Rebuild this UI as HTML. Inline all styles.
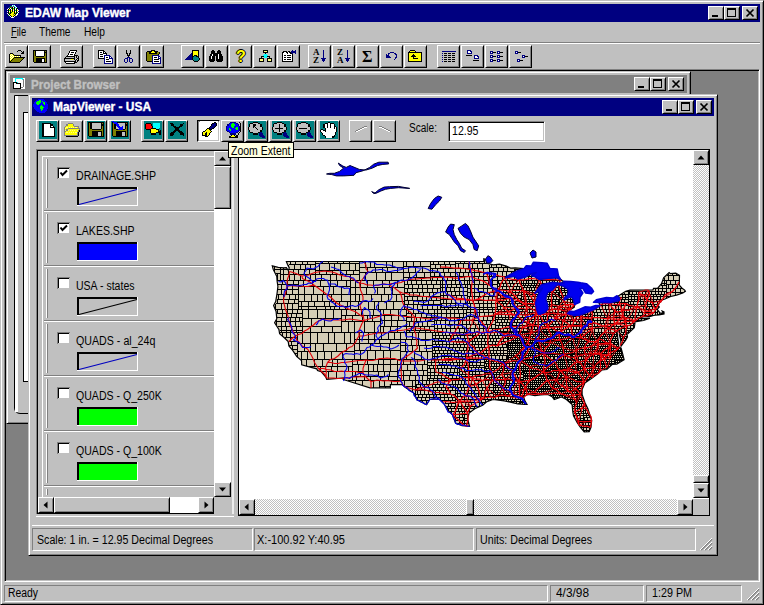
<!DOCTYPE html>
<html><head><meta charset="utf-8"><title>EDAW Map Viewer</title>
<style>
html,body{margin:0;padding:0;}
body{width:764px;height:605px;overflow:hidden;background:#c0c0c0;position:relative;font-family:"Liberation Sans",sans-serif;}
.a{position:absolute;box-sizing:border-box;}
.t{position:absolute;white-space:nowrap;transform-origin:0 0;display:block;}
.t u{text-decoration:underline;}
.dith{background-image:conic-gradient(#fff 25%,#c0c0c0 0 50%,#fff 0 75%,#c0c0c0 0);background-size:2px 2px;}
svg{overflow:visible}
</style></head><body>
<div class="a " style="left:0px;top:0px;width:764px;height:605px;background:#c0c0c0;border:1px solid;border-color:#c0c0c0 #000000 #000000 #c0c0c0;box-shadow:inset 1px 1px #ffffff,inset -1px -1px #808080;"></div>
<div class="a " style="left:4px;top:4px;width:756px;height:18px;background:#000080;"></div>
<svg class="a" style="left:6px;top:5px" width="16" height="13" shape-rendering="crispEdges"><rect x="6" y="0" width="1" height="1" fill="#fff"/><rect x="7" y="0" width="1" height="1" fill="#00ffff"/><rect x="8" y="0" width="1" height="1" fill="#fff"/><rect x="4" y="1" width="1" height="1" fill="#008000"/><rect x="5" y="1" width="1" height="1" fill="#008080"/><rect x="6" y="1" width="1" height="1" fill="#00ffff"/><rect x="7" y="1" width="1" height="1" fill="#ff0000"/><rect x="8" y="1" width="1" height="1" fill="#00ffff"/><rect x="9" y="1" width="1" height="1" fill="#fff"/><rect x="3" y="2" width="1" height="1" fill="#008080"/><rect x="4" y="2" width="1" height="1" fill="#008000"/><rect x="5" y="2" width="1" height="1" fill="#ff0000"/><rect x="6" y="2" width="1" height="1" fill="#000"/><rect x="7" y="2" width="1" height="1" fill="#fff"/><rect x="8" y="2" width="1" height="1" fill="#000"/><rect x="9" y="2" width="1" height="1" fill="#00ffff"/><rect x="10" y="2" width="1" height="1" fill="#fff"/><rect x="2" y="3" width="1" height="1" fill="#fff"/><rect x="3" y="3" width="1" height="1" fill="#000"/><rect x="4" y="3" width="1" height="1" fill="#fff"/><rect x="5" y="3" width="1" height="1" fill="#008000"/><rect x="6" y="3" width="1" height="1" fill="#000"/><rect x="7" y="3" width="1" height="1" fill="#00ff00"/><rect x="8" y="3" width="1" height="1" fill="#000"/><rect x="9" y="3" width="1" height="1" fill="#fff"/><rect x="10" y="3" width="1" height="1" fill="#008000"/><rect x="11" y="3" width="1" height="1" fill="#000"/><rect x="1" y="4" width="1" height="1" fill="#fff"/><rect x="2" y="4" width="1" height="1" fill="#000"/><rect x="3" y="4" width="1" height="1" fill="#ffff00"/><rect x="4" y="4" width="1" height="1" fill="#000"/><rect x="5" y="4" width="1" height="1" fill="#fff"/><rect x="6" y="4" width="1" height="1" fill="#000"/><rect x="7" y="4" width="1" height="1" fill="#ffff00"/><rect x="8" y="4" width="1" height="1" fill="#000"/><rect x="9" y="4" width="1" height="1" fill="#fff"/><rect x="10" y="4" width="1" height="1" fill="#000"/><rect x="11" y="4" width="1" height="1" fill="#fff"/><rect x="2" y="5" width="1" height="1" fill="#000"/><rect x="3" y="5" width="1" height="1" fill="#00ff00"/><rect x="4" y="5" width="1" height="1" fill="#000"/><rect x="5" y="5" width="1" height="1" fill="#ffff00"/><rect x="6" y="5" width="1" height="1" fill="#000"/><rect x="7" y="5" width="1" height="1" fill="#fff"/><rect x="8" y="5" width="1" height="1" fill="#000"/><rect x="9" y="5" width="1" height="1" fill="#00ff00"/><rect x="10" y="5" width="1" height="1" fill="#000"/><rect x="11" y="5" width="1" height="1" fill="#ffff00"/><rect x="12" y="5" width="1" height="1" fill="#fff"/><rect x="1" y="6" width="1" height="1" fill="#fff"/><rect x="2" y="6" width="1" height="1" fill="#000"/><rect x="3" y="6" width="1" height="1" fill="#fff"/><rect x="4" y="6" width="1" height="1" fill="#000"/><rect x="5" y="6" width="1" height="1" fill="#ffff00"/><rect x="6" y="6" width="1" height="1" fill="#000"/><rect x="7" y="6" width="1" height="1" fill="#ffff00"/><rect x="8" y="6" width="1" height="1" fill="#000"/><rect x="9" y="6" width="1" height="1" fill="#fff"/><rect x="10" y="6" width="1" height="1" fill="#000"/><rect x="11" y="6" width="1" height="1" fill="#fff"/><rect x="2" y="7" width="1" height="1" fill="#000"/><rect x="3" y="7" width="1" height="1" fill="#ffff00"/><rect x="4" y="7" width="1" height="1" fill="#000"/><rect x="5" y="7" width="1" height="1" fill="#008000"/><rect x="6" y="7" width="2" height="1" fill="#ffff00"/><rect x="8" y="7" width="1" height="1" fill="#000"/><rect x="9" y="7" width="1" height="1" fill="#ffff00"/><rect x="10" y="7" width="1" height="1" fill="#000"/><rect x="11" y="7" width="1" height="1" fill="#008000"/><rect x="12" y="7" width="1" height="1" fill="#fff"/><rect x="1" y="8" width="1" height="1" fill="#fff"/><rect x="2" y="8" width="1" height="1" fill="#000"/><rect x="3" y="8" width="1" height="1" fill="#008000"/><rect x="4" y="8" width="1" height="1" fill="#000"/><rect x="5" y="8" width="3" height="1" fill="#ffff00"/><rect x="8" y="8" width="1" height="1" fill="#000"/><rect x="9" y="8" width="1" height="1" fill="#008000"/><rect x="10" y="8" width="1" height="1" fill="#000"/><rect x="11" y="8" width="1" height="1" fill="#fff"/><rect x="2" y="9" width="1" height="1" fill="#fff"/><rect x="3" y="9" width="1" height="1" fill="#000"/><rect x="4" y="9" width="3" height="1" fill="#ffff00"/><rect x="7" y="9" width="1" height="1" fill="#808000"/><rect x="8" y="9" width="1" height="1" fill="#ffff00"/><rect x="9" y="9" width="1" height="1" fill="#000"/><rect x="10" y="9" width="2" height="1" fill="#fff"/><rect x="2" y="10" width="1" height="1" fill="#008000"/><rect x="3" y="10" width="1" height="1" fill="#fff"/><rect x="4" y="10" width="1" height="1" fill="#000"/><rect x="5" y="10" width="3" height="1" fill="#ffff00"/><rect x="8" y="10" width="1" height="1" fill="#000"/><rect x="9" y="10" width="1" height="1" fill="#ffff00"/><rect x="10" y="10" width="1" height="1" fill="#fff"/><rect x="4" y="11" width="1" height="1" fill="#fff"/><rect x="5" y="11" width="1" height="1" fill="#000"/><rect x="6" y="11" width="1" height="1" fill="#ffff00"/><rect x="7" y="11" width="1" height="1" fill="#000"/><rect x="8" y="11" width="1" height="1" fill="#fff"/><rect x="5" y="12" width="3" height="1" fill="#fff"/></svg>
<span class="t" style="left:25px;top:7.14px;font-size:12px;line-height:13.79px;font-weight:bold;-webkit-text-stroke:0.35px;color:#ffffff;transform:scaleX(1.0034)">EDAW Map Viewer</span>
<div class="a " style="left:708px;top:6px;width:16px;height:14px;background:#c0c0c0;border:1px solid;border-color:#ffffff #000000 #000000 #ffffff;box-shadow:inset 1px 1px #c0c0c0,inset -1px -1px #808080;"></div>
<div class="a " style="left:712px;top:15px;width:6px;height:2px;background:#000000;"></div>
<div class="a " style="left:724px;top:6px;width:16px;height:14px;background:#c0c0c0;border:1px solid;border-color:#ffffff #000000 #000000 #ffffff;box-shadow:inset 1px 1px #c0c0c0,inset -1px -1px #808080;"></div>
<div class="a " style="left:727px;top:8px;width:9px;height:9px;border:1px solid #000;border-top:2px solid #000;box-sizing:border-box;"></div>
<div class="a " style="left:742px;top:6px;width:16px;height:14px;background:#c0c0c0;border:1px solid;border-color:#ffffff #000000 #000000 #ffffff;box-shadow:inset 1px 1px #c0c0c0,inset -1px -1px #808080;"></div>
<svg class="a" style="left:742px;top:6px" width="16" height="14"><path d="M4.5 3.5 L11.5 10.5 M11.5 3.5 L4.5 10.5" stroke="#000" stroke-width="1.7" fill="none"/></svg>
<span class="t" style="left:10.5px;top:26.14px;font-size:12px;line-height:13.79px;color:#000;transform:scaleX(0.7861)"><u>F</u>ile</span>
<span class="t" style="left:39.3px;top:26.14px;font-size:12px;line-height:13.79px;color:#000;transform:scaleX(0.8434)">Theme</span>
<span class="t" style="left:83.9px;top:26.14px;font-size:12px;line-height:13.79px;color:#000;transform:scaleX(0.8509)">Help</span>
<div class="a " style="left:4px;top:42px;width:756px;height:1px;background:#808080;"></div>
<div class="a " style="left:4px;top:43px;width:756px;height:1px;background:#ffffff;"></div>
<div class="a " style="left:5px;top:45px;width:23px;height:23px;background:#c0c0c0;border:1px solid;border-color:#ffffff #000000 #000000 #ffffff;box-shadow:inset 1px 1px #c0c0c0,inset -1px -1px #808080;"></div>
<svg class="a" style="left:9px;top:49px" width="16" height="14" shape-rendering="crispEdges"><rect x="9" y="1" width="3" height="1" fill="#000"/><rect x="8" y="2" width="1" height="1" fill="#000"/><rect x="12" y="2" width="1" height="1" fill="#000"/><rect x="14" y="2" width="1" height="1" fill="#000"/><rect x="13" y="3" width="2" height="1" fill="#000"/><rect x="1" y="4" width="3" height="1" fill="#000"/><rect x="12" y="4" width="3" height="1" fill="#000"/><rect x="0" y="5" width="1" height="1" fill="#000"/><rect x="1" y="5" width="1" height="1" fill="#ffff00"/><rect x="2" y="5" width="1" height="1" fill="#fff"/><rect x="3" y="5" width="1" height="1" fill="#ffff00"/><rect x="4" y="5" width="1" height="1" fill="#000"/><rect x="0" y="6" width="1" height="1" fill="#000"/><rect x="1" y="6" width="1" height="1" fill="#fff"/><rect x="2" y="6" width="1" height="1" fill="#ffff00"/><rect x="3" y="6" width="1" height="1" fill="#fff"/><rect x="4" y="6" width="1" height="1" fill="#ffff00"/><rect x="5" y="6" width="7" height="1" fill="#000"/><rect x="0" y="7" width="1" height="1" fill="#000"/><rect x="1" y="7" width="1" height="1" fill="#ffff00"/><rect x="2" y="7" width="1" height="1" fill="#fff"/><rect x="3" y="7" width="1" height="1" fill="#ffff00"/><rect x="4" y="7" width="1" height="1" fill="#fff"/><rect x="5" y="7" width="1" height="1" fill="#ffff00"/><rect x="6" y="7" width="1" height="1" fill="#fff"/><rect x="7" y="7" width="1" height="1" fill="#ffff00"/><rect x="8" y="7" width="1" height="1" fill="#fff"/><rect x="9" y="7" width="1" height="1" fill="#ffff00"/><rect x="10" y="7" width="1" height="1" fill="#fff"/><rect x="11" y="7" width="1" height="1" fill="#000"/><rect x="0" y="8" width="1" height="1" fill="#000"/><rect x="1" y="8" width="1" height="1" fill="#fff"/><rect x="2" y="8" width="1" height="1" fill="#ffff00"/><rect x="3" y="8" width="1" height="1" fill="#fff"/><rect x="4" y="8" width="1" height="1" fill="#ffff00"/><rect x="5" y="8" width="11" height="1" fill="#000"/><rect x="0" y="9" width="1" height="1" fill="#000"/><rect x="1" y="9" width="1" height="1" fill="#ffff00"/><rect x="2" y="9" width="1" height="1" fill="#fff"/><rect x="3" y="9" width="1" height="1" fill="#ffff00"/><rect x="4" y="9" width="1" height="1" fill="#000"/><rect x="5" y="9" width="9" height="1" fill="#808000"/><rect x="14" y="9" width="1" height="1" fill="#000"/><rect x="0" y="10" width="1" height="1" fill="#000"/><rect x="1" y="10" width="1" height="1" fill="#fff"/><rect x="2" y="10" width="1" height="1" fill="#ffff00"/><rect x="3" y="10" width="1" height="1" fill="#000"/><rect x="4" y="10" width="9" height="1" fill="#808000"/><rect x="13" y="10" width="1" height="1" fill="#000"/><rect x="0" y="11" width="1" height="1" fill="#000"/><rect x="1" y="11" width="1" height="1" fill="#ffff00"/><rect x="2" y="11" width="1" height="1" fill="#000"/><rect x="3" y="11" width="9" height="1" fill="#808000"/><rect x="12" y="11" width="1" height="1" fill="#000"/><rect x="0" y="12" width="2" height="1" fill="#000"/><rect x="2" y="12" width="9" height="1" fill="#808000"/><rect x="11" y="12" width="1" height="1" fill="#000"/><rect x="0" y="13" width="11" height="1" fill="#000"/></svg>
<div class="a " style="left:28px;top:45px;width:23px;height:23px;background:#c0c0c0;border:1px solid;border-color:#ffffff #000000 #000000 #ffffff;box-shadow:inset 1px 1px #c0c0c0,inset -1px -1px #808080;"></div>
<svg class="a" style="left:32px;top:49px" width="16" height="14" shape-rendering="crispEdges"><rect x="1" y="1" width="14" height="1" fill="#000"/><rect x="1" y="2" width="1" height="1" fill="#000"/><rect x="2" y="2" width="1" height="1" fill="#808000"/><rect x="3" y="2" width="1" height="1" fill="#000"/><rect x="4" y="2" width="8" height="1" fill="#fff"/><rect x="12" y="2" width="1" height="1" fill="#000"/><rect x="13" y="2" width="1" height="1" fill="#808000"/><rect x="14" y="2" width="1" height="1" fill="#000"/><rect x="1" y="3" width="1" height="1" fill="#000"/><rect x="2" y="3" width="1" height="1" fill="#808000"/><rect x="3" y="3" width="1" height="1" fill="#000"/><rect x="4" y="3" width="8" height="1" fill="#fff"/><rect x="12" y="3" width="3" height="1" fill="#000"/><rect x="1" y="4" width="1" height="1" fill="#000"/><rect x="2" y="4" width="1" height="1" fill="#808000"/><rect x="3" y="4" width="1" height="1" fill="#000"/><rect x="4" y="4" width="8" height="1" fill="#fff"/><rect x="12" y="4" width="1" height="1" fill="#000"/><rect x="13" y="4" width="1" height="1" fill="#808000"/><rect x="14" y="4" width="1" height="1" fill="#000"/><rect x="1" y="5" width="1" height="1" fill="#000"/><rect x="2" y="5" width="1" height="1" fill="#808000"/><rect x="3" y="5" width="1" height="1" fill="#000"/><rect x="4" y="5" width="8" height="1" fill="#fff"/><rect x="12" y="5" width="1" height="1" fill="#000"/><rect x="13" y="5" width="1" height="1" fill="#808000"/><rect x="14" y="5" width="1" height="1" fill="#000"/><rect x="1" y="6" width="1" height="1" fill="#000"/><rect x="2" y="6" width="1" height="1" fill="#808000"/><rect x="3" y="6" width="1" height="1" fill="#000"/><rect x="4" y="6" width="8" height="1" fill="#fff"/><rect x="12" y="6" width="1" height="1" fill="#000"/><rect x="13" y="6" width="1" height="1" fill="#808000"/><rect x="14" y="6" width="1" height="1" fill="#000"/><rect x="1" y="7" width="1" height="1" fill="#000"/><rect x="2" y="7" width="2" height="1" fill="#808000"/><rect x="4" y="7" width="8" height="1" fill="#000"/><rect x="12" y="7" width="2" height="1" fill="#808000"/><rect x="14" y="7" width="1" height="1" fill="#000"/><rect x="1" y="8" width="1" height="1" fill="#000"/><rect x="2" y="8" width="12" height="1" fill="#808000"/><rect x="14" y="8" width="1" height="1" fill="#000"/><rect x="1" y="9" width="1" height="1" fill="#000"/><rect x="2" y="9" width="2" height="1" fill="#808000"/><rect x="4" y="9" width="9" height="1" fill="#000"/><rect x="13" y="9" width="1" height="1" fill="#808000"/><rect x="14" y="9" width="1" height="1" fill="#000"/><rect x="1" y="10" width="1" height="1" fill="#000"/><rect x="2" y="10" width="2" height="1" fill="#808000"/><rect x="4" y="10" width="6" height="1" fill="#000"/><rect x="10" y="10" width="2" height="1" fill="#fff"/><rect x="12" y="10" width="1" height="1" fill="#000"/><rect x="13" y="10" width="1" height="1" fill="#808000"/><rect x="14" y="10" width="1" height="1" fill="#000"/><rect x="1" y="11" width="1" height="1" fill="#000"/><rect x="2" y="11" width="2" height="1" fill="#808000"/><rect x="4" y="11" width="6" height="1" fill="#000"/><rect x="10" y="11" width="2" height="1" fill="#fff"/><rect x="12" y="11" width="1" height="1" fill="#000"/><rect x="13" y="11" width="1" height="1" fill="#808000"/><rect x="14" y="11" width="1" height="1" fill="#000"/><rect x="1" y="12" width="1" height="1" fill="#000"/><rect x="2" y="12" width="2" height="1" fill="#808000"/><rect x="4" y="12" width="6" height="1" fill="#000"/><rect x="10" y="12" width="2" height="1" fill="#fff"/><rect x="12" y="12" width="1" height="1" fill="#000"/><rect x="13" y="12" width="1" height="1" fill="#808000"/><rect x="14" y="12" width="1" height="1" fill="#000"/><rect x="2" y="13" width="13" height="1" fill="#000"/></svg>
<div class="a " style="left:60px;top:45px;width:23px;height:23px;background:#c0c0c0;border:1px solid;border-color:#ffffff #000000 #000000 #ffffff;box-shadow:inset 1px 1px #c0c0c0,inset -1px -1px #808080;"></div>
<svg class="a" style="left:64px;top:49px" width="16" height="15" shape-rendering="crispEdges"><rect x="6" y="1" width="7" height="1" fill="#000"/><rect x="5" y="2" width="1" height="1" fill="#000"/><rect x="6" y="2" width="6" height="1" fill="#fff"/><rect x="12" y="2" width="1" height="1" fill="#000"/><rect x="5" y="3" width="1" height="1" fill="#000"/><rect x="6" y="3" width="1" height="1" fill="#fff"/><rect x="7" y="3" width="3" height="1" fill="#000"/><rect x="10" y="3" width="1" height="1" fill="#fff"/><rect x="11" y="3" width="1" height="1" fill="#000"/><rect x="4" y="4" width="1" height="1" fill="#000"/><rect x="5" y="4" width="6" height="1" fill="#fff"/><rect x="11" y="4" width="1" height="1" fill="#000"/><rect x="4" y="5" width="1" height="1" fill="#000"/><rect x="5" y="5" width="1" height="1" fill="#fff"/><rect x="6" y="5" width="3" height="1" fill="#000"/><rect x="9" y="5" width="1" height="1" fill="#fff"/><rect x="10" y="5" width="1" height="1" fill="#000"/><rect x="3" y="6" width="1" height="1" fill="#000"/><rect x="4" y="6" width="6" height="1" fill="#fff"/><rect x="10" y="6" width="4" height="1" fill="#000"/><rect x="2" y="7" width="9" height="1" fill="#000"/><rect x="11" y="7" width="1" height="1" fill="#c0c0c0"/><rect x="12" y="7" width="1" height="1" fill="#000"/><rect x="13" y="7" width="1" height="1" fill="#c0c0c0"/><rect x="14" y="7" width="1" height="1" fill="#000"/><rect x="1" y="8" width="1" height="1" fill="#000"/><rect x="2" y="8" width="8" height="1" fill="#c0c0c0"/><rect x="10" y="8" width="1" height="1" fill="#000"/><rect x="11" y="8" width="1" height="1" fill="#c0c0c0"/><rect x="12" y="8" width="1" height="1" fill="#000"/><rect x="13" y="8" width="1" height="1" fill="#c0c0c0"/><rect x="14" y="8" width="1" height="1" fill="#000"/><rect x="0" y="9" width="11" height="1" fill="#000"/><rect x="11" y="9" width="2" height="1" fill="#c0c0c0"/><rect x="13" y="9" width="2" height="1" fill="#000"/><rect x="0" y="10" width="1" height="1" fill="#000"/><rect x="1" y="10" width="6" height="1" fill="#c0c0c0"/><rect x="7" y="10" width="2" height="1" fill="#ffff00"/><rect x="9" y="10" width="1" height="1" fill="#c0c0c0"/><rect x="10" y="10" width="1" height="1" fill="#000"/><rect x="11" y="10" width="1" height="1" fill="#c0c0c0"/><rect x="12" y="10" width="1" height="1" fill="#000"/><rect x="13" y="10" width="1" height="1" fill="#c0c0c0"/><rect x="14" y="10" width="1" height="1" fill="#000"/><rect x="0" y="11" width="1" height="1" fill="#000"/><rect x="1" y="11" width="10" height="1" fill="#c0c0c0"/><rect x="11" y="11" width="1" height="1" fill="#000"/><rect x="12" y="11" width="1" height="1" fill="#c0c0c0"/><rect x="13" y="11" width="2" height="1" fill="#000"/><rect x="0" y="12" width="12" height="1" fill="#000"/><rect x="12" y="12" width="1" height="1" fill="#c0c0c0"/><rect x="13" y="12" width="1" height="1" fill="#000"/><rect x="1" y="13" width="1" height="1" fill="#000"/><rect x="2" y="13" width="8" height="1" fill="#fff"/><rect x="10" y="13" width="3" height="1" fill="#000"/><rect x="2" y="14" width="9" height="1" fill="#000"/></svg>
<div class="a " style="left:93px;top:45px;width:23px;height:23px;background:#c0c0c0;border:1px solid;border-color:#ffffff #000000 #000000 #ffffff;box-shadow:inset 1px 1px #c0c0c0,inset -1px -1px #808080;"></div>
<svg class="a" style="left:97px;top:49px" width="16" height="15" shape-rendering="crispEdges"><rect x="1" y="1" width="6" height="1" fill="#000"/><rect x="1" y="2" width="1" height="1" fill="#000"/><rect x="2" y="2" width="4" height="1" fill="#fff"/><rect x="6" y="2" width="2" height="1" fill="#000"/><rect x="1" y="3" width="1" height="1" fill="#000"/><rect x="2" y="3" width="1" height="1" fill="#fff"/><rect x="3" y="3" width="2" height="1" fill="#000"/><rect x="5" y="3" width="1" height="1" fill="#fff"/><rect x="6" y="3" width="1" height="1" fill="#000"/><rect x="7" y="3" width="1" height="1" fill="#fff"/><rect x="8" y="3" width="1" height="1" fill="#000"/><rect x="1" y="4" width="1" height="1" fill="#000"/><rect x="2" y="4" width="4" height="1" fill="#fff"/><rect x="6" y="4" width="4" height="1" fill="#000"/><rect x="1" y="5" width="1" height="1" fill="#000"/><rect x="2" y="5" width="1" height="1" fill="#fff"/><rect x="3" y="5" width="3" height="1" fill="#000"/><rect x="6" y="5" width="3" height="1" fill="#fff"/><rect x="9" y="5" width="1" height="1" fill="#000"/><rect x="1" y="6" width="1" height="1" fill="#000"/><rect x="2" y="6" width="5" height="1" fill="#fff"/><rect x="7" y="6" width="6" height="1" fill="#000080"/><rect x="1" y="7" width="1" height="1" fill="#000"/><rect x="2" y="7" width="1" height="1" fill="#fff"/><rect x="3" y="7" width="3" height="1" fill="#000"/><rect x="6" y="7" width="1" height="1" fill="#fff"/><rect x="7" y="7" width="1" height="1" fill="#000080"/><rect x="8" y="7" width="4" height="1" fill="#fff"/><rect x="12" y="7" width="2" height="1" fill="#000080"/><rect x="1" y="8" width="1" height="1" fill="#000"/><rect x="2" y="8" width="5" height="1" fill="#fff"/><rect x="7" y="8" width="1" height="1" fill="#000080"/><rect x="8" y="8" width="1" height="1" fill="#fff"/><rect x="9" y="8" width="2" height="1" fill="#000"/><rect x="11" y="8" width="1" height="1" fill="#fff"/><rect x="12" y="8" width="1" height="1" fill="#000080"/><rect x="13" y="8" width="1" height="1" fill="#fff"/><rect x="14" y="8" width="1" height="1" fill="#000080"/><rect x="1" y="9" width="6" height="1" fill="#000"/><rect x="7" y="9" width="1" height="1" fill="#000080"/><rect x="8" y="9" width="4" height="1" fill="#fff"/><rect x="12" y="9" width="4" height="1" fill="#000080"/><rect x="7" y="10" width="1" height="1" fill="#000080"/><rect x="8" y="10" width="1" height="1" fill="#fff"/><rect x="9" y="10" width="3" height="1" fill="#000"/><rect x="12" y="10" width="3" height="1" fill="#fff"/><rect x="15" y="10" width="1" height="1" fill="#000080"/><rect x="7" y="11" width="1" height="1" fill="#000080"/><rect x="8" y="11" width="7" height="1" fill="#fff"/><rect x="15" y="11" width="1" height="1" fill="#000080"/><rect x="7" y="12" width="1" height="1" fill="#000080"/><rect x="8" y="12" width="1" height="1" fill="#fff"/><rect x="9" y="12" width="5" height="1" fill="#000"/><rect x="14" y="12" width="1" height="1" fill="#fff"/><rect x="15" y="12" width="1" height="1" fill="#000080"/><rect x="7" y="13" width="1" height="1" fill="#000080"/><rect x="8" y="13" width="7" height="1" fill="#fff"/><rect x="15" y="13" width="1" height="1" fill="#000080"/><rect x="7" y="14" width="9" height="1" fill="#000080"/></svg>
<div class="a " style="left:117px;top:45px;width:23px;height:23px;background:#c0c0c0;border:1px solid;border-color:#ffffff #000000 #000000 #ffffff;box-shadow:inset 1px 1px #c0c0c0,inset -1px -1px #808080;"></div>
<svg class="a" style="left:121px;top:49px" width="16" height="14" shape-rendering="crispEdges"><rect x="5" y="1" width="1" height="1" fill="#000"/><rect x="9" y="1" width="1" height="1" fill="#000"/><rect x="5" y="2" width="1" height="1" fill="#000"/><rect x="9" y="2" width="1" height="1" fill="#000"/><rect x="5" y="3" width="1" height="1" fill="#000"/><rect x="9" y="3" width="1" height="1" fill="#000"/><rect x="5" y="4" width="2" height="1" fill="#000"/><rect x="8" y="4" width="2" height="1" fill="#000"/><rect x="6" y="5" width="1" height="1" fill="#000"/><rect x="8" y="5" width="1" height="1" fill="#000"/><rect x="6" y="6" width="3" height="1" fill="#000"/><rect x="7" y="7" width="1" height="1" fill="#000"/><rect x="6" y="8" width="3" height="1" fill="#000080"/><rect x="4" y="9" width="3" height="1" fill="#000080"/><rect x="8" y="9" width="3" height="1" fill="#000080"/><rect x="3" y="10" width="1" height="1" fill="#000080"/><rect x="6" y="10" width="1" height="1" fill="#000080"/><rect x="8" y="10" width="1" height="1" fill="#000080"/><rect x="11" y="10" width="1" height="1" fill="#000080"/><rect x="3" y="11" width="1" height="1" fill="#000080"/><rect x="6" y="11" width="1" height="1" fill="#000080"/><rect x="8" y="11" width="1" height="1" fill="#000080"/><rect x="11" y="11" width="1" height="1" fill="#000080"/><rect x="3" y="12" width="1" height="1" fill="#000080"/><rect x="6" y="12" width="1" height="1" fill="#000080"/><rect x="8" y="12" width="1" height="1" fill="#000080"/><rect x="11" y="12" width="1" height="1" fill="#000080"/><rect x="4" y="13" width="2" height="1" fill="#000080"/><rect x="9" y="13" width="2" height="1" fill="#000080"/></svg>
<div class="a " style="left:141px;top:45px;width:23px;height:23px;background:#c0c0c0;border:1px solid;border-color:#ffffff #000000 #000000 #ffffff;box-shadow:inset 1px 1px #c0c0c0,inset -1px -1px #808080;"></div>
<svg class="a" style="left:145px;top:49px" width="16" height="15" shape-rendering="crispEdges"><rect x="6" y="1" width="4" height="1" fill="#000"/><rect x="2" y="2" width="5" height="1" fill="#000"/><rect x="7" y="2" width="2" height="1" fill="#ffff00"/><rect x="9" y="2" width="4" height="1" fill="#000"/><rect x="1" y="3" width="1" height="1" fill="#000"/><rect x="2" y="3" width="2" height="1" fill="#808000"/><rect x="4" y="3" width="2" height="1" fill="#000"/><rect x="6" y="3" width="4" height="1" fill="#ffff00"/><rect x="10" y="3" width="2" height="1" fill="#000"/><rect x="12" y="3" width="2" height="1" fill="#808000"/><rect x="14" y="3" width="1" height="1" fill="#000"/><rect x="1" y="4" width="1" height="1" fill="#000"/><rect x="2" y="4" width="2" height="1" fill="#808000"/><rect x="4" y="4" width="8" height="1" fill="#000"/><rect x="12" y="4" width="2" height="1" fill="#808000"/><rect x="14" y="4" width="1" height="1" fill="#000"/><rect x="1" y="5" width="1" height="1" fill="#000"/><rect x="2" y="5" width="11" height="1" fill="#808000"/><rect x="13" y="5" width="1" height="1" fill="#000"/><rect x="1" y="6" width="1" height="1" fill="#000"/><rect x="2" y="6" width="5" height="1" fill="#808000"/><rect x="7" y="6" width="7" height="1" fill="#000080"/><rect x="1" y="7" width="1" height="1" fill="#000"/><rect x="2" y="7" width="5" height="1" fill="#808000"/><rect x="7" y="7" width="1" height="1" fill="#000080"/><rect x="8" y="7" width="5" height="1" fill="#fff"/><rect x="13" y="7" width="2" height="1" fill="#000080"/><rect x="1" y="8" width="1" height="1" fill="#000"/><rect x="2" y="8" width="5" height="1" fill="#808000"/><rect x="7" y="8" width="1" height="1" fill="#000080"/><rect x="8" y="8" width="1" height="1" fill="#fff"/><rect x="9" y="8" width="3" height="1" fill="#000"/><rect x="12" y="8" width="1" height="1" fill="#fff"/><rect x="13" y="8" width="1" height="1" fill="#000080"/><rect x="14" y="8" width="1" height="1" fill="#fff"/><rect x="15" y="8" width="1" height="1" fill="#000080"/><rect x="1" y="9" width="1" height="1" fill="#000"/><rect x="2" y="9" width="5" height="1" fill="#808000"/><rect x="7" y="9" width="1" height="1" fill="#000080"/><rect x="8" y="9" width="5" height="1" fill="#fff"/><rect x="13" y="9" width="3" height="1" fill="#000080"/><rect x="1" y="10" width="1" height="1" fill="#000"/><rect x="2" y="10" width="5" height="1" fill="#808000"/><rect x="7" y="10" width="1" height="1" fill="#000080"/><rect x="8" y="10" width="1" height="1" fill="#fff"/><rect x="9" y="10" width="5" height="1" fill="#000"/><rect x="14" y="10" width="1" height="1" fill="#fff"/><rect x="15" y="10" width="1" height="1" fill="#000080"/><rect x="1" y="11" width="1" height="1" fill="#000"/><rect x="2" y="11" width="5" height="1" fill="#808000"/><rect x="7" y="11" width="1" height="1" fill="#000080"/><rect x="8" y="11" width="7" height="1" fill="#fff"/><rect x="15" y="11" width="1" height="1" fill="#000080"/><rect x="2" y="12" width="5" height="1" fill="#000"/><rect x="7" y="12" width="1" height="1" fill="#000080"/><rect x="8" y="12" width="1" height="1" fill="#fff"/><rect x="9" y="12" width="5" height="1" fill="#000"/><rect x="14" y="12" width="1" height="1" fill="#fff"/><rect x="15" y="12" width="1" height="1" fill="#000080"/><rect x="7" y="13" width="1" height="1" fill="#000080"/><rect x="8" y="13" width="7" height="1" fill="#fff"/><rect x="15" y="13" width="1" height="1" fill="#000080"/><rect x="7" y="14" width="9" height="1" fill="#000080"/></svg>
<div class="a " style="left:181px;top:45px;width:23px;height:23px;background:#c0c0c0;border:1px solid;border-color:#ffffff #000000 #000000 #ffffff;box-shadow:inset 1px 1px #c0c0c0,inset -1px -1px #808080;"></div>
<svg class="a" style="left:185px;top:49px" width="16" height="14" shape-rendering="crispEdges"><rect x="7" y="1" width="7" height="1" fill="#000"/><rect x="7" y="2" width="1" height="1" fill="#000"/><rect x="8" y="2" width="5" height="1" fill="#ffff00"/><rect x="13" y="2" width="1" height="1" fill="#000"/><rect x="7" y="3" width="1" height="1" fill="#000"/><rect x="8" y="3" width="5" height="1" fill="#ffff00"/><rect x="13" y="3" width="1" height="1" fill="#000"/><rect x="6" y="4" width="1" height="1" fill="#000080"/><rect x="7" y="4" width="1" height="1" fill="#000"/><rect x="8" y="4" width="5" height="1" fill="#ffff00"/><rect x="13" y="4" width="1" height="1" fill="#000"/><rect x="5" y="5" width="2" height="1" fill="#000080"/><rect x="7" y="5" width="1" height="1" fill="#000"/><rect x="8" y="5" width="5" height="1" fill="#ffff00"/><rect x="13" y="5" width="1" height="1" fill="#000"/><rect x="4" y="6" width="3" height="1" fill="#000080"/><rect x="7" y="6" width="1" height="1" fill="#000"/><rect x="8" y="6" width="1" height="1" fill="#ffff00"/><rect x="9" y="6" width="3" height="1" fill="#000"/><rect x="12" y="6" width="1" height="1" fill="#ffff00"/><rect x="13" y="6" width="1" height="1" fill="#000"/><rect x="3" y="7" width="4" height="1" fill="#000080"/><rect x="7" y="7" width="2" height="1" fill="#000"/><rect x="9" y="7" width="2" height="1" fill="#008080"/><rect x="11" y="7" width="3" height="1" fill="#000"/><rect x="2" y="8" width="5" height="1" fill="#000080"/><rect x="7" y="8" width="1" height="1" fill="#000"/><rect x="8" y="8" width="5" height="1" fill="#008080"/><rect x="13" y="8" width="1" height="1" fill="#000"/><rect x="1" y="9" width="6" height="1" fill="#000080"/><rect x="7" y="9" width="1" height="1" fill="#000"/><rect x="8" y="9" width="6" height="1" fill="#008080"/><rect x="14" y="9" width="1" height="1" fill="#000"/><rect x="0" y="10" width="7" height="1" fill="#000080"/><rect x="7" y="10" width="1" height="1" fill="#000"/><rect x="8" y="10" width="6" height="1" fill="#008080"/><rect x="14" y="10" width="1" height="1" fill="#000"/><rect x="8" y="11" width="1" height="1" fill="#000"/><rect x="9" y="11" width="4" height="1" fill="#008080"/><rect x="13" y="11" width="1" height="1" fill="#000"/><rect x="9" y="12" width="4" height="1" fill="#000"/></svg>
<div class="a " style="left:205px;top:45px;width:23px;height:23px;background:#c0c0c0;border:1px solid;border-color:#ffffff #000000 #000000 #ffffff;box-shadow:inset 1px 1px #c0c0c0,inset -1px -1px #808080;"></div>
<svg class="a" style="left:209px;top:49px" width="16" height="14" shape-rendering="crispEdges"><rect x="3" y="1" width="2" height="1" fill="#000"/><rect x="9" y="1" width="2" height="1" fill="#000"/><rect x="2" y="2" width="4" height="1" fill="#000"/><rect x="8" y="2" width="4" height="1" fill="#000"/><rect x="2" y="3" width="4" height="1" fill="#000"/><rect x="8" y="3" width="4" height="1" fill="#000"/><rect x="2" y="4" width="10" height="1" fill="#000"/><rect x="1" y="5" width="2" height="1" fill="#000"/><rect x="3" y="5" width="1" height="1" fill="#fff"/><rect x="4" y="5" width="5" height="1" fill="#000"/><rect x="9" y="5" width="1" height="1" fill="#fff"/><rect x="10" y="5" width="3" height="1" fill="#000"/><rect x="1" y="6" width="2" height="1" fill="#000"/><rect x="3" y="6" width="1" height="1" fill="#fff"/><rect x="4" y="6" width="5" height="1" fill="#000"/><rect x="9" y="6" width="1" height="1" fill="#fff"/><rect x="10" y="6" width="3" height="1" fill="#000"/><rect x="0" y="7" width="2" height="1" fill="#000"/><rect x="2" y="7" width="1" height="1" fill="#fff"/><rect x="3" y="7" width="3" height="1" fill="#000"/><rect x="7" y="7" width="2" height="1" fill="#000"/><rect x="9" y="7" width="1" height="1" fill="#fff"/><rect x="10" y="7" width="4" height="1" fill="#000"/><rect x="0" y="8" width="2" height="1" fill="#000"/><rect x="2" y="8" width="1" height="1" fill="#fff"/><rect x="3" y="8" width="3" height="1" fill="#000"/><rect x="7" y="8" width="2" height="1" fill="#000"/><rect x="9" y="8" width="1" height="1" fill="#fff"/><rect x="10" y="8" width="4" height="1" fill="#000"/><rect x="0" y="9" width="2" height="1" fill="#000"/><rect x="2" y="9" width="1" height="1" fill="#fff"/><rect x="3" y="9" width="3" height="1" fill="#000"/><rect x="7" y="9" width="2" height="1" fill="#000"/><rect x="9" y="9" width="1" height="1" fill="#fff"/><rect x="10" y="9" width="4" height="1" fill="#000"/><rect x="0" y="10" width="6" height="1" fill="#000"/><rect x="7" y="10" width="7" height="1" fill="#000"/><rect x="0" y="11" width="6" height="1" fill="#000"/><rect x="7" y="11" width="7" height="1" fill="#000"/><rect x="1" y="12" width="4" height="1" fill="#000"/><rect x="8" y="12" width="5" height="1" fill="#000"/></svg>
<div class="a " style="left:229px;top:45px;width:23px;height:23px;background:#c0c0c0;border:1px solid;border-color:#ffffff #000000 #000000 #ffffff;box-shadow:inset 1px 1px #c0c0c0,inset -1px -1px #808080;"></div>
<span class="t" style="left:236px;top:48px;font:bold 16px/18px 'Liberation Sans',sans-serif;color:#ffff00;text-shadow:1px 0 #000,-1px 0 #000,0 1px #000,0 -1px #000;">?</span>
<div class="a " style="left:253px;top:45px;width:23px;height:23px;background:#c0c0c0;border:1px solid;border-color:#ffffff #000000 #000000 #ffffff;box-shadow:inset 1px 1px #c0c0c0,inset -1px -1px #808080;"></div>
<svg class="a" style="left:257px;top:49px" width="16" height="14" shape-rendering="crispEdges"><rect x="6" y="1" width="5" height="1" fill="#000"/><rect x="6" y="2" width="1" height="1" fill="#000"/><rect x="7" y="2" width="3" height="1" fill="#ffff80"/><rect x="10" y="2" width="1" height="1" fill="#000"/><rect x="6" y="3" width="5" height="1" fill="#000"/><rect x="8" y="4" width="1" height="1" fill="#000"/><rect x="7" y="5" width="3" height="1" fill="#00ffff"/><rect x="6" y="6" width="5" height="1" fill="#00ffff"/><rect x="4" y="7" width="3" height="1" fill="#000"/><rect x="7" y="7" width="3" height="1" fill="#00ffff"/><rect x="10" y="7" width="3" height="1" fill="#000"/><rect x="4" y="8" width="1" height="1" fill="#000"/><rect x="7" y="8" width="3" height="1" fill="#00ffff"/><rect x="12" y="8" width="1" height="1" fill="#000"/><rect x="2" y="9" width="5" height="1" fill="#000"/><rect x="10" y="9" width="5" height="1" fill="#000"/><rect x="2" y="10" width="1" height="1" fill="#000"/><rect x="3" y="10" width="3" height="1" fill="#ffff80"/><rect x="6" y="10" width="1" height="1" fill="#000"/><rect x="10" y="10" width="1" height="1" fill="#000"/><rect x="11" y="10" width="3" height="1" fill="#ffff80"/><rect x="14" y="10" width="1" height="1" fill="#000"/><rect x="2" y="11" width="1" height="1" fill="#000"/><rect x="3" y="11" width="3" height="1" fill="#ffff80"/><rect x="6" y="11" width="1" height="1" fill="#000"/><rect x="10" y="11" width="1" height="1" fill="#000"/><rect x="11" y="11" width="3" height="1" fill="#ffff80"/><rect x="14" y="11" width="1" height="1" fill="#000"/><rect x="2" y="12" width="5" height="1" fill="#000"/><rect x="10" y="12" width="5" height="1" fill="#000"/></svg>
<div class="a " style="left:277px;top:45px;width:23px;height:23px;background:#c0c0c0;border:1px solid;border-color:#ffffff #000000 #000000 #ffffff;box-shadow:inset 1px 1px #c0c0c0,inset -1px -1px #808080;"></div>
<svg class="a" style="left:281px;top:49px" width="16" height="14" shape-rendering="crispEdges"><rect x="11" y="1" width="1" height="1" fill="#000080"/><rect x="14" y="1" width="1" height="1" fill="#000080"/><rect x="2" y="2" width="4" height="1" fill="#000"/><rect x="7" y="2" width="2" height="1" fill="#000"/><rect x="10" y="2" width="5" height="1" fill="#000080"/><rect x="1" y="3" width="2" height="1" fill="#000"/><rect x="3" y="3" width="2" height="1" fill="#fff"/><rect x="5" y="3" width="2" height="1" fill="#000"/><rect x="7" y="3" width="1" height="1" fill="#fff"/><rect x="8" y="3" width="2" height="1" fill="#000"/><rect x="10" y="3" width="5" height="1" fill="#000080"/><rect x="1" y="4" width="1" height="1" fill="#000"/><rect x="2" y="4" width="4" height="1" fill="#fff"/><rect x="6" y="4" width="1" height="1" fill="#000"/><rect x="7" y="4" width="2" height="1" fill="#fff"/><rect x="9" y="4" width="2" height="1" fill="#000"/><rect x="11" y="4" width="1" height="1" fill="#000080"/><rect x="14" y="4" width="1" height="1" fill="#000080"/><rect x="1" y="5" width="1" height="1" fill="#000"/><rect x="2" y="5" width="9" height="1" fill="#fff"/><rect x="11" y="5" width="1" height="1" fill="#000"/><rect x="1" y="6" width="1" height="1" fill="#000"/><rect x="2" y="6" width="1" height="1" fill="#fff"/><rect x="3" y="6" width="2" height="1" fill="#000"/><rect x="5" y="6" width="1" height="1" fill="#fff"/><rect x="6" y="6" width="4" height="1" fill="#000"/><rect x="10" y="6" width="1" height="1" fill="#fff"/><rect x="11" y="6" width="1" height="1" fill="#000"/><rect x="1" y="7" width="1" height="1" fill="#000"/><rect x="2" y="7" width="9" height="1" fill="#fff"/><rect x="11" y="7" width="1" height="1" fill="#000"/><rect x="1" y="8" width="1" height="1" fill="#000"/><rect x="2" y="8" width="1" height="1" fill="#fff"/><rect x="3" y="8" width="2" height="1" fill="#000"/><rect x="5" y="8" width="1" height="1" fill="#fff"/><rect x="6" y="8" width="4" height="1" fill="#000"/><rect x="10" y="8" width="1" height="1" fill="#fff"/><rect x="11" y="8" width="1" height="1" fill="#000"/><rect x="1" y="9" width="1" height="1" fill="#000"/><rect x="2" y="9" width="9" height="1" fill="#fff"/><rect x="11" y="9" width="1" height="1" fill="#000"/><rect x="1" y="10" width="1" height="1" fill="#000"/><rect x="2" y="10" width="1" height="1" fill="#fff"/><rect x="3" y="10" width="2" height="1" fill="#000"/><rect x="5" y="10" width="1" height="1" fill="#fff"/><rect x="6" y="10" width="4" height="1" fill="#000"/><rect x="10" y="10" width="1" height="1" fill="#fff"/><rect x="11" y="10" width="1" height="1" fill="#000"/><rect x="1" y="11" width="1" height="1" fill="#000"/><rect x="2" y="11" width="9" height="1" fill="#fff"/><rect x="11" y="11" width="1" height="1" fill="#000"/><rect x="1" y="12" width="11" height="1" fill="#000"/></svg>
<div class="a " style="left:308px;top:45px;width:23px;height:23px;background:#c0c0c0;border:1px solid;border-color:#ffffff #000000 #000000 #ffffff;box-shadow:inset 1px 1px #c0c0c0,inset -1px -1px #808080;"></div>
<span class="t" style="left:313px;top:48px;font:bold 9px/9px 'Liberation Serif',serif;">A</span>
<span class="t" style="left:313px;top:56px;font:bold 9px/9px 'Liberation Serif',serif;">Z</span>
<svg class="a" style="left:321px;top:50px" width="5" height="12" shape-rendering="crispEdges"><rect x="2" y="0" width="1" height="1" fill="#000080"/><rect x="2" y="1" width="1" height="1" fill="#000080"/><rect x="2" y="2" width="1" height="1" fill="#000080"/><rect x="2" y="3" width="1" height="1" fill="#000080"/><rect x="2" y="4" width="1" height="1" fill="#000080"/><rect x="2" y="5" width="1" height="1" fill="#000080"/><rect x="2" y="6" width="1" height="1" fill="#000080"/><rect x="2" y="7" width="1" height="1" fill="#000080"/><rect x="0" y="8" width="5" height="1" fill="#000080"/><rect x="1" y="9" width="3" height="1" fill="#000080"/><rect x="1" y="10" width="3" height="1" fill="#000080"/><rect x="2" y="11" width="1" height="1" fill="#000080"/></svg>
<div class="a " style="left:332px;top:45px;width:23px;height:23px;background:#c0c0c0;border:1px solid;border-color:#ffffff #000000 #000000 #ffffff;box-shadow:inset 1px 1px #c0c0c0,inset -1px -1px #808080;"></div>
<span class="t" style="left:337px;top:48px;font:bold 9px/9px 'Liberation Serif',serif;">Z</span>
<span class="t" style="left:337px;top:56px;font:bold 9px/9px 'Liberation Serif',serif;">A</span>
<svg class="a" style="left:345px;top:50px" width="5" height="12" shape-rendering="crispEdges"><rect x="2" y="0" width="1" height="1" fill="#000080"/><rect x="2" y="1" width="1" height="1" fill="#000080"/><rect x="2" y="2" width="1" height="1" fill="#000080"/><rect x="2" y="3" width="1" height="1" fill="#000080"/><rect x="2" y="4" width="1" height="1" fill="#000080"/><rect x="2" y="5" width="1" height="1" fill="#000080"/><rect x="2" y="6" width="1" height="1" fill="#000080"/><rect x="2" y="7" width="1" height="1" fill="#000080"/><rect x="0" y="8" width="5" height="1" fill="#000080"/><rect x="1" y="9" width="3" height="1" fill="#000080"/><rect x="1" y="10" width="3" height="1" fill="#000080"/><rect x="2" y="11" width="1" height="1" fill="#000080"/></svg>
<div class="a " style="left:356px;top:45px;width:23px;height:23px;background:#c0c0c0;border:1px solid;border-color:#ffffff #000000 #000000 #ffffff;box-shadow:inset 1px 1px #c0c0c0,inset -1px -1px #808080;"></div>
<span class="t" style="left:362px;top:48px;font:bold 16px/18px 'Liberation Serif',serif;">Σ</span>
<div class="a " style="left:380px;top:45px;width:23px;height:23px;background:#c0c0c0;border:1px solid;border-color:#ffffff #000000 #000000 #ffffff;box-shadow:inset 1px 1px #c0c0c0,inset -1px -1px #808080;"></div>
<svg class="a" style="left:384px;top:49px" width="16" height="13" shape-rendering="crispEdges"><rect x="6" y="3" width="4" height="1" fill="#000080"/><rect x="4" y="4" width="2" height="1" fill="#000080"/><rect x="10" y="4" width="2" height="1" fill="#000080"/><rect x="2" y="5" width="1" height="1" fill="#000080"/><rect x="4" y="5" width="1" height="1" fill="#000080"/><rect x="11" y="5" width="2" height="1" fill="#000080"/><rect x="2" y="6" width="3" height="1" fill="#000080"/><rect x="12" y="6" width="1" height="1" fill="#000080"/><rect x="2" y="7" width="4" height="1" fill="#000080"/><rect x="12" y="7" width="1" height="1" fill="#000080"/><rect x="2" y="8" width="5" height="1" fill="#000080"/><rect x="11" y="8" width="2" height="1" fill="#000080"/><rect x="11" y="9" width="1" height="1" fill="#000080"/><rect x="10" y="10" width="1" height="1" fill="#000080"/></svg>
<div class="a " style="left:404px;top:45px;width:23px;height:23px;background:#c0c0c0;border:1px solid;border-color:#ffffff #000000 #000000 #ffffff;box-shadow:inset 1px 1px #c0c0c0,inset -1px -1px #808080;"></div>
<svg class="a" style="left:408px;top:49px" width="16" height="14" shape-rendering="crispEdges"><rect x="2" y="1" width="5" height="1" fill="#000"/><rect x="1" y="2" width="1" height="1" fill="#000"/><rect x="2" y="2" width="5" height="1" fill="#ffff00"/><rect x="7" y="2" width="1" height="1" fill="#000"/><rect x="0" y="3" width="14" height="1" fill="#000"/><rect x="0" y="4" width="1" height="1" fill="#000"/><rect x="1" y="4" width="12" height="1" fill="#ffff00"/><rect x="13" y="4" width="1" height="1" fill="#000"/><rect x="0" y="5" width="1" height="1" fill="#000"/><rect x="1" y="5" width="4" height="1" fill="#ffff00"/><rect x="5" y="5" width="1" height="1" fill="#000"/><rect x="6" y="5" width="7" height="1" fill="#ffff00"/><rect x="13" y="5" width="1" height="1" fill="#000"/><rect x="0" y="6" width="1" height="1" fill="#000"/><rect x="1" y="6" width="3" height="1" fill="#ffff00"/><rect x="4" y="6" width="3" height="1" fill="#000"/><rect x="7" y="6" width="6" height="1" fill="#ffff00"/><rect x="13" y="6" width="1" height="1" fill="#000"/><rect x="0" y="7" width="1" height="1" fill="#000"/><rect x="1" y="7" width="2" height="1" fill="#ffff00"/><rect x="3" y="7" width="5" height="1" fill="#000"/><rect x="8" y="7" width="5" height="1" fill="#ffff00"/><rect x="13" y="7" width="1" height="1" fill="#000"/><rect x="0" y="8" width="1" height="1" fill="#000"/><rect x="1" y="8" width="4" height="1" fill="#ffff00"/><rect x="5" y="8" width="1" height="1" fill="#000"/><rect x="6" y="8" width="7" height="1" fill="#ffff00"/><rect x="13" y="8" width="1" height="1" fill="#000"/><rect x="0" y="9" width="1" height="1" fill="#000"/><rect x="1" y="9" width="4" height="1" fill="#ffff00"/><rect x="5" y="9" width="5" height="1" fill="#000"/><rect x="10" y="9" width="3" height="1" fill="#ffff00"/><rect x="13" y="9" width="1" height="1" fill="#000"/><rect x="0" y="10" width="1" height="1" fill="#000"/><rect x="1" y="10" width="12" height="1" fill="#ffff00"/><rect x="13" y="10" width="1" height="1" fill="#000"/><rect x="0" y="11" width="1" height="1" fill="#000"/><rect x="1" y="11" width="12" height="1" fill="#ffff00"/><rect x="13" y="11" width="1" height="1" fill="#000"/><rect x="0" y="12" width="14" height="1" fill="#000"/></svg>
<div class="a " style="left:437px;top:45px;width:23px;height:23px;background:#c0c0c0;border:1px solid;border-color:#ffffff #000000 #000000 #ffffff;box-shadow:inset 1px 1px #c0c0c0,inset -1px -1px #808080;"></div>
<svg class="a" style="left:441px;top:49px" width="16" height="14" shape-rendering="crispEdges"><rect x="1" y="2" width="14" height="1" fill="#000080"/><rect x="1" y="4" width="1" height="1" fill="#000080"/><rect x="3" y="4" width="3" height="1" fill="#000"/><rect x="7" y="4" width="3" height="1" fill="#000"/><rect x="11" y="4" width="3" height="1" fill="#000"/><rect x="1" y="6" width="1" height="1" fill="#000080"/><rect x="3" y="6" width="3" height="1" fill="#000"/><rect x="7" y="6" width="3" height="1" fill="#000"/><rect x="11" y="6" width="3" height="1" fill="#000"/><rect x="1" y="8" width="1" height="1" fill="#000080"/><rect x="3" y="8" width="3" height="1" fill="#000"/><rect x="7" y="8" width="3" height="1" fill="#000"/><rect x="11" y="8" width="3" height="1" fill="#000"/><rect x="1" y="10" width="1" height="1" fill="#000080"/><rect x="3" y="10" width="3" height="1" fill="#000"/><rect x="7" y="10" width="3" height="1" fill="#000"/><rect x="11" y="10" width="3" height="1" fill="#000"/><rect x="1" y="12" width="1" height="1" fill="#000080"/><rect x="3" y="12" width="3" height="1" fill="#000"/><rect x="7" y="12" width="3" height="1" fill="#000"/><rect x="11" y="12" width="3" height="1" fill="#000"/></svg>
<div class="a " style="left:461px;top:45px;width:23px;height:23px;background:#c0c0c0;border:1px solid;border-color:#ffffff #000000 #000000 #ffffff;box-shadow:inset 1px 1px #c0c0c0,inset -1px -1px #808080;"></div>
<svg class="a" style="left:465px;top:49px" width="16" height="13" shape-rendering="crispEdges"><rect x="2" y="1" width="4" height="1" fill="#000080"/><rect x="2" y="2" width="1" height="1" fill="#000080"/><rect x="3" y="2" width="2" height="1" fill="#fff"/><rect x="5" y="2" width="2" height="1" fill="#000080"/><rect x="2" y="3" width="1" height="1" fill="#000080"/><rect x="3" y="3" width="3" height="1" fill="#fff"/><rect x="6" y="3" width="1" height="1" fill="#000080"/><rect x="2" y="4" width="5" height="1" fill="#000080"/><rect x="1" y="6" width="6" height="1" fill="#000"/><rect x="9" y="6" width="4" height="1" fill="#000080"/><rect x="9" y="7" width="1" height="1" fill="#000080"/><rect x="10" y="7" width="2" height="1" fill="#fff"/><rect x="12" y="7" width="2" height="1" fill="#000080"/><rect x="9" y="8" width="1" height="1" fill="#000080"/><rect x="10" y="8" width="3" height="1" fill="#fff"/><rect x="13" y="8" width="1" height="1" fill="#000080"/><rect x="9" y="9" width="5" height="1" fill="#000080"/><rect x="8" y="11" width="6" height="1" fill="#000"/></svg>
<div class="a " style="left:485px;top:45px;width:23px;height:23px;background:#c0c0c0;border:1px solid;border-color:#ffffff #000000 #000000 #ffffff;box-shadow:inset 1px 1px #c0c0c0,inset -1px -1px #808080;"></div>
<svg class="a" style="left:489px;top:49px" width="16" height="14" shape-rendering="crispEdges"><rect x="1" y="2" width="3" height="1" fill="#000080"/><rect x="8" y="2" width="3" height="1" fill="#000080"/><rect x="1" y="3" width="1" height="1" fill="#000080"/><rect x="2" y="3" width="1" height="1" fill="#fff"/><rect x="3" y="3" width="1" height="1" fill="#000080"/><rect x="4" y="3" width="3" height="1" fill="#000"/><rect x="8" y="3" width="1" height="1" fill="#000080"/><rect x="9" y="3" width="1" height="1" fill="#fff"/><rect x="10" y="3" width="1" height="1" fill="#000080"/><rect x="11" y="3" width="3" height="1" fill="#000"/><rect x="1" y="4" width="3" height="1" fill="#000080"/><rect x="8" y="4" width="3" height="1" fill="#000080"/><rect x="1" y="6" width="3" height="1" fill="#000080"/><rect x="8" y="6" width="3" height="1" fill="#000080"/><rect x="1" y="7" width="1" height="1" fill="#000080"/><rect x="2" y="7" width="1" height="1" fill="#fff"/><rect x="3" y="7" width="1" height="1" fill="#000080"/><rect x="4" y="7" width="3" height="1" fill="#000"/><rect x="8" y="7" width="1" height="1" fill="#000080"/><rect x="9" y="7" width="1" height="1" fill="#fff"/><rect x="10" y="7" width="1" height="1" fill="#000080"/><rect x="11" y="7" width="3" height="1" fill="#000"/><rect x="1" y="8" width="3" height="1" fill="#000080"/><rect x="8" y="8" width="3" height="1" fill="#000080"/><rect x="1" y="10" width="3" height="1" fill="#000080"/><rect x="8" y="10" width="3" height="1" fill="#000080"/><rect x="1" y="11" width="1" height="1" fill="#000080"/><rect x="2" y="11" width="1" height="1" fill="#fff"/><rect x="3" y="11" width="1" height="1" fill="#000080"/><rect x="4" y="11" width="3" height="1" fill="#000"/><rect x="8" y="11" width="1" height="1" fill="#000080"/><rect x="9" y="11" width="1" height="1" fill="#fff"/><rect x="10" y="11" width="1" height="1" fill="#000080"/><rect x="11" y="11" width="3" height="1" fill="#000"/><rect x="1" y="12" width="3" height="1" fill="#000080"/><rect x="8" y="12" width="3" height="1" fill="#000080"/></svg>
<div class="a " style="left:509px;top:45px;width:23px;height:23px;background:#c0c0c0;border:1px solid;border-color:#ffffff #000000 #000000 #ffffff;box-shadow:inset 1px 1px #c0c0c0,inset -1px -1px #808080;"></div>
<svg class="a" style="left:513px;top:49px" width="16" height="14" shape-rendering="crispEdges"><rect x="2" y="2" width="3" height="1" fill="#000080"/><rect x="2" y="3" width="1" height="1" fill="#000080"/><rect x="3" y="3" width="1" height="1" fill="#fff"/><rect x="4" y="3" width="1" height="1" fill="#000080"/><rect x="5" y="3" width="3" height="1" fill="#000"/><rect x="2" y="4" width="3" height="1" fill="#000080"/><rect x="9" y="6" width="3" height="1" fill="#000080"/><rect x="9" y="7" width="1" height="1" fill="#000080"/><rect x="10" y="7" width="1" height="1" fill="#fff"/><rect x="11" y="7" width="1" height="1" fill="#000080"/><rect x="12" y="7" width="3" height="1" fill="#000"/><rect x="9" y="8" width="3" height="1" fill="#000080"/><rect x="4" y="10" width="3" height="1" fill="#000080"/><rect x="4" y="11" width="1" height="1" fill="#000080"/><rect x="5" y="11" width="1" height="1" fill="#fff"/><rect x="6" y="11" width="1" height="1" fill="#000080"/><rect x="7" y="11" width="3" height="1" fill="#000"/><rect x="4" y="12" width="3" height="1" fill="#000080"/></svg>
<div class="a " style="left:4px;top:69px;width:756px;height:513px;background:#808080;border:1px solid;border-color:#808080 #ffffff #ffffff #808080;box-shadow:inset 1px 1px #000000,inset -1px -1px #c0c0c0;"></div>
<div class="a " style="left:6px;top:71px;width:685px;height:353px;background:#c0c0c0;border:1px solid;border-color:#c0c0c0 #000000 #000000 #c0c0c0;box-shadow:inset 1px 1px #ffffff,inset -1px -1px #808080;"></div>
<div class="a " style="left:10px;top:75px;width:677px;height:18px;background:#808080;"></div>
<span class="t" style="left:31px;top:79.14px;font-size:12px;line-height:13.79px;font-weight:bold;-webkit-text-stroke:0.35px;color:#c0c0c0;transform:scaleX(0.9670)">Project Browser</span>
<svg class="a" style="left:13px;top:78px" width="12" height="11" shape-rendering="crispEdges"><rect x="0" y="0" width="12" height="11" fill="#fff"/><rect x="2" y="0" width="8" height="1" fill="#00ffff"/><rect x="2" y="1" width="1" height="1" fill="#00ffff"/><rect x="9" y="1" width="1" height="1" fill="#00ffff"/><rect x="10" y="1" width="1" height="1" fill="#808080"/><rect x="2" y="2" width="1" height="1" fill="#00ffff"/><rect x="10" y="2" width="1" height="1" fill="#808080"/><rect x="2" y="3" width="1" height="1" fill="#00ffff"/><rect x="10" y="3" width="1" height="1" fill="#808080"/><rect x="0" y="4" width="4" height="1" fill="#000"/><rect x="4" y="4" width="1" height="1" fill="#00ffff"/><rect x="10" y="4" width="1" height="1" fill="#808080"/><rect x="0" y="5" width="1" height="1" fill="#000"/><rect x="3" y="5" width="5" height="1" fill="#000"/><rect x="10" y="5" width="1" height="1" fill="#808080"/><rect x="0" y="6" width="1" height="1" fill="#000"/><rect x="7" y="6" width="1" height="1" fill="#000"/><rect x="10" y="6" width="1" height="1" fill="#808080"/><rect x="0" y="7" width="1" height="1" fill="#000"/><rect x="7" y="7" width="1" height="1" fill="#000"/><rect x="10" y="7" width="1" height="1" fill="#808080"/><rect x="0" y="8" width="1" height="1" fill="#000"/><rect x="7" y="8" width="1" height="1" fill="#000"/><rect x="10" y="8" width="1" height="1" fill="#808080"/><rect x="0" y="9" width="1" height="1" fill="#000"/><rect x="7" y="9" width="1" height="1" fill="#000"/><rect x="8" y="9" width="2" height="1" fill="#808080"/><rect x="0" y="10" width="8" height="1" fill="#000"/></svg>
<div class="a " style="left:634px;top:77px;width:16px;height:14px;background:#c0c0c0;border:1px solid;border-color:#ffffff #000000 #000000 #ffffff;box-shadow:inset 1px 1px #c0c0c0,inset -1px -1px #808080;"></div>
<div class="a " style="left:638px;top:86px;width:6px;height:2px;background:#000000;"></div>
<div class="a " style="left:650px;top:77px;width:16px;height:14px;background:#c0c0c0;border:1px solid;border-color:#ffffff #000000 #000000 #ffffff;box-shadow:inset 1px 1px #c0c0c0,inset -1px -1px #808080;"></div>
<div class="a " style="left:653px;top:79px;width:9px;height:9px;border:1px solid #000;border-top:2px solid #000;box-sizing:border-box;"></div>
<div class="a " style="left:668px;top:77px;width:16px;height:14px;background:#c0c0c0;border:1px solid;border-color:#ffffff #000000 #000000 #ffffff;box-shadow:inset 1px 1px #c0c0c0,inset -1px -1px #808080;"></div>
<svg class="a" style="left:668px;top:77px" width="16" height="14"><path d="M4.5 3.5 L11.5 10.5 M11.5 3.5 L4.5 10.5" stroke="#000" stroke-width="1.7" fill="none"/></svg>
<div class="a " style="left:14px;top:95px;width:300px;height:319px;background:#c0c0c0;border:1px solid #000;border-radius:0 0 0 6px;"></div>
<div class="a " style="left:15px;top:96px;width:3px;height:316px;background:#ffffff;"></div>
<div class="a " style="left:23px;top:112px;width:200px;height:270px;background:#ffffff;border:1px solid #000;"></div>
<div class="a " style="left:28px;top:94px;width:690px;height:462px;background:#c0c0c0;border:1px solid;border-color:#c0c0c0 #000000 #000000 #c0c0c0;box-shadow:inset 1px 1px #ffffff,inset -1px -1px #808080;"></div>
<div class="a " style="left:32px;top:98px;width:682px;height:18px;background:#000080;"></div>
<span class="t" style="left:52.8px;top:101.14px;font-size:12px;line-height:13.79px;font-weight:bold;-webkit-text-stroke:0.35px;color:#ffffff;transform:scaleX(0.9952)">MapViewer - USA</span>
<svg class="a" style="left:33px;top:99px" width="16" height="15" shape-rendering="crispEdges"><rect x="5" y="0" width="6" height="1" fill="#0000ff"/><rect x="3" y="1" width="3" height="1" fill="#0000ff"/><rect x="6" y="1" width="2" height="1" fill="#00ff00"/><rect x="8" y="1" width="4" height="1" fill="#0000ff"/><rect x="2" y="2" width="2" height="1" fill="#0000ff"/><rect x="4" y="2" width="4" height="1" fill="#00ff00"/><rect x="8" y="2" width="1" height="1" fill="#0000ff"/><rect x="9" y="2" width="1" height="1" fill="#00ff00"/><rect x="10" y="2" width="3" height="1" fill="#0000ff"/><rect x="1" y="3" width="2" height="1" fill="#0000ff"/><rect x="3" y="3" width="5" height="1" fill="#00ff00"/><rect x="8" y="3" width="2" height="1" fill="#0000ff"/><rect x="10" y="3" width="2" height="1" fill="#00ff00"/><rect x="12" y="3" width="2" height="1" fill="#0000ff"/><rect x="1" y="4" width="2" height="1" fill="#0000ff"/><rect x="3" y="4" width="4" height="1" fill="#00ff00"/><rect x="7" y="4" width="3" height="1" fill="#0000ff"/><rect x="10" y="4" width="2" height="1" fill="#00ff00"/><rect x="12" y="4" width="2" height="1" fill="#0000ff"/><rect x="0" y="5" width="4" height="1" fill="#0000ff"/><rect x="4" y="5" width="2" height="1" fill="#00ff00"/><rect x="6" y="5" width="5" height="1" fill="#0000ff"/><rect x="11" y="5" width="1" height="1" fill="#00ff00"/><rect x="12" y="5" width="3" height="1" fill="#0000ff"/><rect x="0" y="6" width="8" height="1" fill="#0000ff"/><rect x="8" y="6" width="1" height="1" fill="#00ff00"/><rect x="9" y="6" width="6" height="1" fill="#0000ff"/><rect x="0" y="7" width="7" height="1" fill="#0000ff"/><rect x="7" y="7" width="3" height="1" fill="#00ff00"/><rect x="10" y="7" width="5" height="1" fill="#0000ff"/><rect x="0" y="8" width="1" height="1" fill="#000080"/><rect x="1" y="8" width="6" height="1" fill="#0000ff"/><rect x="7" y="8" width="4" height="1" fill="#00ff00"/><rect x="11" y="8" width="4" height="1" fill="#0000ff"/><rect x="0" y="9" width="1" height="1" fill="#000080"/><rect x="1" y="9" width="6" height="1" fill="#0000ff"/><rect x="7" y="9" width="3" height="1" fill="#00ff00"/><rect x="10" y="9" width="5" height="1" fill="#0000ff"/><rect x="1" y="10" width="1" height="1" fill="#000080"/><rect x="2" y="10" width="6" height="1" fill="#0000ff"/><rect x="8" y="10" width="2" height="1" fill="#00ff00"/><rect x="10" y="10" width="4" height="1" fill="#0000ff"/><rect x="1" y="11" width="2" height="1" fill="#000080"/><rect x="3" y="11" width="5" height="1" fill="#0000ff"/><rect x="8" y="11" width="1" height="1" fill="#00ff00"/><rect x="9" y="11" width="5" height="1" fill="#0000ff"/><rect x="2" y="12" width="2" height="1" fill="#000080"/><rect x="4" y="12" width="9" height="1" fill="#0000ff"/><rect x="3" y="13" width="3" height="1" fill="#000080"/><rect x="6" y="13" width="6" height="1" fill="#0000ff"/><rect x="5" y="14" width="6" height="1" fill="#000080"/></svg>
<div class="a " style="left:662px;top:100px;width:16px;height:14px;background:#c0c0c0;border:1px solid;border-color:#ffffff #000000 #000000 #ffffff;box-shadow:inset 1px 1px #c0c0c0,inset -1px -1px #808080;"></div>
<div class="a " style="left:666px;top:109px;width:6px;height:2px;background:#000000;"></div>
<div class="a " style="left:678px;top:100px;width:16px;height:14px;background:#c0c0c0;border:1px solid;border-color:#ffffff #000000 #000000 #ffffff;box-shadow:inset 1px 1px #c0c0c0,inset -1px -1px #808080;"></div>
<div class="a " style="left:681px;top:102px;width:9px;height:9px;border:1px solid #000;border-top:2px solid #000;box-sizing:border-box;"></div>
<div class="a " style="left:696px;top:100px;width:16px;height:14px;background:#c0c0c0;border:1px solid;border-color:#ffffff #000000 #000000 #ffffff;box-shadow:inset 1px 1px #c0c0c0,inset -1px -1px #808080;"></div>
<svg class="a" style="left:696px;top:100px" width="16" height="14"><path d="M4.5 3.5 L11.5 10.5 M11.5 3.5 L4.5 10.5" stroke="#000" stroke-width="1.7" fill="none"/></svg>
<div class="a " style="left:36px;top:120px;width:23px;height:22px;background:#c0c0c0;border:1px solid;border-color:#ffffff #000000 #000000 #ffffff;box-shadow:inset 1px 1px #c0c0c0,inset -1px -1px #808080;"></div>
<svg class="a" style="left:39px;top:121px" width="18" height="18" viewBox="0 0 16 16" preserveAspectRatio="none" shape-rendering="crispEdges"><rect x="0" y="0" width="16" height="16" fill="#008080"/><rect x="3" y="2" width="8" height="1" fill="#000"/><rect x="3" y="3" width="1" height="1" fill="#000"/><rect x="4" y="3" width="6" height="1" fill="#fff"/><rect x="10" y="3" width="2" height="1" fill="#000"/><rect x="3" y="4" width="1" height="1" fill="#000"/><rect x="4" y="4" width="6" height="1" fill="#fff"/><rect x="10" y="4" width="1" height="1" fill="#000"/><rect x="11" y="4" width="1" height="1" fill="#fff"/><rect x="12" y="4" width="1" height="1" fill="#000"/><rect x="3" y="5" width="1" height="1" fill="#000"/><rect x="4" y="5" width="6" height="1" fill="#fff"/><rect x="10" y="5" width="4" height="1" fill="#000"/><rect x="3" y="6" width="1" height="1" fill="#000"/><rect x="4" y="6" width="9" height="1" fill="#fff"/><rect x="13" y="6" width="1" height="1" fill="#000"/><rect x="3" y="7" width="1" height="1" fill="#000"/><rect x="4" y="7" width="9" height="1" fill="#fff"/><rect x="13" y="7" width="1" height="1" fill="#000"/><rect x="3" y="8" width="1" height="1" fill="#000"/><rect x="4" y="8" width="9" height="1" fill="#fff"/><rect x="13" y="8" width="1" height="1" fill="#000"/><rect x="3" y="9" width="1" height="1" fill="#000"/><rect x="4" y="9" width="9" height="1" fill="#fff"/><rect x="13" y="9" width="1" height="1" fill="#000"/><rect x="3" y="10" width="1" height="1" fill="#000"/><rect x="4" y="10" width="9" height="1" fill="#fff"/><rect x="13" y="10" width="1" height="1" fill="#000"/><rect x="3" y="11" width="1" height="1" fill="#000"/><rect x="4" y="11" width="9" height="1" fill="#fff"/><rect x="13" y="11" width="1" height="1" fill="#000"/><rect x="3" y="12" width="1" height="1" fill="#000"/><rect x="4" y="12" width="9" height="1" fill="#fff"/><rect x="13" y="12" width="1" height="1" fill="#000"/><rect x="3" y="13" width="11" height="1" fill="#000"/></svg>
<div class="a " style="left:60px;top:120px;width:23px;height:22px;background:#c0c0c0;border:1px solid;border-color:#ffffff #000000 #000000 #ffffff;box-shadow:inset 1px 1px #c0c0c0,inset -1px -1px #808080;"></div>
<svg class="a" style="left:63px;top:121px" width="18" height="18" viewBox="0 0 16 16" preserveAspectRatio="none" shape-rendering="crispEdges"><rect x="4" y="2" width="5" height="1" fill="#808080"/><rect x="3" y="3" width="1" height="1" fill="#808080"/><rect x="4" y="3" width="5" height="1" fill="#ffff00"/><rect x="9" y="3" width="1" height="1" fill="#808080"/><rect x="2" y="4" width="1" height="1" fill="#808080"/><rect x="3" y="4" width="7" height="1" fill="#ffff00"/><rect x="10" y="4" width="4" height="1" fill="#808080"/><rect x="1" y="5" width="1" height="1" fill="#808080"/><rect x="2" y="5" width="1" height="1" fill="#ffff00"/><rect x="3" y="5" width="1" height="1" fill="#ffff80"/><rect x="4" y="5" width="1" height="1" fill="#ffff00"/><rect x="5" y="5" width="1" height="1" fill="#ffff80"/><rect x="6" y="5" width="1" height="1" fill="#ffff00"/><rect x="7" y="5" width="1" height="1" fill="#ffff80"/><rect x="8" y="5" width="1" height="1" fill="#ffff00"/><rect x="9" y="5" width="1" height="1" fill="#ffff80"/><rect x="10" y="5" width="1" height="1" fill="#ffff00"/><rect x="11" y="5" width="1" height="1" fill="#ffff80"/><rect x="12" y="5" width="1" height="1" fill="#ffff00"/><rect x="13" y="5" width="1" height="1" fill="#808080"/><rect x="1" y="6" width="1" height="1" fill="#808080"/><rect x="2" y="6" width="1" height="1" fill="#ffff80"/><rect x="3" y="6" width="1" height="1" fill="#ffff00"/><rect x="4" y="6" width="11" height="1" fill="#808080"/><rect x="1" y="7" width="1" height="1" fill="#808080"/><rect x="2" y="7" width="1" height="1" fill="#ffff00"/><rect x="3" y="7" width="1" height="1" fill="#808080"/><rect x="4" y="7" width="10" height="1" fill="#ffff00"/><rect x="14" y="7" width="1" height="1" fill="#808080"/><rect x="1" y="8" width="1" height="1" fill="#808080"/><rect x="2" y="8" width="1" height="1" fill="#ffff80"/><rect x="3" y="8" width="1" height="1" fill="#808080"/><rect x="4" y="8" width="1" height="1" fill="#ffff80"/><rect x="5" y="8" width="1" height="1" fill="#ffff00"/><rect x="6" y="8" width="1" height="1" fill="#ffff80"/><rect x="7" y="8" width="1" height="1" fill="#ffff00"/><rect x="8" y="8" width="1" height="1" fill="#ffff80"/><rect x="9" y="8" width="1" height="1" fill="#ffff00"/><rect x="10" y="8" width="1" height="1" fill="#ffff80"/><rect x="11" y="8" width="1" height="1" fill="#ffff00"/><rect x="12" y="8" width="1" height="1" fill="#ffff80"/><rect x="13" y="8" width="1" height="1" fill="#808080"/><rect x="14" y="8" width="1" height="1" fill="#000"/><rect x="1" y="9" width="2" height="1" fill="#808080"/><rect x="3" y="9" width="10" height="1" fill="#ffff00"/><rect x="13" y="9" width="1" height="1" fill="#808080"/><rect x="14" y="9" width="1" height="1" fill="#000"/><rect x="1" y="10" width="1" height="1" fill="#808080"/><rect x="2" y="10" width="1" height="1" fill="#ffff00"/><rect x="3" y="10" width="1" height="1" fill="#ffff80"/><rect x="4" y="10" width="1" height="1" fill="#ffff00"/><rect x="5" y="10" width="1" height="1" fill="#ffff80"/><rect x="6" y="10" width="1" height="1" fill="#ffff00"/><rect x="7" y="10" width="1" height="1" fill="#ffff80"/><rect x="8" y="10" width="1" height="1" fill="#ffff00"/><rect x="9" y="10" width="1" height="1" fill="#ffff80"/><rect x="10" y="10" width="1" height="1" fill="#ffff00"/><rect x="11" y="10" width="1" height="1" fill="#ffff80"/><rect x="12" y="10" width="1" height="1" fill="#808080"/><rect x="13" y="10" width="1" height="1" fill="#000"/><rect x="1" y="11" width="1" height="1" fill="#808080"/><rect x="2" y="11" width="10" height="1" fill="#ffff00"/><rect x="12" y="11" width="1" height="1" fill="#808080"/><rect x="13" y="11" width="1" height="1" fill="#000"/><rect x="1" y="12" width="12" height="1" fill="#808080"/><rect x="13" y="12" width="1" height="1" fill="#000"/><rect x="3" y="13" width="10" height="1" fill="#000"/></svg>
<div class="a " style="left:84px;top:120px;width:23px;height:22px;background:#c0c0c0;border:1px solid;border-color:#ffffff #000000 #000000 #ffffff;box-shadow:inset 1px 1px #c0c0c0,inset -1px -1px #808080;"></div>
<svg class="a" style="left:87px;top:121px" width="18" height="18" viewBox="0 0 16 16" preserveAspectRatio="none" shape-rendering="crispEdges"><rect x="0" y="0" width="16" height="1" fill="#008080"/><rect x="0" y="1" width="1" height="1" fill="#008080"/><rect x="1" y="1" width="14" height="1" fill="#000"/><rect x="15" y="1" width="1" height="1" fill="#008080"/><rect x="0" y="2" width="1" height="1" fill="#008080"/><rect x="1" y="2" width="1" height="1" fill="#000"/><rect x="2" y="2" width="1" height="1" fill="#808000"/><rect x="3" y="2" width="1" height="1" fill="#000"/><rect x="4" y="2" width="8" height="1" fill="#c0c0c0"/><rect x="12" y="2" width="1" height="1" fill="#000"/><rect x="13" y="2" width="1" height="1" fill="#808000"/><rect x="14" y="2" width="1" height="1" fill="#000"/><rect x="15" y="2" width="1" height="1" fill="#008080"/><rect x="0" y="3" width="1" height="1" fill="#008080"/><rect x="1" y="3" width="1" height="1" fill="#000"/><rect x="2" y="3" width="1" height="1" fill="#808000"/><rect x="3" y="3" width="1" height="1" fill="#000"/><rect x="4" y="3" width="8" height="1" fill="#c0c0c0"/><rect x="12" y="3" width="3" height="1" fill="#000"/><rect x="15" y="3" width="1" height="1" fill="#008080"/><rect x="0" y="4" width="1" height="1" fill="#008080"/><rect x="1" y="4" width="1" height="1" fill="#000"/><rect x="2" y="4" width="1" height="1" fill="#808000"/><rect x="3" y="4" width="1" height="1" fill="#000"/><rect x="4" y="4" width="8" height="1" fill="#c0c0c0"/><rect x="12" y="4" width="1" height="1" fill="#000"/><rect x="13" y="4" width="1" height="1" fill="#808000"/><rect x="14" y="4" width="1" height="1" fill="#000"/><rect x="15" y="4" width="1" height="1" fill="#008080"/><rect x="0" y="5" width="1" height="1" fill="#008080"/><rect x="1" y="5" width="1" height="1" fill="#000"/><rect x="2" y="5" width="1" height="1" fill="#808000"/><rect x="3" y="5" width="1" height="1" fill="#000"/><rect x="4" y="5" width="8" height="1" fill="#c0c0c0"/><rect x="12" y="5" width="1" height="1" fill="#000"/><rect x="13" y="5" width="1" height="1" fill="#808000"/><rect x="14" y="5" width="1" height="1" fill="#000"/><rect x="15" y="5" width="1" height="1" fill="#008080"/><rect x="0" y="6" width="1" height="1" fill="#008080"/><rect x="1" y="6" width="1" height="1" fill="#000"/><rect x="2" y="6" width="1" height="1" fill="#808000"/><rect x="3" y="6" width="1" height="1" fill="#000"/><rect x="4" y="6" width="8" height="1" fill="#c0c0c0"/><rect x="12" y="6" width="1" height="1" fill="#000"/><rect x="13" y="6" width="1" height="1" fill="#808000"/><rect x="14" y="6" width="1" height="1" fill="#000"/><rect x="15" y="6" width="1" height="1" fill="#008080"/><rect x="0" y="7" width="1" height="1" fill="#008080"/><rect x="1" y="7" width="1" height="1" fill="#000"/><rect x="2" y="7" width="2" height="1" fill="#808000"/><rect x="4" y="7" width="8" height="1" fill="#000"/><rect x="12" y="7" width="2" height="1" fill="#808000"/><rect x="14" y="7" width="1" height="1" fill="#000"/><rect x="15" y="7" width="1" height="1" fill="#008080"/><rect x="0" y="8" width="1" height="1" fill="#008080"/><rect x="1" y="8" width="1" height="1" fill="#000"/><rect x="2" y="8" width="12" height="1" fill="#808000"/><rect x="14" y="8" width="1" height="1" fill="#000"/><rect x="15" y="8" width="1" height="1" fill="#008080"/><rect x="0" y="9" width="1" height="1" fill="#008080"/><rect x="1" y="9" width="1" height="1" fill="#000"/><rect x="2" y="9" width="2" height="1" fill="#808000"/><rect x="4" y="9" width="9" height="1" fill="#000"/><rect x="13" y="9" width="1" height="1" fill="#808000"/><rect x="14" y="9" width="1" height="1" fill="#000"/><rect x="15" y="9" width="1" height="1" fill="#008080"/><rect x="0" y="10" width="1" height="1" fill="#008080"/><rect x="1" y="10" width="1" height="1" fill="#000"/><rect x="2" y="10" width="2" height="1" fill="#808000"/><rect x="4" y="10" width="6" height="1" fill="#000"/><rect x="10" y="10" width="2" height="1" fill="#c0c0c0"/><rect x="12" y="10" width="1" height="1" fill="#000"/><rect x="13" y="10" width="1" height="1" fill="#808000"/><rect x="14" y="10" width="1" height="1" fill="#000"/><rect x="15" y="10" width="1" height="1" fill="#008080"/><rect x="0" y="11" width="1" height="1" fill="#008080"/><rect x="1" y="11" width="1" height="1" fill="#000"/><rect x="2" y="11" width="2" height="1" fill="#808000"/><rect x="4" y="11" width="6" height="1" fill="#000"/><rect x="10" y="11" width="2" height="1" fill="#c0c0c0"/><rect x="12" y="11" width="1" height="1" fill="#000"/><rect x="13" y="11" width="1" height="1" fill="#808000"/><rect x="14" y="11" width="1" height="1" fill="#000"/><rect x="15" y="11" width="1" height="1" fill="#008080"/><rect x="0" y="12" width="1" height="1" fill="#008080"/><rect x="1" y="12" width="1" height="1" fill="#000"/><rect x="2" y="12" width="2" height="1" fill="#808000"/><rect x="4" y="12" width="6" height="1" fill="#000"/><rect x="10" y="12" width="2" height="1" fill="#c0c0c0"/><rect x="12" y="12" width="1" height="1" fill="#000"/><rect x="13" y="12" width="1" height="1" fill="#808000"/><rect x="14" y="12" width="1" height="1" fill="#000"/><rect x="15" y="12" width="1" height="1" fill="#008080"/><rect x="0" y="13" width="2" height="1" fill="#008080"/><rect x="2" y="13" width="13" height="1" fill="#000"/><rect x="15" y="13" width="1" height="1" fill="#008080"/><rect x="0" y="14" width="16" height="1" fill="#008080"/><rect x="0" y="15" width="16" height="1" fill="#008080"/></svg>
<div class="a " style="left:108px;top:120px;width:23px;height:22px;background:#c0c0c0;border:1px solid;border-color:#ffffff #000000 #000000 #ffffff;box-shadow:inset 1px 1px #c0c0c0,inset -1px -1px #808080;"></div>
<svg class="a" style="left:111px;top:121px" width="18" height="18" viewBox="0 0 16 16" preserveAspectRatio="none" shape-rendering="crispEdges"><rect x="0" y="0" width="1" height="1" fill="#008080"/><rect x="1" y="0" width="2" height="1" fill="#0000ff"/><rect x="3" y="0" width="13" height="1" fill="#008080"/><rect x="0" y="1" width="1" height="1" fill="#008080"/><rect x="1" y="1" width="1" height="1" fill="#000"/><rect x="2" y="1" width="3" height="1" fill="#0000ff"/><rect x="5" y="1" width="10" height="1" fill="#000"/><rect x="15" y="1" width="1" height="1" fill="#008080"/><rect x="0" y="2" width="1" height="1" fill="#008080"/><rect x="1" y="2" width="1" height="1" fill="#000"/><rect x="2" y="2" width="1" height="1" fill="#808000"/><rect x="3" y="2" width="3" height="1" fill="#0000ff"/><rect x="6" y="2" width="6" height="1" fill="#c0c0c0"/><rect x="12" y="2" width="1" height="1" fill="#000"/><rect x="13" y="2" width="1" height="1" fill="#808000"/><rect x="14" y="2" width="1" height="1" fill="#000"/><rect x="15" y="2" width="1" height="1" fill="#008080"/><rect x="0" y="3" width="1" height="1" fill="#008080"/><rect x="1" y="3" width="1" height="1" fill="#000"/><rect x="2" y="3" width="1" height="1" fill="#808000"/><rect x="3" y="3" width="1" height="1" fill="#000"/><rect x="4" y="3" width="3" height="1" fill="#0000ff"/><rect x="7" y="3" width="5" height="1" fill="#c0c0c0"/><rect x="12" y="3" width="3" height="1" fill="#000"/><rect x="15" y="3" width="1" height="1" fill="#008080"/><rect x="0" y="4" width="1" height="1" fill="#008080"/><rect x="1" y="4" width="1" height="1" fill="#000"/><rect x="2" y="4" width="1" height="1" fill="#808000"/><rect x="3" y="4" width="1" height="1" fill="#000"/><rect x="4" y="4" width="1" height="1" fill="#c0c0c0"/><rect x="5" y="4" width="3" height="1" fill="#0000ff"/><rect x="8" y="4" width="2" height="1" fill="#c0c0c0"/><rect x="10" y="4" width="1" height="1" fill="#0000ff"/><rect x="11" y="4" width="1" height="1" fill="#c0c0c0"/><rect x="12" y="4" width="1" height="1" fill="#000"/><rect x="13" y="4" width="1" height="1" fill="#808000"/><rect x="14" y="4" width="1" height="1" fill="#000"/><rect x="15" y="4" width="1" height="1" fill="#008080"/><rect x="0" y="5" width="1" height="1" fill="#008080"/><rect x="1" y="5" width="1" height="1" fill="#000"/><rect x="2" y="5" width="1" height="1" fill="#808000"/><rect x="3" y="5" width="1" height="1" fill="#000"/><rect x="4" y="5" width="2" height="1" fill="#c0c0c0"/><rect x="6" y="5" width="5" height="1" fill="#0000ff"/><rect x="11" y="5" width="1" height="1" fill="#c0c0c0"/><rect x="12" y="5" width="1" height="1" fill="#000"/><rect x="13" y="5" width="1" height="1" fill="#808000"/><rect x="14" y="5" width="1" height="1" fill="#000"/><rect x="15" y="5" width="1" height="1" fill="#008080"/><rect x="0" y="6" width="1" height="1" fill="#008080"/><rect x="1" y="6" width="1" height="1" fill="#000"/><rect x="2" y="6" width="1" height="1" fill="#808000"/><rect x="3" y="6" width="1" height="1" fill="#000"/><rect x="4" y="6" width="3" height="1" fill="#c0c0c0"/><rect x="7" y="6" width="4" height="1" fill="#0000ff"/><rect x="11" y="6" width="1" height="1" fill="#c0c0c0"/><rect x="12" y="6" width="1" height="1" fill="#000"/><rect x="13" y="6" width="1" height="1" fill="#808000"/><rect x="14" y="6" width="1" height="1" fill="#000"/><rect x="15" y="6" width="1" height="1" fill="#008080"/><rect x="0" y="7" width="1" height="1" fill="#008080"/><rect x="1" y="7" width="1" height="1" fill="#000"/><rect x="2" y="7" width="2" height="1" fill="#808000"/><rect x="4" y="7" width="2" height="1" fill="#000"/><rect x="6" y="7" width="5" height="1" fill="#0000ff"/><rect x="11" y="7" width="1" height="1" fill="#000"/><rect x="12" y="7" width="2" height="1" fill="#808000"/><rect x="14" y="7" width="1" height="1" fill="#000"/><rect x="15" y="7" width="1" height="1" fill="#008080"/><rect x="0" y="8" width="1" height="1" fill="#008080"/><rect x="1" y="8" width="1" height="1" fill="#000"/><rect x="2" y="8" width="12" height="1" fill="#808000"/><rect x="14" y="8" width="1" height="1" fill="#000"/><rect x="15" y="8" width="1" height="1" fill="#008080"/><rect x="0" y="9" width="1" height="1" fill="#008080"/><rect x="1" y="9" width="1" height="1" fill="#000"/><rect x="2" y="9" width="2" height="1" fill="#808000"/><rect x="4" y="9" width="9" height="1" fill="#000"/><rect x="13" y="9" width="1" height="1" fill="#808000"/><rect x="14" y="9" width="1" height="1" fill="#000"/><rect x="15" y="9" width="1" height="1" fill="#008080"/><rect x="0" y="10" width="1" height="1" fill="#008080"/><rect x="1" y="10" width="1" height="1" fill="#000"/><rect x="2" y="10" width="2" height="1" fill="#808000"/><rect x="4" y="10" width="6" height="1" fill="#000"/><rect x="10" y="10" width="2" height="1" fill="#c0c0c0"/><rect x="12" y="10" width="1" height="1" fill="#000"/><rect x="13" y="10" width="1" height="1" fill="#808000"/><rect x="14" y="10" width="1" height="1" fill="#000"/><rect x="15" y="10" width="1" height="1" fill="#008080"/><rect x="0" y="11" width="1" height="1" fill="#008080"/><rect x="1" y="11" width="1" height="1" fill="#000"/><rect x="2" y="11" width="2" height="1" fill="#808000"/><rect x="4" y="11" width="6" height="1" fill="#000"/><rect x="10" y="11" width="2" height="1" fill="#c0c0c0"/><rect x="12" y="11" width="1" height="1" fill="#000"/><rect x="13" y="11" width="1" height="1" fill="#808000"/><rect x="14" y="11" width="1" height="1" fill="#000"/><rect x="15" y="11" width="1" height="1" fill="#008080"/><rect x="0" y="12" width="1" height="1" fill="#008080"/><rect x="1" y="12" width="1" height="1" fill="#000"/><rect x="2" y="12" width="2" height="1" fill="#808000"/><rect x="4" y="12" width="6" height="1" fill="#000"/><rect x="10" y="12" width="2" height="1" fill="#c0c0c0"/><rect x="12" y="12" width="1" height="1" fill="#000"/><rect x="13" y="12" width="1" height="1" fill="#808000"/><rect x="14" y="12" width="1" height="1" fill="#000"/><rect x="15" y="12" width="1" height="1" fill="#008080"/><rect x="0" y="13" width="2" height="1" fill="#008080"/><rect x="2" y="13" width="13" height="1" fill="#000"/><rect x="15" y="13" width="1" height="1" fill="#008080"/><rect x="0" y="14" width="16" height="1" fill="#008080"/><rect x="0" y="15" width="16" height="1" fill="#008080"/></svg>
<div class="a " style="left:141px;top:120px;width:23px;height:22px;background:#c0c0c0;border:1px solid;border-color:#ffffff #000000 #000000 #ffffff;box-shadow:inset 1px 1px #c0c0c0,inset -1px -1px #808080;"></div>
<svg class="a" style="left:144px;top:121px" width="18" height="18" viewBox="0 0 16 16" preserveAspectRatio="none" shape-rendering="crispEdges"><rect x="0" y="0" width="16" height="16" fill="#008080"/><rect x="2" y="2" width="4" height="1" fill="#000"/><rect x="8" y="2" width="6" height="1" fill="#00ffff"/><rect x="1" y="3" width="1" height="1" fill="#000"/><rect x="2" y="3" width="4" height="1" fill="#ff0000"/><rect x="6" y="3" width="1" height="1" fill="#000"/><rect x="8" y="3" width="6" height="1" fill="#00ffff"/><rect x="1" y="4" width="1" height="1" fill="#000"/><rect x="2" y="4" width="5" height="1" fill="#ff0000"/><rect x="7" y="4" width="1" height="1" fill="#000"/><rect x="8" y="4" width="6" height="1" fill="#00ffff"/><rect x="1" y="5" width="1" height="1" fill="#000"/><rect x="2" y="5" width="5" height="1" fill="#ff0000"/><rect x="7" y="5" width="1" height="1" fill="#000"/><rect x="8" y="5" width="6" height="1" fill="#00ffff"/><rect x="1" y="6" width="1" height="1" fill="#000"/><rect x="2" y="6" width="4" height="1" fill="#ff0000"/><rect x="6" y="6" width="5" height="1" fill="#000"/><rect x="11" y="6" width="2" height="1" fill="#00ffff"/><rect x="2" y="7" width="4" height="1" fill="#000"/><rect x="6" y="7" width="5" height="1" fill="#ffff00"/><rect x="11" y="7" width="2" height="1" fill="#000"/><rect x="5" y="8" width="1" height="1" fill="#000"/><rect x="6" y="8" width="6" height="1" fill="#ffff00"/><rect x="12" y="8" width="1" height="1" fill="#000"/><rect x="14" y="8" width="1" height="1" fill="#000"/><rect x="5" y="9" width="1" height="1" fill="#000"/><rect x="6" y="9" width="6" height="1" fill="#ffff00"/><rect x="12" y="9" width="3" height="1" fill="#000"/><rect x="5" y="10" width="1" height="1" fill="#000"/><rect x="6" y="10" width="5" height="1" fill="#ffff00"/><rect x="11" y="10" width="4" height="1" fill="#000"/><rect x="6" y="11" width="5" height="1" fill="#000"/><rect x="13" y="11" width="2" height="1" fill="#000"/></svg>
<div class="a " style="left:165px;top:120px;width:23px;height:22px;background:#c0c0c0;border:1px solid;border-color:#ffffff #000000 #000000 #ffffff;box-shadow:inset 1px 1px #c0c0c0,inset -1px -1px #808080;"></div>
<svg class="a" style="left:168px;top:121px" width="18" height="18" viewBox="0 0 16 16" preserveAspectRatio="none" shape-rendering="crispEdges"><rect x="0" y="0" width="16" height="16" fill="#008080"/><rect x="2" y="2" width="2" height="1" fill="#000"/><rect x="13" y="2" width="1" height="1" fill="#000"/><rect x="3" y="3" width="2" height="1" fill="#000"/><rect x="11" y="3" width="2" height="1" fill="#000"/><rect x="4" y="4" width="3" height="1" fill="#000"/><rect x="10" y="4" width="2" height="1" fill="#000"/><rect x="5" y="5" width="6" height="1" fill="#000"/><rect x="6" y="6" width="4" height="1" fill="#000"/><rect x="6" y="7" width="4" height="1" fill="#000"/><rect x="5" y="8" width="6" height="1" fill="#000"/><rect x="4" y="9" width="3" height="1" fill="#000"/><rect x="9" y="9" width="3" height="1" fill="#000"/><rect x="3" y="10" width="3" height="1" fill="#000"/><rect x="10" y="10" width="3" height="1" fill="#000"/><rect x="2" y="11" width="3" height="1" fill="#000"/><rect x="11" y="11" width="3" height="1" fill="#000"/><rect x="2" y="12" width="2" height="1" fill="#000"/><rect x="13" y="12" width="1" height="1" fill="#000"/></svg>
<div class="a " style="left:197px;top:120px;width:23px;height:22px;background:#ffffff;border:1px solid;border-color:#000000 #ffffff #ffffff #000000;box-shadow:inset 1px 1px #808080,inset -1px -1px #c0c0c0;"></div>
<svg class="a" style="left:200px;top:121px" width="18" height="18" viewBox="0 0 16 16" preserveAspectRatio="none" shape-rendering="crispEdges"><rect x="0" y="0" width="16" height="16" fill="#fff"/><rect x="12" y="1" width="2" height="1" fill="#000"/><rect x="11" y="2" width="1" height="1" fill="#000"/><rect x="12" y="2" width="2" height="1" fill="#000080"/><rect x="14" y="2" width="1" height="1" fill="#000"/><rect x="10" y="3" width="1" height="1" fill="#000"/><rect x="11" y="3" width="3" height="1" fill="#000080"/><rect x="14" y="3" width="1" height="1" fill="#000"/><rect x="9" y="4" width="1" height="1" fill="#000"/><rect x="10" y="4" width="3" height="1" fill="#000080"/><rect x="13" y="4" width="1" height="1" fill="#000"/><rect x="8" y="5" width="1" height="1" fill="#000"/><rect x="9" y="5" width="3" height="1" fill="#000080"/><rect x="12" y="5" width="1" height="1" fill="#000"/><rect x="6" y="6" width="3" height="1" fill="#000"/><rect x="9" y="6" width="2" height="1" fill="#000080"/><rect x="11" y="6" width="1" height="1" fill="#000"/><rect x="5" y="7" width="1" height="1" fill="#000"/><rect x="6" y="7" width="2" height="1" fill="#ffff00"/><rect x="8" y="7" width="3" height="1" fill="#000"/><rect x="4" y="8" width="1" height="1" fill="#000"/><rect x="5" y="8" width="4" height="1" fill="#ffff00"/><rect x="9" y="8" width="1" height="1" fill="#000"/><rect x="3" y="9" width="1" height="1" fill="#000"/><rect x="4" y="9" width="6" height="1" fill="#ffff00"/><rect x="10" y="9" width="1" height="1" fill="#000"/><rect x="2" y="10" width="1" height="1" fill="#000"/><rect x="3" y="10" width="2" height="1" fill="#ffff00"/><rect x="5" y="10" width="1" height="1" fill="#000"/><rect x="6" y="10" width="3" height="1" fill="#ffff00"/><rect x="9" y="10" width="1" height="1" fill="#000"/><rect x="2" y="11" width="1" height="1" fill="#000"/><rect x="3" y="11" width="1" height="1" fill="#ffff00"/><rect x="4" y="11" width="2" height="1" fill="#000"/><rect x="6" y="11" width="2" height="1" fill="#ffff00"/><rect x="8" y="11" width="1" height="1" fill="#000"/><rect x="2" y="12" width="4" height="1" fill="#000"/><rect x="6" y="12" width="1" height="1" fill="#ffff00"/><rect x="7" y="12" width="1" height="1" fill="#000"/><rect x="4" y="13" width="3" height="1" fill="#000"/></svg>
<div class="a " style="left:221px;top:120px;width:23px;height:22px;background:#c0c0c0;border:1px solid;border-color:#ffffff #000000 #000000 #ffffff;box-shadow:inset 1px 1px #c0c0c0,inset -1px -1px #808080;"></div>
<svg class="a" style="left:224px;top:121px" width="18" height="18" viewBox="0 0 16 16" preserveAspectRatio="none" shape-rendering="crispEdges"><rect x="5" y="1" width="6" height="1" fill="#000080"/><rect x="13" y="1" width="1" height="1" fill="#000"/><rect x="4" y="2" width="1" height="1" fill="#000080"/><rect x="5" y="2" width="2" height="1" fill="#0000ff"/><rect x="7" y="2" width="2" height="1" fill="#00ff00"/><rect x="9" y="2" width="2" height="1" fill="#0000ff"/><rect x="11" y="2" width="1" height="1" fill="#000080"/><rect x="14" y="2" width="1" height="1" fill="#000"/><rect x="3" y="3" width="1" height="1" fill="#000080"/><rect x="4" y="3" width="2" height="1" fill="#0000ff"/><rect x="6" y="3" width="4" height="1" fill="#00ff00"/><rect x="10" y="3" width="2" height="1" fill="#0000ff"/><rect x="12" y="3" width="1" height="1" fill="#000080"/><rect x="14" y="3" width="1" height="1" fill="#000"/><rect x="2" y="4" width="1" height="1" fill="#000080"/><rect x="3" y="4" width="3" height="1" fill="#0000ff"/><rect x="6" y="4" width="3" height="1" fill="#00ff00"/><rect x="9" y="4" width="4" height="1" fill="#0000ff"/><rect x="13" y="4" width="1" height="1" fill="#000080"/><rect x="14" y="4" width="1" height="1" fill="#000"/><rect x="2" y="5" width="1" height="1" fill="#000080"/><rect x="3" y="5" width="4" height="1" fill="#0000ff"/><rect x="7" y="5" width="2" height="1" fill="#00ff00"/><rect x="9" y="5" width="2" height="1" fill="#0000ff"/><rect x="11" y="5" width="1" height="1" fill="#00ff00"/><rect x="12" y="5" width="1" height="1" fill="#0000ff"/><rect x="13" y="5" width="1" height="1" fill="#000080"/><rect x="14" y="5" width="1" height="1" fill="#000"/><rect x="2" y="6" width="1" height="1" fill="#000080"/><rect x="3" y="6" width="1" height="1" fill="#0000ff"/><rect x="4" y="6" width="1" height="1" fill="#00ff00"/><rect x="5" y="6" width="5" height="1" fill="#0000ff"/><rect x="10" y="6" width="2" height="1" fill="#00ff00"/><rect x="12" y="6" width="1" height="1" fill="#0000ff"/><rect x="13" y="6" width="1" height="1" fill="#000080"/><rect x="14" y="6" width="1" height="1" fill="#000"/><rect x="2" y="7" width="1" height="1" fill="#000080"/><rect x="3" y="7" width="1" height="1" fill="#0000ff"/><rect x="4" y="7" width="2" height="1" fill="#00ff00"/><rect x="6" y="7" width="5" height="1" fill="#0000ff"/><rect x="11" y="7" width="1" height="1" fill="#00ff00"/><rect x="12" y="7" width="1" height="1" fill="#0000ff"/><rect x="13" y="7" width="1" height="1" fill="#000080"/><rect x="14" y="7" width="1" height="1" fill="#000"/><rect x="2" y="8" width="1" height="1" fill="#000080"/><rect x="3" y="8" width="2" height="1" fill="#0000ff"/><rect x="5" y="8" width="1" height="1" fill="#00ff00"/><rect x="6" y="8" width="7" height="1" fill="#0000ff"/><rect x="13" y="8" width="1" height="1" fill="#000080"/><rect x="14" y="8" width="1" height="1" fill="#000"/><rect x="3" y="9" width="1" height="1" fill="#000080"/><rect x="4" y="9" width="8" height="1" fill="#0000ff"/><rect x="12" y="9" width="1" height="1" fill="#000080"/><rect x="14" y="9" width="1" height="1" fill="#000"/><rect x="4" y="10" width="1" height="1" fill="#000080"/><rect x="5" y="10" width="6" height="1" fill="#0000ff"/><rect x="11" y="10" width="1" height="1" fill="#000080"/><rect x="13" y="10" width="1" height="1" fill="#000"/><rect x="5" y="11" width="6" height="1" fill="#000080"/><rect x="12" y="11" width="1" height="1" fill="#000"/><rect x="6" y="12" width="1" height="1" fill="#000"/><rect x="7" y="12" width="2" height="1" fill="#ffff00"/><rect x="9" y="12" width="1" height="1" fill="#000"/><rect x="11" y="12" width="1" height="1" fill="#000"/><rect x="4" y="13" width="2" height="1" fill="#000"/><rect x="6" y="13" width="4" height="1" fill="#ffff00"/><rect x="10" y="13" width="2" height="1" fill="#000"/><rect x="4" y="14" width="8" height="1" fill="#000"/></svg>
<div class="a " style="left:245px;top:120px;width:23px;height:22px;background:#c0c0c0;border:1px solid;border-color:#ffffff #000000 #000000 #ffffff;box-shadow:inset 1px 1px #c0c0c0,inset -1px -1px #808080;"></div>
<svg class="a" style="left:248px;top:121px" width="18" height="18" viewBox="0 0 16 16" preserveAspectRatio="none" shape-rendering="crispEdges"><rect x="0" y="0" width="16" height="16" fill="#008080"/><rect x="4" y="1" width="5" height="1" fill="#000"/><rect x="2" y="2" width="2" height="1" fill="#000"/><rect x="4" y="2" width="5" height="1" fill="#c0c0c0"/><rect x="9" y="2" width="2" height="1" fill="#000"/><rect x="1" y="3" width="1" height="1" fill="#000"/><rect x="2" y="3" width="2" height="1" fill="#c0c0c0"/><rect x="4" y="3" width="3" height="1" fill="#000"/><rect x="7" y="3" width="4" height="1" fill="#c0c0c0"/><rect x="11" y="3" width="1" height="1" fill="#000"/><rect x="1" y="4" width="1" height="1" fill="#000"/><rect x="2" y="4" width="2" height="1" fill="#c0c0c0"/><rect x="4" y="4" width="2" height="1" fill="#000"/><rect x="6" y="4" width="5" height="1" fill="#c0c0c0"/><rect x="11" y="4" width="1" height="1" fill="#000"/><rect x="0" y="5" width="1" height="1" fill="#000"/><rect x="1" y="5" width="3" height="1" fill="#c0c0c0"/><rect x="4" y="5" width="1" height="1" fill="#000"/><rect x="5" y="5" width="1" height="1" fill="#c0c0c0"/><rect x="6" y="5" width="1" height="1" fill="#000"/><rect x="7" y="5" width="5" height="1" fill="#c0c0c0"/><rect x="12" y="5" width="1" height="1" fill="#000"/><rect x="0" y="6" width="1" height="1" fill="#000"/><rect x="1" y="6" width="6" height="1" fill="#c0c0c0"/><rect x="7" y="6" width="1" height="1" fill="#000"/><rect x="8" y="6" width="4" height="1" fill="#c0c0c0"/><rect x="12" y="6" width="1" height="1" fill="#000"/><rect x="0" y="7" width="1" height="1" fill="#000"/><rect x="1" y="7" width="7" height="1" fill="#c0c0c0"/><rect x="8" y="7" width="1" height="1" fill="#000"/><rect x="9" y="7" width="3" height="1" fill="#c0c0c0"/><rect x="12" y="7" width="1" height="1" fill="#000"/><rect x="1" y="8" width="1" height="1" fill="#000"/><rect x="2" y="8" width="9" height="1" fill="#c0c0c0"/><rect x="11" y="8" width="1" height="1" fill="#000"/><rect x="1" y="9" width="1" height="1" fill="#000"/><rect x="2" y="9" width="9" height="1" fill="#c0c0c0"/><rect x="11" y="9" width="1" height="1" fill="#000"/><rect x="2" y="10" width="2" height="1" fill="#000"/><rect x="4" y="10" width="5" height="1" fill="#c0c0c0"/><rect x="9" y="10" width="2" height="1" fill="#000"/><rect x="11" y="10" width="1" height="1" fill="#000080"/><rect x="4" y="11" width="5" height="1" fill="#000"/><rect x="10" y="11" width="3" height="1" fill="#000080"/><rect x="10" y="12" width="4" height="1" fill="#000080"/><rect x="11" y="13" width="4" height="1" fill="#000080"/><rect x="12" y="14" width="3" height="1" fill="#000080"/></svg>
<div class="a " style="left:269px;top:120px;width:23px;height:22px;background:#c0c0c0;border:1px solid;border-color:#ffffff #000000 #000000 #ffffff;box-shadow:inset 1px 1px #c0c0c0,inset -1px -1px #808080;"></div>
<svg class="a" style="left:272px;top:121px" width="18" height="18" viewBox="0 0 16 16" preserveAspectRatio="none" shape-rendering="crispEdges"><rect x="0" y="0" width="16" height="16" fill="#008080"/><rect x="4" y="1" width="5" height="1" fill="#000"/><rect x="2" y="2" width="2" height="1" fill="#000"/><rect x="4" y="2" width="5" height="1" fill="#c0c0c0"/><rect x="9" y="2" width="2" height="1" fill="#000"/><rect x="1" y="3" width="1" height="1" fill="#000"/><rect x="2" y="3" width="4" height="1" fill="#c0c0c0"/><rect x="6" y="3" width="1" height="1" fill="#000"/><rect x="7" y="3" width="4" height="1" fill="#c0c0c0"/><rect x="11" y="3" width="1" height="1" fill="#000"/><rect x="1" y="4" width="1" height="1" fill="#000"/><rect x="2" y="4" width="4" height="1" fill="#c0c0c0"/><rect x="6" y="4" width="1" height="1" fill="#000"/><rect x="7" y="4" width="4" height="1" fill="#c0c0c0"/><rect x="11" y="4" width="1" height="1" fill="#000"/><rect x="0" y="5" width="1" height="1" fill="#000"/><rect x="1" y="5" width="5" height="1" fill="#c0c0c0"/><rect x="6" y="5" width="1" height="1" fill="#000"/><rect x="7" y="5" width="5" height="1" fill="#c0c0c0"/><rect x="12" y="5" width="1" height="1" fill="#000"/><rect x="0" y="6" width="1" height="1" fill="#000"/><rect x="1" y="6" width="2" height="1" fill="#c0c0c0"/><rect x="3" y="6" width="7" height="1" fill="#000"/><rect x="10" y="6" width="2" height="1" fill="#c0c0c0"/><rect x="12" y="6" width="1" height="1" fill="#000"/><rect x="0" y="7" width="1" height="1" fill="#000"/><rect x="1" y="7" width="5" height="1" fill="#c0c0c0"/><rect x="6" y="7" width="1" height="1" fill="#000"/><rect x="7" y="7" width="5" height="1" fill="#c0c0c0"/><rect x="12" y="7" width="1" height="1" fill="#000"/><rect x="1" y="8" width="1" height="1" fill="#000"/><rect x="2" y="8" width="4" height="1" fill="#c0c0c0"/><rect x="6" y="8" width="1" height="1" fill="#000"/><rect x="7" y="8" width="4" height="1" fill="#c0c0c0"/><rect x="11" y="8" width="1" height="1" fill="#000"/><rect x="1" y="9" width="1" height="1" fill="#000"/><rect x="2" y="9" width="4" height="1" fill="#c0c0c0"/><rect x="6" y="9" width="1" height="1" fill="#000"/><rect x="7" y="9" width="4" height="1" fill="#c0c0c0"/><rect x="11" y="9" width="1" height="1" fill="#000"/><rect x="2" y="10" width="2" height="1" fill="#000"/><rect x="4" y="10" width="5" height="1" fill="#c0c0c0"/><rect x="9" y="10" width="2" height="1" fill="#000"/><rect x="11" y="10" width="1" height="1" fill="#000080"/><rect x="4" y="11" width="5" height="1" fill="#000"/><rect x="10" y="11" width="3" height="1" fill="#000080"/><rect x="10" y="12" width="4" height="1" fill="#000080"/><rect x="11" y="13" width="4" height="1" fill="#000080"/><rect x="12" y="14" width="3" height="1" fill="#000080"/></svg>
<div class="a " style="left:293px;top:120px;width:23px;height:22px;background:#c0c0c0;border:1px solid;border-color:#ffffff #000000 #000000 #ffffff;box-shadow:inset 1px 1px #c0c0c0,inset -1px -1px #808080;"></div>
<svg class="a" style="left:296px;top:121px" width="18" height="18" viewBox="0 0 16 16" preserveAspectRatio="none" shape-rendering="crispEdges"><rect x="0" y="0" width="16" height="16" fill="#008080"/><rect x="4" y="1" width="5" height="1" fill="#000"/><rect x="2" y="2" width="2" height="1" fill="#000"/><rect x="4" y="2" width="5" height="1" fill="#c0c0c0"/><rect x="9" y="2" width="2" height="1" fill="#000"/><rect x="1" y="3" width="1" height="1" fill="#000"/><rect x="2" y="3" width="9" height="1" fill="#c0c0c0"/><rect x="11" y="3" width="1" height="1" fill="#000"/><rect x="1" y="4" width="1" height="1" fill="#000"/><rect x="2" y="4" width="9" height="1" fill="#c0c0c0"/><rect x="11" y="4" width="1" height="1" fill="#000"/><rect x="0" y="5" width="1" height="1" fill="#000"/><rect x="1" y="5" width="11" height="1" fill="#c0c0c0"/><rect x="12" y="5" width="1" height="1" fill="#000"/><rect x="0" y="6" width="1" height="1" fill="#000"/><rect x="1" y="6" width="2" height="1" fill="#c0c0c0"/><rect x="3" y="6" width="7" height="1" fill="#000"/><rect x="10" y="6" width="2" height="1" fill="#c0c0c0"/><rect x="12" y="6" width="1" height="1" fill="#000"/><rect x="0" y="7" width="1" height="1" fill="#000"/><rect x="1" y="7" width="11" height="1" fill="#c0c0c0"/><rect x="12" y="7" width="1" height="1" fill="#000"/><rect x="1" y="8" width="1" height="1" fill="#000"/><rect x="2" y="8" width="9" height="1" fill="#c0c0c0"/><rect x="11" y="8" width="1" height="1" fill="#000"/><rect x="1" y="9" width="1" height="1" fill="#000"/><rect x="2" y="9" width="9" height="1" fill="#c0c0c0"/><rect x="11" y="9" width="1" height="1" fill="#000"/><rect x="2" y="10" width="2" height="1" fill="#000"/><rect x="4" y="10" width="5" height="1" fill="#c0c0c0"/><rect x="9" y="10" width="2" height="1" fill="#000"/><rect x="11" y="10" width="1" height="1" fill="#000080"/><rect x="4" y="11" width="5" height="1" fill="#000"/><rect x="10" y="11" width="3" height="1" fill="#000080"/><rect x="10" y="12" width="4" height="1" fill="#000080"/><rect x="11" y="13" width="4" height="1" fill="#000080"/><rect x="12" y="14" width="3" height="1" fill="#000080"/></svg>
<div class="a " style="left:317px;top:120px;width:23px;height:22px;background:#c0c0c0;border:1px solid;border-color:#ffffff #000000 #000000 #ffffff;box-shadow:inset 1px 1px #c0c0c0,inset -1px -1px #808080;"></div>
<svg class="a" style="left:320px;top:121px" width="18" height="18" viewBox="0 0 16 16" preserveAspectRatio="none" shape-rendering="crispEdges"><rect x="0" y="0" width="16" height="16" fill="#008080"/><rect x="7" y="1" width="2" height="1" fill="#000"/><rect x="4" y="2" width="3" height="1" fill="#000"/><rect x="7" y="2" width="2" height="1" fill="#fff"/><rect x="9" y="2" width="3" height="1" fill="#000"/><rect x="3" y="3" width="1" height="1" fill="#000"/><rect x="4" y="3" width="2" height="1" fill="#fff"/><rect x="6" y="3" width="1" height="1" fill="#000"/><rect x="7" y="3" width="2" height="1" fill="#fff"/><rect x="9" y="3" width="1" height="1" fill="#000"/><rect x="10" y="3" width="2" height="1" fill="#fff"/><rect x="12" y="3" width="1" height="1" fill="#000"/><rect x="3" y="4" width="1" height="1" fill="#000"/><rect x="4" y="4" width="2" height="1" fill="#fff"/><rect x="6" y="4" width="1" height="1" fill="#000"/><rect x="7" y="4" width="2" height="1" fill="#fff"/><rect x="9" y="4" width="1" height="1" fill="#000"/><rect x="10" y="4" width="2" height="1" fill="#fff"/><rect x="12" y="4" width="2" height="1" fill="#000"/><rect x="3" y="5" width="1" height="1" fill="#000"/><rect x="4" y="5" width="2" height="1" fill="#fff"/><rect x="6" y="5" width="1" height="1" fill="#000"/><rect x="7" y="5" width="2" height="1" fill="#fff"/><rect x="9" y="5" width="1" height="1" fill="#000"/><rect x="10" y="5" width="2" height="1" fill="#fff"/><rect x="12" y="5" width="1" height="1" fill="#000"/><rect x="13" y="5" width="1" height="1" fill="#fff"/><rect x="14" y="5" width="1" height="1" fill="#000"/><rect x="4" y="6" width="1" height="1" fill="#000"/><rect x="5" y="6" width="7" height="1" fill="#fff"/><rect x="12" y="6" width="1" height="1" fill="#000"/><rect x="13" y="6" width="1" height="1" fill="#fff"/><rect x="14" y="6" width="1" height="1" fill="#000"/><rect x="1" y="7" width="2" height="1" fill="#000"/><rect x="4" y="7" width="1" height="1" fill="#000"/><rect x="5" y="7" width="9" height="1" fill="#fff"/><rect x="14" y="7" width="1" height="1" fill="#000"/><rect x="0" y="8" width="1" height="1" fill="#000"/><rect x="1" y="8" width="2" height="1" fill="#fff"/><rect x="3" y="8" width="2" height="1" fill="#000"/><rect x="5" y="8" width="9" height="1" fill="#fff"/><rect x="14" y="8" width="1" height="1" fill="#000"/><rect x="0" y="9" width="1" height="1" fill="#000"/><rect x="1" y="9" width="3" height="1" fill="#fff"/><rect x="4" y="9" width="1" height="1" fill="#000"/><rect x="5" y="9" width="9" height="1" fill="#fff"/><rect x="14" y="9" width="1" height="1" fill="#000"/><rect x="1" y="10" width="1" height="1" fill="#000"/><rect x="2" y="10" width="11" height="1" fill="#fff"/><rect x="13" y="10" width="1" height="1" fill="#000"/><rect x="2" y="11" width="1" height="1" fill="#000"/><rect x="3" y="11" width="10" height="1" fill="#fff"/><rect x="13" y="11" width="1" height="1" fill="#000"/><rect x="3" y="12" width="1" height="1" fill="#000"/><rect x="4" y="12" width="8" height="1" fill="#fff"/><rect x="12" y="12" width="1" height="1" fill="#000"/><rect x="4" y="13" width="1" height="1" fill="#000"/><rect x="5" y="13" width="6" height="1" fill="#fff"/><rect x="11" y="13" width="2" height="1" fill="#000"/><rect x="4" y="14" width="1" height="1" fill="#000"/><rect x="5" y="14" width="6" height="1" fill="#fff"/><rect x="11" y="14" width="1" height="1" fill="#000"/></svg>
<div class="a " style="left:349px;top:120px;width:23px;height:22px;background:#c0c0c0;border:1px solid;border-color:#ffffff #000000 #000000 #ffffff;box-shadow:inset 1px 1px #c0c0c0,inset -1px -1px #808080;"></div>
<svg class="a" style="left:353px;top:123px" width="16" height="12" shape-rendering="crispEdges"><rect x="11" y="3" width="3" height="1" fill="#808080"/><rect x="9" y="4" width="2" height="1" fill="#808080"/><rect x="11" y="4" width="3" height="1" fill="#fff"/><rect x="7" y="5" width="2" height="1" fill="#808080"/><rect x="9" y="5" width="2" height="1" fill="#fff"/><rect x="5" y="6" width="2" height="1" fill="#808080"/><rect x="7" y="6" width="2" height="1" fill="#fff"/><rect x="3" y="7" width="2" height="1" fill="#808080"/><rect x="5" y="7" width="2" height="1" fill="#fff"/><rect x="2" y="8" width="1" height="1" fill="#808080"/><rect x="3" y="8" width="2" height="1" fill="#fff"/></svg>
<div class="a " style="left:373px;top:120px;width:23px;height:22px;background:#c0c0c0;border:1px solid;border-color:#ffffff #000000 #000000 #ffffff;box-shadow:inset 1px 1px #c0c0c0,inset -1px -1px #808080;"></div>
<svg class="a" style="left:377px;top:123px" width="16" height="12" shape-rendering="crispEdges"><rect x="2" y="3" width="3" height="1" fill="#808080"/><rect x="2" y="4" width="3" height="1" fill="#fff"/><rect x="5" y="4" width="2" height="1" fill="#808080"/><rect x="5" y="5" width="2" height="1" fill="#fff"/><rect x="7" y="5" width="2" height="1" fill="#808080"/><rect x="7" y="6" width="2" height="1" fill="#fff"/><rect x="9" y="6" width="2" height="1" fill="#808080"/><rect x="9" y="7" width="2" height="1" fill="#fff"/><rect x="11" y="7" width="2" height="1" fill="#808080"/><rect x="11" y="8" width="2" height="1" fill="#fff"/><rect x="13" y="8" width="1" height="1" fill="#808080"/></svg>
<span class="t" style="left:409px;top:122.14px;font-size:12px;line-height:13.79px;color:#000;transform:scaleX(0.8395)">Scale:</span>
<div class="a " style="left:448px;top:121px;width:97px;height:21px;background:#ffffff;border:1px solid;border-color:#808080 #ffffff #ffffff #808080;box-shadow:inset 1px 1px #000000,inset -1px -1px #c0c0c0;"></div>
<span class="t" style="left:451.5px;top:125.14px;font-size:12px;line-height:13.79px;color:#000;transform:scaleX(0.8825)">12.95</span>
<div class="a " style="left:36px;top:149px;width:197px;height:365px;background:#c0c0c0;"></div>
<div class="a " style="left:36px;top:149px;width:196px;height:1px;background:#808080;"></div>
<div class="a " style="left:36px;top:149px;width:1px;height:365px;background:#808080;"></div>
<div class="a " style="left:37px;top:150px;width:195px;height:1px;background:#000000;"></div>
<div class="a " style="left:37px;top:150px;width:1px;height:364px;background:#000000;"></div>
<div class="a " style="left:37px;top:513px;width:177px;height:1px;background:#000000;"></div>
<div class="a " style="left:232px;top:150px;width:2px;height:364px;background:#ececec;"></div>
<div class="a " style="left:42px;top:156px;width:172px;height:1px;background:#ffffff;"></div>
<div class="a " style="left:42px;top:156px;width:1px;height:341px;background:#ffffff;"></div>
<div class="a " style="left:46px;top:159px;width:1px;height:49px;background:#ffffff;"></div>
<div class="a " style="left:47px;top:159px;width:1px;height:49px;background:#808080;"></div>
<div class="a " style="left:57px;top:167px;width:13px;height:12px;background:#ffffff;"></div>
<div class="a " style="left:57px;top:167px;width:13px;height:1px;background:#808080;"></div>
<div class="a " style="left:57px;top:167px;width:1px;height:12px;background:#808080;"></div>
<div class="a " style="left:58px;top:168px;width:11px;height:1px;background:#000000;"></div>
<div class="a " style="left:58px;top:168px;width:1px;height:10px;background:#000000;"></div>
<div class="a " style="left:58px;top:178px;width:12px;height:1px;background:#c0c0c0;"></div>
<div class="a " style="left:69px;top:168px;width:1px;height:11px;background:#c0c0c0;"></div>
<svg class="a" style="left:57px;top:167px" width="13" height="12"><path d="M3.5 5.5 L5.5 8 L10 3.5" stroke="#000" stroke-width="2" fill="none"/></svg>
<span class="t" style="left:75.5px;top:170.14px;font-size:12px;line-height:13.79px;color:#000;transform:scaleX(0.8821)">DRAINAGE.SHP</span>
<div class="a " style="left:77px;top:187px;width:61px;height:19px;background:#c0c0c0;"></div>
<div class="a " style="left:77px;top:187px;width:60px;height:1px;background:#000000;"></div>
<div class="a " style="left:77px;top:188px;width:60px;height:1px;background:#000000;"></div>
<div class="a " style="left:77px;top:187px;width:1px;height:19px;background:#000000;"></div>
<div class="a " style="left:78px;top:187px;width:1px;height:19px;background:#000000;"></div>
<div class="a " style="left:77px;top:205px;width:61px;height:1px;background:#ffffff;"></div>
<div class="a " style="left:137px;top:187px;width:1px;height:19px;background:#ffffff;"></div>
<svg class="a" style="left:79px;top:189px" width="58" height="16"><path d="M0 15.5 L58 0.5" stroke="#0000c0" stroke-width="1.2" fill="none"/></svg>
<div class="a " style="left:44px;top:210px;width:170px;height:1px;background:#808080;"></div>
<div class="a " style="left:44px;top:211px;width:170px;height:1px;background:#ffffff;"></div>
<div class="a " style="left:46px;top:214px;width:1px;height:49px;background:#ffffff;"></div>
<div class="a " style="left:47px;top:214px;width:1px;height:49px;background:#808080;"></div>
<div class="a " style="left:57px;top:222px;width:13px;height:12px;background:#ffffff;"></div>
<div class="a " style="left:57px;top:222px;width:13px;height:1px;background:#808080;"></div>
<div class="a " style="left:57px;top:222px;width:1px;height:12px;background:#808080;"></div>
<div class="a " style="left:58px;top:223px;width:11px;height:1px;background:#000000;"></div>
<div class="a " style="left:58px;top:223px;width:1px;height:10px;background:#000000;"></div>
<div class="a " style="left:58px;top:233px;width:12px;height:1px;background:#c0c0c0;"></div>
<div class="a " style="left:69px;top:223px;width:1px;height:11px;background:#c0c0c0;"></div>
<svg class="a" style="left:57px;top:222px" width="13" height="12"><path d="M3.5 5.5 L5.5 8 L10 3.5" stroke="#000" stroke-width="2" fill="none"/></svg>
<span class="t" style="left:75.5px;top:225.14px;font-size:12px;line-height:13.79px;color:#000;transform:scaleX(0.8771)">LAKES.SHP</span>
<div class="a " style="left:77px;top:242px;width:61px;height:19px;background:#0000ff;"></div>
<div class="a " style="left:77px;top:242px;width:60px;height:1px;background:#000000;"></div>
<div class="a " style="left:77px;top:243px;width:60px;height:1px;background:#000000;"></div>
<div class="a " style="left:77px;top:242px;width:1px;height:19px;background:#000000;"></div>
<div class="a " style="left:78px;top:242px;width:1px;height:19px;background:#000000;"></div>
<div class="a " style="left:77px;top:260px;width:61px;height:1px;background:#ffffff;"></div>
<div class="a " style="left:137px;top:242px;width:1px;height:19px;background:#ffffff;"></div>
<div class="a " style="left:44px;top:265px;width:170px;height:1px;background:#808080;"></div>
<div class="a " style="left:44px;top:266px;width:170px;height:1px;background:#ffffff;"></div>
<div class="a " style="left:46px;top:269px;width:1px;height:49px;background:#ffffff;"></div>
<div class="a " style="left:47px;top:269px;width:1px;height:49px;background:#808080;"></div>
<div class="a " style="left:57px;top:277px;width:13px;height:12px;background:#ffffff;"></div>
<div class="a " style="left:57px;top:277px;width:13px;height:1px;background:#808080;"></div>
<div class="a " style="left:57px;top:277px;width:1px;height:12px;background:#808080;"></div>
<div class="a " style="left:58px;top:278px;width:11px;height:1px;background:#000000;"></div>
<div class="a " style="left:58px;top:278px;width:1px;height:10px;background:#000000;"></div>
<div class="a " style="left:58px;top:288px;width:12px;height:1px;background:#c0c0c0;"></div>
<div class="a " style="left:69px;top:278px;width:1px;height:11px;background:#c0c0c0;"></div>
<span class="t" style="left:75.5px;top:280.14px;font-size:12px;line-height:13.79px;color:#000;transform:scaleX(0.8772)">USA - states</span>
<div class="a " style="left:77px;top:297px;width:61px;height:19px;background:#c0c0c0;"></div>
<div class="a " style="left:77px;top:297px;width:60px;height:1px;background:#000000;"></div>
<div class="a " style="left:77px;top:298px;width:60px;height:1px;background:#000000;"></div>
<div class="a " style="left:77px;top:297px;width:1px;height:19px;background:#000000;"></div>
<div class="a " style="left:78px;top:297px;width:1px;height:19px;background:#000000;"></div>
<div class="a " style="left:77px;top:315px;width:61px;height:1px;background:#ffffff;"></div>
<div class="a " style="left:137px;top:297px;width:1px;height:19px;background:#ffffff;"></div>
<svg class="a" style="left:79px;top:299px" width="58" height="16"><path d="M0 15.5 L58 0.5" stroke="#000" stroke-width="1.2" fill="none"/></svg>
<div class="a " style="left:44px;top:320px;width:170px;height:1px;background:#808080;"></div>
<div class="a " style="left:44px;top:321px;width:170px;height:1px;background:#ffffff;"></div>
<div class="a " style="left:46px;top:324px;width:1px;height:49px;background:#ffffff;"></div>
<div class="a " style="left:47px;top:324px;width:1px;height:49px;background:#808080;"></div>
<div class="a " style="left:57px;top:332px;width:13px;height:12px;background:#ffffff;"></div>
<div class="a " style="left:57px;top:332px;width:13px;height:1px;background:#808080;"></div>
<div class="a " style="left:57px;top:332px;width:1px;height:12px;background:#808080;"></div>
<div class="a " style="left:58px;top:333px;width:11px;height:1px;background:#000000;"></div>
<div class="a " style="left:58px;top:333px;width:1px;height:10px;background:#000000;"></div>
<div class="a " style="left:58px;top:343px;width:12px;height:1px;background:#c0c0c0;"></div>
<div class="a " style="left:69px;top:333px;width:1px;height:11px;background:#c0c0c0;"></div>
<span class="t" style="left:75.5px;top:335.14px;font-size:12px;line-height:13.79px;color:#000;transform:scaleX(0.8884)">QUADS - al_24q</span>
<div class="a " style="left:77px;top:352px;width:61px;height:19px;background:#c0c0c0;"></div>
<div class="a " style="left:77px;top:352px;width:60px;height:1px;background:#000000;"></div>
<div class="a " style="left:77px;top:353px;width:60px;height:1px;background:#000000;"></div>
<div class="a " style="left:77px;top:352px;width:1px;height:19px;background:#000000;"></div>
<div class="a " style="left:78px;top:352px;width:1px;height:19px;background:#000000;"></div>
<div class="a " style="left:77px;top:370px;width:61px;height:1px;background:#ffffff;"></div>
<div class="a " style="left:137px;top:352px;width:1px;height:19px;background:#ffffff;"></div>
<svg class="a" style="left:79px;top:354px" width="58" height="16"><path d="M0 15.5 L58 0.5" stroke="#0000c0" stroke-width="1.2" fill="none"/></svg>
<div class="a " style="left:44px;top:375px;width:170px;height:1px;background:#808080;"></div>
<div class="a " style="left:44px;top:376px;width:170px;height:1px;background:#ffffff;"></div>
<div class="a " style="left:46px;top:379px;width:1px;height:49px;background:#ffffff;"></div>
<div class="a " style="left:47px;top:379px;width:1px;height:49px;background:#808080;"></div>
<div class="a " style="left:57px;top:387px;width:13px;height:12px;background:#ffffff;"></div>
<div class="a " style="left:57px;top:387px;width:13px;height:1px;background:#808080;"></div>
<div class="a " style="left:57px;top:387px;width:1px;height:12px;background:#808080;"></div>
<div class="a " style="left:58px;top:388px;width:11px;height:1px;background:#000000;"></div>
<div class="a " style="left:58px;top:388px;width:1px;height:10px;background:#000000;"></div>
<div class="a " style="left:58px;top:398px;width:12px;height:1px;background:#c0c0c0;"></div>
<div class="a " style="left:69px;top:388px;width:1px;height:11px;background:#c0c0c0;"></div>
<span class="t" style="left:75.5px;top:390.14px;font-size:12px;line-height:13.79px;color:#000;transform:scaleX(0.8801)">QUADS - Q_250K</span>
<div class="a " style="left:77px;top:407px;width:61px;height:19px;background:#00ff00;"></div>
<div class="a " style="left:77px;top:407px;width:60px;height:1px;background:#000000;"></div>
<div class="a " style="left:77px;top:408px;width:60px;height:1px;background:#000000;"></div>
<div class="a " style="left:77px;top:407px;width:1px;height:19px;background:#000000;"></div>
<div class="a " style="left:78px;top:407px;width:1px;height:19px;background:#000000;"></div>
<div class="a " style="left:77px;top:425px;width:61px;height:1px;background:#ffffff;"></div>
<div class="a " style="left:137px;top:407px;width:1px;height:19px;background:#ffffff;"></div>
<div class="a " style="left:44px;top:430px;width:170px;height:1px;background:#808080;"></div>
<div class="a " style="left:44px;top:431px;width:170px;height:1px;background:#ffffff;"></div>
<div class="a " style="left:46px;top:434px;width:1px;height:49px;background:#ffffff;"></div>
<div class="a " style="left:47px;top:434px;width:1px;height:49px;background:#808080;"></div>
<div class="a " style="left:57px;top:442px;width:13px;height:12px;background:#ffffff;"></div>
<div class="a " style="left:57px;top:442px;width:13px;height:1px;background:#808080;"></div>
<div class="a " style="left:57px;top:442px;width:1px;height:12px;background:#808080;"></div>
<div class="a " style="left:58px;top:443px;width:11px;height:1px;background:#000000;"></div>
<div class="a " style="left:58px;top:443px;width:1px;height:10px;background:#000000;"></div>
<div class="a " style="left:58px;top:453px;width:12px;height:1px;background:#c0c0c0;"></div>
<div class="a " style="left:69px;top:443px;width:1px;height:11px;background:#c0c0c0;"></div>
<span class="t" style="left:75.5px;top:445.14px;font-size:12px;line-height:13.79px;color:#000;transform:scaleX(0.8801)">QUADS - Q_100K</span>
<div class="a " style="left:77px;top:462px;width:61px;height:19px;background:#00ff00;"></div>
<div class="a " style="left:77px;top:462px;width:60px;height:1px;background:#000000;"></div>
<div class="a " style="left:77px;top:463px;width:60px;height:1px;background:#000000;"></div>
<div class="a " style="left:77px;top:462px;width:1px;height:19px;background:#000000;"></div>
<div class="a " style="left:78px;top:462px;width:1px;height:19px;background:#000000;"></div>
<div class="a " style="left:77px;top:480px;width:61px;height:1px;background:#ffffff;"></div>
<div class="a " style="left:137px;top:462px;width:1px;height:19px;background:#ffffff;"></div>
<div class="a " style="left:44px;top:485px;width:170px;height:1px;background:#808080;"></div>
<div class="a " style="left:44px;top:486px;width:170px;height:1px;background:#ffffff;"></div>
<div class="a " style="left:46px;top:489px;width:1px;height:6px;background:#ffffff;"></div>
<div class="a " style="left:47px;top:489px;width:1px;height:6px;background:#808080;"></div>
<div class="a " style="left:214px;top:151px;width:17px;height:346px;background:#ffffff;"></div>
<div class="a " style="left:214px;top:151px;width:17px;height:15px;background:#c0c0c0;border:1px solid;border-color:#ffffff #000000 #000000 #ffffff;box-shadow:inset 1px 1px #c0c0c0,inset -1px -1px #808080;"></div>
<svg class="a" style="left:0;top:0" width="764" height="605"><polygon points="219,160.5 226,160.5 222.5,156.5" fill="#000000"/></svg>
<div class="a " style="left:214px;top:166px;width:17px;height:43px;background:#c0c0c0;border:1px solid;border-color:#ffffff #000000 #000000 #ffffff;box-shadow:inset 1px 1px #c0c0c0,inset -1px -1px #808080;"></div>
<div class="a " style="left:214px;top:482px;width:17px;height:15px;background:#c0c0c0;border:1px solid;border-color:#ffffff #000000 #000000 #ffffff;box-shadow:inset 1px 1px #c0c0c0,inset -1px -1px #808080;"></div>
<svg class="a" style="left:0;top:0" width="764" height="605"><polygon points="219,487.5 226,487.5 222.5,491.5" fill="#000000"/></svg>
<div class="a " style="left:38px;top:497px;width:176px;height:16px;background:#ffffff;"></div>
<div class="a " style="left:38px;top:497px;width:16px;height:16px;background:#c0c0c0;border:1px solid;border-color:#ffffff #000000 #000000 #ffffff;box-shadow:inset 1px 1px #c0c0c0,inset -1px -1px #808080;"></div>
<svg class="a" style="left:0;top:0" width="764" height="605"><polygon points="47.5,501.5 47.5,508.5 43.5,505" fill="#000000"/></svg>
<div class="a " style="left:198px;top:497px;width:16px;height:16px;background:#c0c0c0;border:1px solid;border-color:#ffffff #000000 #000000 #ffffff;box-shadow:inset 1px 1px #c0c0c0,inset -1px -1px #808080;"></div>
<svg class="a" style="left:0;top:0" width="764" height="605"><polygon points="204.5,501.5 204.5,508.5 208.5,505" fill="#000000"/></svg>
<div class="a " style="left:54px;top:497px;width:116px;height:16px;background:#c0c0c0;border:1px solid;border-color:#ffffff #000000 #000000 #ffffff;box-shadow:inset 1px 1px #c0c0c0,inset -1px -1px #808080;"></div>
<div class="a " style="left:214px;top:497px;width:17px;height:16px;background:#c0c0c0;"></div>
<div class="a " style="left:238px;top:149px;width:472px;height:367px;background:#ffffff;border:1px solid #000;"></div>
<svg class="a" style="left:0;top:0" width="764" height="605"><path d="M272.3 265.9 273.2 269.4 276.8 276.5 277.1 281 277.9 286.5 277.1 293 275.7 301.5 273.6 305.5 276.1 311.6 276.8 318.7 274.6 322.7 278.9 329.4 279.6 333.7 284.6 338 288.2 341.6 288.9 345.9 292.5 350.2 296.8 356.6 301.5 360.5 301.7 364.8 311.1 367.3 316.8 368.8 317.5 370.5 321.1 371.6 325.8 377 326.7 379.3 343.9 377.9 343.2 379.5 369.9 387.8 390.4 387.8 390.4 384.6 402.4 384.6 404.8 387 413.3 392.7 416.9 399.9 426.6 404.7 429.8 399.5 439.1 399 444.1 403.8 447 409.5 452.7 415.2 455.5 423.1 462 425.6 469.5 426.3 467.7 418.8 469.1 413.1 474.8 408.8 482.7 405.2 487 401.6 493.1 399.5 504.2 400.9 511.3 402.4 517.7 403.8 524.9 404.5 527 404.5 524.9 400.9 523.5 396.3 528.5 394.5 534.9 395.6 540.6 394.8 547.8 394.5 552.1 396.6 554.2 399.6 561.4 397 566.4 399.5 572.1 404.5 572.8 411.6 573.5 415.9 577.1 422.4 579.9 426.7 584.2 432 589.2 431.7 591 427.4 591.7 420.2 587.8 408.4 584.9 402.4 582.1 394.5 582.1 389.5 584.9 383.1 592.1 378 597.8 373.8 602.1 369.8 606.8 369.5 612.1 364.5 616.8 364.1 624.1 359.8 622.8 354.4 621.1 348 618.6 347.3 618.6 343 617.8 338 617.1 331.6 620 330.1 619.3 334.4 620.7 340.2 621.1 346.2 625.7 340.2 627.5 336.9 627.1 334.4 624.3 330.1 628.2 333.4 634.3 327.6 635 322.6 635 320.8 636.4 321.6 643.6 320.5 650 318.2 645 318.7 637.9 318.7 642.9 316.9 650.4 316.4 653.6 315.5 655.7 315.1 659 314.8 664 313.9 664 311.9 662.2 311 663.2 313 660 313.1 659 311.6 657.2 309.4 659.3 306.9 657.9 305.1 659.3 303 662.2 299.8 665 299 670.7 296.5 676.5 295.1 682.9 293 685.4 291.4 684.7 290.1 681.8 288 679.3 285.1 679.5 275.3 675.8 273.2 670.4 273.7 669.1 272.5 663.6 277.9 661.5 283.7 657.5 288.3 653.6 288.3 652.9 290 630 290.1 625.7 291.2 618.6 295.8 619.3 300.5 610 302.6 598.9 302.5 600 305.5 593.8 309.6 588.5 311.7 579.9 315.1 572.8 315.1 567.4 313.6 569.9 309.8 574.2 307.3 574.6 304.4 573.5 299.4 571.4 296.7 568.5 297.6 564.2 299.8 564.2 298 567.8 295.1 568.5 291.5 567.8 288.7 562.8 285.8 558.1 284.5 556.3 285.5 552.1 290.1 547.8 292.2 546 296.5 545.6 299.4 547.4 304.4 547.8 308.7 544.9 312.3 540.6 314.1 538.5 314.1 537.4 311.6 536.3 307.3 535.6 303 537 298.7 538.5 294.4 542.4 288 538.5 291.2 534.9 293.3 537.8 289.4 541.3 285 547.1 283.5 552.8 282.4 558.1 283.3 564.2 282.9 562.8 281.2 561 279.4 556.3 277.6 548.5 278.3 539.2 279.4 534.9 276.5 531.7 275.8 536.3 272.6 530.6 274 525.6 276.9 517.7 278.9 514.2 276.2 505.6 277.6 511.3 274 518.5 270.4 523.8 268.6 515.2 267.9 510.6 268.1 506.3 266.1 499.5 264.2 493.4 264.9 487.7 263.5 486.1 259.4 483.8 258.8 483.8 261.5 468.9 261.5 420.1 261.5 334.3 261.5 286.4 261.5 287.5 264.4 289.3 267.9 288.3 270.5 286.4 267.6 283.9 267.8 278.2 267.4 272.3 265.9Z" fill="#d6ceb6" stroke="#000" stroke-width="1.2"/><path d="m277.5 280.5h3m-7-11h1m0 0h6m-5 4h2m0 0h3m0 7h2m0 0h1m0 0h4m0 0h2m0 0h4m0 0h1m0 0h4m0 0h2m0 0h3m0 0h2m0 0h5m0 0h2m0 0h3m-27-16h2m0 0h4m0 0h1m0 0h5m0 0h2m0 0h3m0 0h2m0 0h3m0 0h5m-35 5h3m0 0h4m1.5 0h4.5m0 0h1m0 0h4m0 0h2m0 0h4m0 0h1m0 0h4m0 0h1m0 0h5m-35 5h3m0 0h5m0 0h1m0 0h4m0 0h1m0 0h4m0 0h2m0 0h4m0 0h1m0 0h4m0 0h1m0 0h5m0 6h5m0 0h1m0 0h9m0 0h6m0 0h1m0 0h4m0 0h5m0 0h4m0 0h5m0 0h4m-44-17h4m0 0h3m0 0h6m0 0h1m0 0h5m0 0h3m0 0h3m0 0h3m0 0h6m0 0h6m0 0h4m-44 7h4m0 0h7m0 0h3m0 0h3m0 0h2m0 0h6m0 0h6m0 0h3m0 0h4m0 0h2m0 0h4m-44 4h4m0 0h2m0 0h5m0 0h4m0 0h2m0 0h4m0 0h4m0 0h1m0 0h5m0 0h4m0 0h3m0 0h6m0 6h1m0 0h5m0 0h2m0 0h6m0 0h3m0 0h6m0 0h3m0 0h4m0 0h2m0 0h6m0 0h6m-44-13h6m0 0h2m0 0h3m0 0h4m0 0h1m0 0h7m0 0h4m0 0h1m0 0h5m0 0h5m0 0h6m-44 5h6m0 0h2m0 0h8m0 0h1m0 0h6m0 0h3m0 0h2m0 0h4m0 0h6m0 0h6m0 8h1m0 0h3m0 0h1m0 0h3m0 0h4m0 0h1m0 0h5m0 0h5m0 0h4m-27-14h3m0 0h2m0 0h5m0 0h2m0 0h5m0 0h2m0 0h8m-27 6h5m0 0h1m0 0h6m0 0h1m0 0h6m0 0h2m0 0h6m-27 5h5m0 0h1m0 0h6m0 0h1m0 0h5m0 0h3m0 0h6m0 3h1m0 0h1m0 0h4m0 0h1m0 0h3m0 0h2m0 0h4m0 0h1m0 0h4m0 0h1m0 0h3m-25-16h3m0 0h2m0 0h3m0 0h2m0 0h4m0 0h1m0 0h4m0 0h1m0 0h5m-25 4h2m0 0h3m0 0h2m0 0h3m0 0h3m0 0h2m0 0h3m0 0h2m0 0h5m-25 4h2m0 0h2m0 0h3m0 0h2m0 0h4m0 0h1m0 0h4m0 0h2m0 0h5m-25 4h2m0 0h2m0 0h3m0 0h2m0 0h3m0 0h2m0 0h3m0 0h3m0 0h2m0 0h3m0 4h4m0 0h5m0 0h3m0 0h2m0 0h5m0 0h4m0 0h1m0 0h4m0 0h5m0 0h1m-5-21h1m-30 4h3m0 0h2m0 0h3m0 0h1m0 0h4m0 0h1m0 0h3m0 0h2m0 0h3m0 0h2m0 0h3m0 0h2m0 0h3m-32 5h3m0 0h2m0 0h3m0 0h2m0 0h3m0 0h1m0 0h3m0 0h2m0 0h3m0 0h1m0 0h4m0 0h1m0 0h6m-34 4h4m0 0h1m0 0h3m0 0h2m0 0h3m0 0h1m0 0h5m0 0h4m0 0h1m0 0h4m0 0h4m0 0h2m-34 4h4m0 0h4m0 0h1m0 0h4m0 0h1m0 0h5m0 0h4m0 0h1m0 0h4m0 0h4m0 0h2m0 4h3m0 0h5m0 0h1m0 0h4m0 0h3m0 0h2m0 0h2m0 0h3m0 0h2m-25-13h2m0 0h2m0 0h3m0 0h2m0 0h3m0 0h2m0 0h2m0 0h2m0 0h1m-19 4h2m0 0h2m0 0h4m0 0h1m0 0h4m0 0h1m0 0h3m0 0h1m0 0h4m0 0h3m-25 5h2m0 0h1m0 0h5m0 0h5m0 0h4m8 4h2m0 0h3m0 0h1m0 0h1m0 0h2m0 0h1m0 0h2m0 0h2m0 0h3m0 0h1m0 0h2m0 0h2m0 0h1m0 0h3m0 0h2m0 0h3m-31-11h1m0 0h1m0 0h3m0 0h1m6.5 7h1.5m0 0h1m0 0h2m0 0h1m0 0h1m12 4h1m0 0h1m0 0h2m0 0h2m0 0h1m0 0h2m0 0h1m0 0h2m0 0h2m0 0h2m101.5 0h1.5m0 0h2m0 0h2m0 0h2m0 0h3m0 0h2m0 0h3.5m-12.5-5h2m0 0h4m0 0h1m0 0h3m0 0h2.5m-403.5 34h2m0 0h4m0 0h1m0 0h5m0 0h5m0 0h5m0 0h1m-20.5-25h3.5m0 0h1m0 0h5m0 0h5m0 0h1m0 0h5m-20.5 5h3.5m0 0h5m0 0h1m0 0h5m0 0h6m-21.5 5h1.5m0 0h3m0 0h2m0 0h3m0 0h3m0 0h3m0 0h3m0 0h3m-22 5h1m0 0h1m0 0h5m0 0h5m0 0h1m0 0h5m0 0h1m0 0h3m-23 4h2m0 0h4m0 0h2m0 0h4m0 0h1m0 0h4m0 0h2m0 0h4m0 6h3m0 0h1m0 0h6m0 0h8m0 0h1m0 0h8m0 0h5m0 0h3m0 0h1m0 0h5m0 0h2m0 0h4m0 0h1m0 0h4m-52-23h5m0 0h1m0 0h8m0 0h1m0 0h7m0 0h3m0 0h7m0 0h3m0 0h4m0 0h4m0 0h5m0 0h4m-52 8h6m0 0h7m0 0h2m0 0h4m0 0h5m0 0h1m0 0h8m0 0h2m0 0h8m0 0h9m-52 7h3m0 0h3m0 0h4m0 0h3m0 0h3m0 0h3m0 0h5m0 0h2m0 0h5m0 0h2m0 0h4m0 0h4m0 0h2m0 0h6m0 0h3m-52 5h3m0 0h7m0 0h6m0 0h2m0 0h8m0 0h1m0 0h4m0 0h1m0 0h4m0 0h1m0 0h4m0 0h6m0 0h2m0 0h3m0 3h5m0 0h3m0 0h3m0 0h7m0 0h5m0 0h1m0 0h4m0 0h2m0 0h3m0 0h3m0 0h4m0 0h3m0 0h5m0 0h6m-54-22h5m0 0h5m0 0h6m0 0h1m0 0h6m0 0h4m0 0h5m0 0h2m0 0h5m0 0h3m0 0h5m0 0h7m-54 7h5m0 0h4m0 0h7m0 0h5m0 0h6m0 0h4m0 0h3m0 0h4m0 0h4m0 0h4m0 0h8m-54 7h5m0 0h3m0 0h1m0 0h9m0 0h3m0 0h3m0 0h4m0 0h3m0 0h5m0 0h2m0 0h5m0 0h3m0 0h8m0 8h2m0 0h1m0 0h1m0 0h5m0 0h4m0 0h1m0 0h4m0 0h1m0 0h4m0 0h1m0 0h4m0 0h2m0 0h3m0 0h3m-36-25h3m0 0h1m0 0h3m0 0h1m0 0h4m0 0h2m0 0h3m0 0h1m0 0h4m0 0h1m0 0h4m0 0h2m0 0h3m0 0h4m-36 4h3m0 0h1m0 0h4m0 0h5m0 0h1m0 0h4m0 0h5m0 0h5m0 0h1m0 0h4m0 0h3m-36 4h3m0 0h2m0 0h3m0 0h1m0 0h4m0 0h2m0 0h3m0 0h1m0 0h4m0 0h2m0 0h3m0 0h1m0 0h4m0 0h3m-36 4h3m0 0h2m0 0h3m0 0h1m0 0h4m0 0h2m0 0h3m0 0h1m0 0h3m0 0h3m0 0h2m0 0h2m0 0h3m0 0h4m-36 4h3m0 0h1m0 0h4m0 0h1m0 0h4m0 0h1m0 0h4m0 0h1m0 0h3m0 0h2m0 0h3m0 0h2m0 0h3m0 0h4m-36 4h3m0 0h1m0 0h5m0 0h4m0 0h1m0 0h4m0 0h1m0 0h4m0 0h1m0 0h4m0 0h1m0 0h4m0 0h3m0 5h1m0 0h3m0 0h2m0 0h2m0 0h2m0 0h2m0 0h2m0 0h3m0 0h1m0 0h4m0 0h1m0 0h3m0 0h1m-27-25h2m0 0h4m0 0h1m0 0h4m0 0h4m0 0h1m0 0h3m0 0h1m0 0h4m0 0h1m0 0h2m-27 3h2m0 0h4m0 0h1m0 0h3m0 0h1m0 0h3m0 0h2m0 0h3m0 0h1m0 0h3m0 0h2m0 0h2m-27 4h2m0 0h1m0 0h3m0 0h1m0 0h3m0 0h1m0 0h3m0 0h1m0 0h4m0 0h4m0 0h4m-27 4h3m0 0h4m0 0h4m0 0h1m0 0h3m0 0h1m0 0h3m0 0h2m0 0h2m0 0h4m-27 4h3m0 0h3m0 0h1m0 0h4m0 0h1m0 0h3m0 0h1m0 0h4m0 0h1m0 0h4m0 0h2m-27 4h1m0 0h2m0 0h3m0 0h4m0 0h1m0 0h4m0 0h3m0 0h2m0 0h3m0 0h2m0 0h2m-27 4h1m0 0h3m0 0h2m0 0h2m0 0h2m0 0h2m0 0h3m0 0h2m0 0h1m0 0h4m0 0h1m0 0h4m0 2h3m0 0h4m0 0h1m0 0h4m0 0h4m0 0h4m0 0h1m0 0h4m0 0h3m0 0h2m-30-25h2m0 0h1m0 0h4m0 0h4m0 0h1m0 0h4m0 0h4m0 0h1m0 0h4m0 0h5m-30 4h3m0 0h4m0 0h4m0 0h5m0 0h4m0 0h5m0 0h5m-30 4h3m0 0h4m0 0h4m0 0h1m0 0h4m0 0h1m0 0h3m0 0h2m0 0h3m0 0h1m0 0h4m-30 4h2m0 0h1m0 0h4m0 0h4m0 0h1m0 0h4m0 0h1m0 0h4m0 0h1m0 0h3m0 0h1m0 0h4m-30 4h2m0 0h4m0 0h1m0 0h4m0 0h5m0 0h4m0 0h1m0 0h3m0 0h1m0 0h5m-30 3h2m0 0h1m0 0h3m0 0h1m0 0h4m0 0h1m0 0h4m0 0h4m0 0h4m0 0h6m-30 4h3m0 0h4m0 0h5m0 0h4m0 0h4m0 0h4m0 0h1m0 0h5m0 2h1m0 0h2m0 0h1m0 0h3m0 0h3m0 0h1m0 0h2m0 0h1m0 0h3m0 0h1m0 0h2m0 0h1m0 0h3m-24-26h1m0 0h1m0 0h3m0 0h1m0 0h2m0 0h1m0 0h3m0 0h1m0 0h2m0 0h1m0 0h3m0 0h1m0 0h2m0 0h2m-24 3h2m0 0h3m0 0h1m0 0h3m0 0h3m0 0h1m0 0h3m0 0h3m0 0h1m0 0h2m0 0h2m-24 3h2m0 0h3m0 0h1m0 0h3m0 0h3m0 0h3m0 0h1m0 0h2m0 0h1m0 0h3m0 0h2m-24 3h1m0 0h1m0 0h3m0 0h1m0 0h2m0 0h1m0 0h2m0 0h1m0 0h2m0 0h1m0 0h3m0 0h3m0 0h1m0 0h2m-24 3h1m0 0h2m0 0h2m0 0h1m0 0h2m0 0h2m0 0h1m0 0h2m0 0h1m0 0h3m0 0h1m0 0h2m0 0h1m0 0h3m-24 3h3m0 0h3m0 0h3m0 0h1m0 0h2m0 0h1m0 0h3m0 0h1m0 0h3m0 0h3m0 0h1m-24 3h2m0 0h1m0 0h2m0 0h1m0 0h2m0 0h1m0 0h3m0 0h3m0 0h1m0 0h2m0 0h2m0 0h2m0 0h1m0 0h1m-24 2h2m0 0h1m0 0h2m0 0h1m0 0h2m0 0h1m0 0h3m0 0h1m0 0h2m0 0h2m0 0h1m0 0h2m0 0h2m0 0h2m-24 3h3m0 0h3m0 0h1m0 0h2m0 0h1m0 0h3m0 0h4m0 0h3m0 0h4m0 3h1m0 0h1m0 0h2m0 0h1m0 0h1m0 0h2m0 0h3m0 0h3m0 0h1m11 0h2m0 0h2m0 0h1m0 0h2m0 0h1m0 0h2m0 0h1m0 0h1m-38-26h2m0 0h2m0 0h1m0 0h2m0 0h3m0 0h1m0 0h2m0 0h2m0 0h1m0 0h2m0 0h1m0 0h2m0 0h3m-24 2h2m0 0h1m0 0h1m0 0h2m0 0h1m0 0h2m0 0h1m0 0h2m0 0h1m0 0h1m0 0h1m0 0h2m0 0h1m0 0h1m17 0h1m0 0h1m-38 2h2m0 0h1m0 0h2m0 0h1m0 0h2m0 0h1m0 0h1m0 0h2m0 0h1m0 0h1m0 0h2m0 0h1m17 0h3m0 0h1m-38 3h2m0 0h3m0 0h3m0 0h2m0 0h1m0 0h2m0 0h1m0 0h1m16 0h1m0 0h2m0 0h1m0 0h2m0 0h1m-38 2h2m0 0h3m0 0h3m0 0h3m0 0h2.5m2 0h1.5m0 0h1m8.5 0h1.5m0 0h1m0 0h2m0 0h1m0 0h2m0 0h1m0 0h2m0 0h1m-38 2h2m0 0h1m0 0h2m0 0h1m0 0h2m0 0h3m0 0h3m0 0h2m9.5 0h2.5m0 0h3m0 0h3m0 0h3m0 0h1m-38 2h2m0 0h1m0 0h1m0 0h2m0 0h1m0 0h1m0 0h2m0 0h1m0 0h2m0 0h1m0 0h2m9 0h2m0 0h1m0 0h2m0 0h1m0 0h1m0 0h2m0 0h1m0 0h2m0 0h1m-38 3h2m0 0h1m0 0h1m0 0h1m0 0h2m0 0h1m0 0h2m0 0h1m0 0h2m0 0h1m0 0h1m10 0h2m0 0h2m0 0h1m0 0h1m0 0h1m0 0h2m0 0h1m0 0h2m0 0h1m-38 2h3m0 0h2m0 0h1m0 0h2m0 0h3m0 0h3m11 0h3m0 0h1m0 0h2m0 0h3m0 0h3m0 0h1m-38 3h3m0 0h3m0 0h2m0 0h1m0 0h2m0 0h1m0 0h2m12 0h2m0 0h3m0 0h3m0 0h1m0 0h2m0 0h1m-38 2h2m0 0h1m0 0h2m0 0h1m0 0h2m0 0h1m0 0h2m0 0h1m0 0h2m12.5 0h1.5m0 0h2m0 0h1m0 0h2m0 0h2m0 0h1m0 0h2m0 3h2m0 0h1m0 0h2m0 0h3m0 0h2.5m-10.5-24h1m-1 3h2m0 0h3m0 0h2.5m-7.5 2h2m0 0h3m0 0h3m-8 2h2m0 0h1m0 0h2m0 0h1m0 0h2m-8 3h2m0 0h1m0 0h1m0 0h2m0 0h1m-7 2h2m0 0h2m0 0h1m6 0h1m-12 2h2m0 0h2.5m1.5 0h2m0 0h3m0 0h2m-13 3h2m0 0h1m0 0h2m0 0h1m0 0h2m0 0h3m0 0h2m0 0h1.5m-14.5 2h3m0 0h3m0 0h2m0 0h1m0 0h2m0 0h3m0 0h1m-15 3h3m0 0h2m0 0h1m0 0h2m0 0h1m0 0h2m0 0h2.5m21.5 2h2m0 0h3m0 0h1m0 0h2m0 0h1m0 0h2m0 0h1m0 0h2m0 0h1m0 0h2m0 0h2m0 0h2m0 0h1m0 0h2m0 0h3m0 0h1m0 0h2m0 0h2m0 0h2m-2.5-18h2.5m-7.5 3h1.5m0 0h2m0 0h1m0 0h3m-9.5 3h3.5m0 0h3m0 0h3m-9 2h2m0 0h1m0 0h2m0 0h1m0 0h3m-16 3h2m0 0h1m0 0h2m0 0h1m0 0h3m0 0h2m0 0h1m0 0h2m0 0h2m-28 3h2m0 0h3m0 0h3m0 0h3m0 0h3m0 0h1m0 0h2m0 0h1m0 0h3m0 0h2m0 0h1m0 0h2m0 0h2m0 4h1m0 0h1m0 0h3m0 0h3m0 0h3m0 0h2m0 0h2m0 0h2m0 0h1m0 0h2m0 0h1m0 0h2m0 0h1m0 0h3m0 0h1.5m5-26h2.5m0 0h2m-6 2h1m0 0h1m0 0h2m0 0h2m-8 3h4m0 0h4m-38 3h1m0 0h1m0 0h2m0 0h1m0 0h3m0 0h2m0 0h1m0 0h3m0 0h3m0 0h3m0 0h1m0 0h2m0 0h1m0 0h3m0 0h3m0 0h3m0 0h1m0 0h2m0 0h2m-38 3h1m0 0h2m0 0h1m0 0h2m0 0h2m0 0h2m0 0h3m0 0h1m0 0h2m0 0h1m0 0h2m0 0h1m0 0h2m0 0h1m0 0h2m0 0h2m0 0h1m0 0h2m0 0h2m0 0h1m0 0h2m0 0h1m0 0h2m-38 2h3m0 0h3m0 0h3m0 0h1m0 0h2m0 0h1m0 0h3m0 0h3m0 0h3m0 0h3m0 0h3m0 0h1m0 0h3m0 0h3m0 0h3m-38 3h3m0 0h3m0 0h3m0 0h3m0 0h4m0 0h3m0 0h3m0 0h3m0 0h3m0 0h1m0 0h2m0 0h1m0 0h1.5m-33.5 2h2m0 0h1m0 0h2m0 0h1m0 0h3m0 0h3m0 0h3m0 0h1m0 0h3m0 0h3m0 0h3m0 0h3m0 0h1m0 0h2m-31 3h2m0 0h1m0 0h2m0 0h1m0 0h3m0 0h3m0 0h1m0 0h2m0 0h1m0 0h3m0 0h3m0 0h1m0 0h2m0 0h1m0 0h3m-29 2h2m0 0h1m0 0h2m0 0h1m0 0h2m0 0h1m0 0h2m0 0h2m0 0h2m0 0h1m0 0h2m0 0h1m0 0h2m0 0h2m0 0h1m0 0h2m0 0h1m0 0h3m8-22h2m0 0h2m0 0h2m0 0h3m0 0h2m0 0h1.5m-12.5 4h2m0 0h2m0 0h2m0 0h3m0 0h2m0 0h3m0 0h1.5m-15.5 4h4m0 0h5m0 0h5m0 0h2.5m-16.5 4h2m0 0h1.5m-390.5 36h2m0 0h1m0 0h4m0 0h4m0 0h6m0 0h1m0 0h5m-26-19h1m0 0h5m0 0h4m0 0h1m0 0h4m0 0h1m0 0h4m0 0h1m0 0h5m-25.5 4h4.5m0 0h1m0 0h4m0 0h4m0 0h1m0 0h4m0 0h1m0 0h3m0 0h3m-27 4h1m0 0h5m0 0h4m0 0h1m0 0h4m0 0h5m0 0h4m0 0h1m0 0h2m-25 5h4m0 0h4m0 0h1m0 0h4m0 0h1m0 0h4m0 0h1m0 0h4m0 0h2m-23 4h2m0 0h5m0 0h4m0 0h1m0 0h5m0 0h6m0 2h8m0 0h7m0 0h4m0 0h7m0 0h4m0 0h2m0 0h7m-39-14h6m0 0h3m0 0h6m0 0h7m0 0h1m0 0h8m0 0h8m-39 8h8m0 0h1m0 0h10m0 0h3m0 0h8m0 0h9m0 6h3m0 0h4m0 0h2m0 0h4m0 0h5m0 0h5m0 0h4m0 0h6m0 0h6m-39-17h4m0 0h1m0 0h6m0 0h3m0 0h6m0 0h1m0 0h5m0 0h5m0 0h1m0 0h7m-39 6h4m0 0h3m0 0h4m0 0h2m0 0h8m0 0h2m0 0h3m0 0h5m0 0h2m0 0h6m0 11h1m0 0h2m0 0h5m0 0h2m0 0h4m0 0h3m0 0h3m0 0h6m-26-17h3m0 0h1m0 0h6m0 0h1m0 0h7m0 0h8m-26 5h4m0 0h7m0 0h6m0 0h1m0 0h8m-26 6h3m0 0h1m0 0h6m0 0h1m0 0h6m0 0h9m0 6h3m0 0h3m0 0h2m0 0h4m0 0h1m0 0h6m0 0h5m0 0h2m0 0h2m-28-19h2m0 0h3m0 0h2m0 0h2m0 0h3m0 0h3m0 0h2m0 0h3m0 0h2m0 0h3m0 0h3m-28 4h5m0 0h4m0 0h1m0 0h4m0 0h1m0 0h4m0 0h1m0 0h4m0 0h1m0 0h3m-28 4h3m0 0h2m0 0h3m0 0h2m0 0h2m0 0h2m0 0h2m0 0h3m0 0h2m0 0h3m0 0h4m-28 5h3m0 0h2m0 0h3m0 0h1m0 0h3m0 0h2m0 0h2m0 0h2m0 0h3m0 0h2m0 0h5m-28 4h3m0 0h2m0 0h3m0 0h1m0 0h4m0 0h1m0 0h4m0 0h1m0 0h4m0 0h1m0 0h4m0 2h1m0 0h2m0 0h1m0 0h4m0 0h3m0 0h1m0 0h3m0 0h1m0 0h2m0 0h3m0 0h1m0 0h3m0 0h4m0 0h1m0 0h2m-32-19h3m0 0h4m0 0h5m0 0h4m0 0h4m0 0h4m0 0h1m0 0h4m0 0h3m-32 4h3m0 0h4m0 0h4m0 0h1m0 0h4m0 0h4m0 0h5m0 0h3m0 0h1m0 0h3m-32 3h2m0 0h1m0 0h3m0 0h1m0 0h4m0 0h4m0 0h1m0 0h4m0 0h4m0 0h1m0 0h3m0 0h4m-32 4h2m0 0h1m0 0h3m0 0h1m0 0h4m0 0h4m0 0h1m0 0h4m0 0h4m0 0h4m0 0h4m-32 4h3m0 0h4m0 0h1m0 0h3m0 0h1m0 0h4m0 0h4m0 0h1m0 0h3m0 0h1m0 0h3m0 0h2m0 0h2m0 4h4m0 0h2m0 0h2m0 0h1m0 0h3m0 0h1m0 0h2m0 0h2m0 0h1m0 0h3m0 0h1m0 0h2m0 0h2m0 0h2m0 0h1m-29-20h4m0 0h5m0 0h4m0 0h4m0 0h1m0 0h4m0 0h4m0 0h1m0 0h2m-29 4h3m0 0h1m0 0h4m0 0h1m0 0h3m0 0h1m0 0h4m0 0h1m0 0h3m0 0h1m0 0h4m0 0h1m0 0h2m-29 4h3m0 0h4m0 0h1m0 0h4m0 0h4m0 0h1m0 0h3m0 0h1m0 0h3m0 0h2m0 0h3m-29 4h3m0 0h1m0 0h3m0 0h2m0 0h3m0 0h1m0 0h3m0 0h1m0 0h3m0 0h1m0 0h3m0 0h1m0 0h4m-29 4h4m0 0h4m0 0h1m0 0h4m0 0h4m0 0h4m0 0h1m0 0h3m0 0h1m0 0h3m0 4h2m0 0h3m0 0h1m0 0h2m0 0h1m0 0h3m0 0h2m0 0h2m0 0h2m0 0h2m0 0h3m0 0h2m0 0h2m0 0h2m0 0h1m0 0h1m0 0h1m-32-21h3m0 0h3m0 0h3m0 0h3m0 0h1m0 0h3m0 0h3m0 0h1m0 0h2m0 0h1m0 0h3m0 0h1m0 0h2m0 0h1m0 0h2m-32 3h3m0 0h3m0 0h3m0 0h1m0 0h2m0 0h1m0 0h3m0 0h1m0 0h2m0 0h1m0 0h2m0 0h1m0 0h3m0 0h1m0 0h2m0 0h1m0 0h2m-32 3h3m0 0h3m0 0h1m0 0h3m0 0h3m0 0h4m0 0h3m0 0h3m0 0h1m0 0h3m0 0h1m0 0h2m0 0h2m-32 2h2m0 0h1m0 0h3m0 0h1m0 0h2m0 0h1m0 0h2m0 0h1m0 0h3m0 0h1m0 0h2m0 0h1m0 0h2m0 0h2m0 0h2m0 0h2m0 0h1m0 0h3m-32 3h2m0 0h2m0 0h2m0 0h1m0 0h2m0 0h2m0 0h1m0 0h2m0 0h2m0 0h1m0 0h2m0 0h2m0 0h1m0 0h2m0 0h2m0 0h1m0 0h2m0 0h2m0 0h1m-32 3h3m0 0h1m0 0h3m0 0h3m0 0h1m0 0h3m0 0h3m0 0h4m0 0h3m0 0h3m0 0h4m0 0h1m-32 3h2m0 0h1m0 0h2m0 0h2m0 0h1m0 0h2m0 0h2m0 0h2m0 0h1m0 0h2m0 0h1m0 0h3m0 0h3m0 0h3m0 0h1m0 0h4m-32 3h2m0 0h3m0 0h1m0 0h2m0 0h1m0 0h3m0 0h3m0 0h1m0 0h2m0 0h2m0 0h1m0 0h2m0 0h1m0 0h3m0 0h1m0 0h2m0 0h2m0 1h1m0 0h1m0 0h1m0 0h2m0 0h3m0 0h3m0 0h1m0 0h2m0 0h2m0 0h1m0 0h2m0 0h1m0 0h2m0 0h1m0 0h2m0 0h2m0 0h1m0 0h1m0 0h2m0 0h1m0 0h2m-34-20h2m0 0h2m0 0h1m0 0h3m0 0h2m7.5 0h1.5m0 0h3m0 0h3m0 0h3m0 0h2m0 0h1m0 0h3m-34 2h2m0 0h1m0 0h1m0 0h1m0 0h3m0 0h2m0 0h1m0 0h2m0 0h3m0 0h3m0 0h3m0 0h3m0 0h1m0 0h2m0 0h1m0 0h1m0 0h2m0 0h2m-34 2h1m0 0h2m0 0h1m0 0h1m0 0h2m0 0h1m0 0h2m0 0h1m0 0h2m0 0h3m0 0h2m0 0h1m0 0h2m0 0h1m0 0h2m0 0h2m0 0h1m0 0h2m0 0h1m0 0h2m0 0h1m0 0h1m-34 3h1m0 0h1m0 0h2m0 0h3m0 0h3m0 0h1m0 0h2m0 0h1m0 0h2m0 0h1m0 0h1m0 0h2m0 0h1m0 0h2m0 0h1m0 0h2m0 0h1m0 0h2m0 0h1m0 0h2m0 0h1m0 0h1m-34 2h2m0 0h2m0 0h1m0 0h2m0 0h1m0 0h3m0 0h3m0 0h3m0 0h2m0 0h1m0 0h2m0 0h1m0 0h2m0 0h1m0 0h2m0 0h1m0 0h2m0 0h1m0 0h2m-34 3h2m0 0h3m0 0h3m0 0h3m0 0h3m0 0h3m0 0h2m0 0h3m0 0h3m0 0h1m0 0h2m0 0h1m0 0h2m0 0h1m0 0h2m-34 2h1m0 0h1m0 0h2m0 0h1m0 0h2m0 0h1m0 0h2m0 0h1m0 0h2m0 0h1m0 0h1m0 0h2m0 0h1m0 0h1m0 0h2m0 0h1m0 0h2m0 0h2m0 0h1m0 0h2m0 0h1m0 0h2m0 0h2m-34 3h1m0 0h1m0 0h2m0 0h1m0 0h2m0 0h1m0 0h2m0 0h1m0 0h2m0 0h1m0 0h1m0 0h1m0 0h2m0 0h1m0 0h2m0 0h1m0 0h2m0 0h1m0 0h2m0 0h1m0 0h2m0 0h2m0 0h1m0 0h1m-34 2h2m0 0h3m0 0h3m0 0h3m0 0h3m0 0h2m0 0h3m0 0h3m0 0h3m0 0h3m0 0h2m0 0h1m0 0h2m0 0h1m0 1h2m0 0h1m0 0h2m0 0h2m0 0h1m0 0h2m0 0h1m0 0h2m0 0h1m0 0h1m0 0h2m0 0h2m0 0h1m0 0h1m0 0h2m0 0h1m0 0h2m0 0h2m0 0h1m0 0h2m-31-21h2m0 0h1m0 0h2m0 0h1m0 0h1m22 0h2m-31 3h2m0 0h1m0 0h2m0 0h1m0 0h2m13 0h2m0 0h1m0 0h2m0 0h1m0 0h2m0 0h2m-31 2h2m0 0h1m0 0h1m0 0h2m0 0h1m0 0h2m0 0h1m0 0h2m0 0h3m0 0h3m0 0h3m0 0h3m0 0h3m0 0h2m0 0h2m-31 3h2m0 0h1m0 0h1m0 0h2m0 0h1m0 0h2m0 0h1m0 0h1m0 0h1m0 0h2m0 0h1m0 0h2m0 0h1m0 0h2m0 0h1m0 0h2m0 0h1m0 0h2m0 0h1m0 0h1m0 0h3m-31 2h3m0 0h3m0 0h3m0 0h2m0 0h1m0 0h2m0 0h1m0 0h2m0 0h1m0 0h2m0 0h1m0 0h2m0 0h1m0 0h2m0 0h1m0 0h1m0 0h3m-31 3h2m0 0h1m0 0h2m0 0h1m0 0h2m0 0h1m0 0h1m0 0h2m0 0h1m0 0h2m0 0h1m0 0h2m0 0h3m0 0h3m0 0h3m0 0h4m-31 2h2m0 0h2m0 0h1m0 0h2m0 0h1m0 0h2m0 0h2m0 0h1m0 0h2m0 0h1m0 0h2m0 0h3m0 0h3m0 0h3m0 0h4m-31 3h2m0 0h1m0 0h1m0 0h1m0 0h2m0 0h1m0 0h2m0 0h1m0 0h1m0 0h2m0 0h1m0 0h2m0 0h1m0 0h2m0 0h1m0 0h2m0 0h1m0 0h2m0 0h1m0 0h2m0 0h2m0 3h2m0 0h3m0 0h1m0 0h1m0 0h2m0 0h3m0 0h2m0 0h2m0 0h2m0 0h2m0 0h2m0 0h2m4 0h1m0 0h2m0 0h1m-32-20h1m0 0h1m0 0h2m0 0h1m0 0h3m0 0h1m0 0h2m0 0h1m0 0h2m0 0h1m0 0h2m0 0h1m0 0h3m0 0h3m0 0h2m0 0h1m0 0h3m0 0h2m-32 3h2m0 0h3m0 0h3m0 0h1m0 0h3m0 0h3m0 0h3m0 0h3m0 0h3m0 0h3m0 0h5m-32 2h1m0 0h1m0 0h3m0 0h3m0 0h3m0 0h1m0 0h3m0 0h3m0 0h3m0 0h3m0 0h3m0 0h5m-32 3h1m0 0h1m0 0h3m0 0h3m0 0h3m0 0h3m0 0h1m0 0h3m0 0h3m0 0h1m0 0h2m0 0h1m0 0h2m0 0h1m0 0h4m-32 3h2m0 0h3m0 0h3m0 0h1m0 0h2m0 0h1m0 0h2m0 0h1m0 0h3m0 0h3m0 0h1m0 0h2m0 0h1m0 0h3m0 0h4m-32 3h2m0 0h1m0 0h2m0 0h1m0 0h3m0 0h1m0 0h2m0 0h3m0 0h1m0 0h2m0 0h1m0 0h2m0 0h1m0 0h2m0 0h2m0 0h2m0 0h1m0 0h3m-32 2h2m0 0h1m0 0h3m0 0h3m0 0h1m0 0h2m0 0h4m0 0h2m0 0h1m0 0h3m0 0h3m0 0h1m0 0h3m0 0h3m0 4h1m2 0h1m-4-20h2m0 0h3m0 0h3m0 0h1m0 0h2m0 0h1m0 0h2m0 0h1m0 0h2m0 0h1m0 0h3m0 0h3m0 0h3m0 0h1m0 0h3m0 0h2m-33 3h2m0 0h1m0 0h2m0 0h1m0 0h2m0 0h1m0 0h2m0 0h1m0 0h2m0 0h2m0 0h2m0 0h1m0 0h2m0 0h1m0 0h2m0 0h1m0 0h3m-28 2h1m0 0h2m0 0h2m0 0h1m0 0h2m0 0h1m0 0h2m0 0h1m0 0h2m0 0h2m-16 3h1m0 0h1m0 0h3m0 0h3m0 0h3m0 0h3m0 0h3m-17 3h2m0 0h3m0 0h1m0 0h2m0 0h1m0 0h1m-10 2h2m0 0h1m0 0h3m0 0h3m0 0h1m-10 3h2m0 0h1m0 0h3m0 0h2m-7 2h1m0 0h2m0 0h2m27-19h1m-1 3h1m-374 23h1m0 0h1m0 0h4m0 0h7m-9 4h2m0 0h1m0 0h6m-8.5 4h2.5m0 0h1m0 0h5m-5 4h5m-2.5 4h2.5m3 6h1m0 0h5m0 0h1m0 0h7m0 0h3m0 0h5m0 0h2m0 0h7m0 0h1m0 0h5m0 0h5m0 0h10m0 0h2m-57-16h5m0 0h2m0 0h6m0 0h5m0 0h2m0 0h6m0 0h5m0 0h6m0 0h2m0 0h8m0 0h2m0 0h4m0 0h4m-57 8h4m0 0h3m0 0h3m0 0h3m0 0h5m0 0h2m0 0h6m0 0h1m0 0h7m0 0h5m0 0h6m0 0h4m0 0h8m0 8h3m0 0h3m0 0h7m0 0h8m0 0h3m0 0h5m0 0h7m0 0h7m0 0h3m-46-20h5m0 0h9m0 0h6m0 0h5m0 0h2m0 0h7m0 0h2m0 0h4m0 0h6m-46 4h5m0 0h9m0 0h2m0 0h4m0 0h5m0 0h1m0 0h9m0 0h1m0 0h10m-46 7h5m0 0h1m0 0h7m0 0h3m0 0h5m0 0h5m0 0h3m0 0h6m0 0h1m0 0h10m0 9h3m0 0h3m0 0h4m0 0h4m0 0h3m0 0h4m0 0h3m0 0h3m0 0h4m0 0h1m-32-20h5m0 0h1m0 0h5m0 0h1m0 0h6m0 0h7m0 0h7m-32 6h5m0 0h6m0 0h1m0 0h6m0 0h1m0 0h6m0 0h1m0 0h6m-32 6h5m0 0h1m0 0h6m0 0h2m0 0h5m0 0h2m0 0h5m0 0h1m0 0h5m0 8h2m0 0h3m0 0h1m0 0h3m0 0h1m0 0h2m0 0h1m0 0h3m0 0h3m0 0h1m0 0h2m0 0h2m0 0h2m0 0h1m0 0h3m0 0h3m0 0h4m0 0h3m-40-24h3m0 0h3m0 0h1m0 0h3m0 0h1m0 0h2m0 0h1m0 0h3m0 0h1m0 0h2m0 0h1m0 0h3m0 0h1m0 0h2m0 0h1m0 0h3m0 0h1m0 0h2m0 0h1m0 0h3m0 0h2m-40 3h2m0 0h1m0 0h3m0 0h1m0 0h2m0 0h2m0 0h2m0 0h1m0 0h2m0 0h2m0 0h1m0 0h2m0 0h2m0 0h2m0 0h1m0 0h2m0 0h2m0 0h2m0 0h1m0 0h2m0 0h2m0 0h3m-40 3h2m0 0h1m0 0h3m0 0h3m0 0h1m0 0h3m0 0h1m0 0h2m0 0h1m0 0h2m0 0h2m0 0h2m0 0h1m0 0h2m0 0h1m0 0h3m0 0h1m0 0h2m0 0h1m0 0h3m0 0h3m-40 3h3m0 0h1m0 0h2m0 0h1m0 0h3m0 0h4m0 0h3m0 0h4m0 0h3m0 0h1m0 0h2m0 0h1m0 0h3m0 0h1m0 0h2m0 0h1m0 0h2m0 0h3m-40 3h2m0 0h2m0 0h2m0 0h1m0 0h2m0 0h1m0 0h3m0 0h1m0 0h2m0 0h1m0 0h3m0 0h1m0 0h2m0 0h2m0 0h2m0 0h1m0 0h3m0 0h1m0 0h2m0 0h1m0 0h2m0 0h3m-40 3h2m0 0h1m0 0h3m0 0h1m0 0h2m0 0h2m0 0h2m0 0h2m0 0h1m0 0h2m0 0h2m0 0h2m0 0h1m0 0h2m0 0h2m0 0h2m0 0h2m0 0h1m0 0h2m0 0h2m0 0h1m0 0h3m-40 3h2m0 0h1m0 0h2m0 0h2m0 0h2m0 0h2m0 0h1m0 0h3m0 0h3m0 0h1m0 0h3m0 0h3m0 0h1m0 0h3m0 0h3m0 0h1m0 0h3m0 0h4m-40 3h2m0 0h3m0 0h4m0 0h3m0 0h3m0 0h1m0 0h3m0 0h3m0 0h4m0 0h3m0 0h1m0 0h3m0 0h3m0 0h1m0 0h3m0 3h1m0 0h2m0 0h1m0 0h2m0 0h2m0 0h1m0 0h3m0 0h1m0 0h1m0 0h2m0 0h3m0 0h3m0 0h1m0 0h2m0 0h2m0 0h1m0 0h2m0 0h1m0 0h3m0 0h1m-35-24h1m0 0h2m0 0h1m0 0h2m0 0h1m0 0h2m0 0h1m0 0h2m0 0h1m0 0h2m0 0h2m0 0h1m0 0h2m0 0h2m0 0h1m0 0h2m0 0h1m0 0h2m0 0h2m0 0h1m0 0h2m0 0h2m-35 3h1m0 0h1m0 0h2m0 0h1m0 0h2m0 0h2m0 0h1m0 0h2m0 0h1m0 0h2m0 0h2m0 0h1m0 0h2m0 0h1m0 0h2m0 0h1m0 0h2m0 0h2m0 0h2m0 0h1m0 0h2m0 0h2m-35 3h2m0 0h1m0 0h2m0 0h1m0 0h3m0 0h3m0 0h1m0 0h2m0 0h1m0 0h2m0 0h2m0 0h1m0 0h2m0 0h1m0 0h2m0 0h2m0 0h1m0 0h2m0 0h2m0 0h2m-35 3h2m0 0h1m0 0h3m0 0h3m0 0h3m0 0h1m0 0h3m0 0h4m0 0h3m0 0h3m0 0h3m0 0h1m0 0h3m0 0h1m0 0h1m-35 3h2m0 0h1m0 0h3m0 0h1m0 0h2m0 0h1m0 0h2m0 0h2m0 0h2m0 0h1m0 0h3m0 0h1m0 0h2m0 0h2m0 0h1m0 0h2m0 0h2m0 0h1m0 0h3m0 0h1m-35 3h1m0 0h2m0 0h2m0 0h2m0 0h1m0 0h2m0 0h1m0 0h3m0 0h3m0 0h1m0 0h3m0 0h3m0 0h1m0 0h3m0 0h3m0 0h4m-35 3h1m0 0h1m0 0h3m0 0h3m0 0h3m0 0h1m0 0h2m0 0h1m0 0h3m0 0h1m0 0h2m0 0h1m0 0h2m0 0h1m0 0h3m0 0h3m0 0h4m-35 2h2m0 0h1m0 0h2m0 0h1m0 0h2m0 0h1m0 0h3m0 0h1m0 0h2m0 0h1m0 0h3m0 0h3m0 0h1m0 0h2m0 0h2m0 0h1m0 0h2m0 0h1m0 0h3m0 0h1m0 4h1m0 0h2m0 0h1m0 0h1m0 0h1m0 0h2m0 0h1m0 0h1m0 0h2m0 0h2m0 0h1m0 0h1m0 0h2m0 0h2m0 0h2m0 0h2m0 0h1m0 0h1m0 0h1m0 0h1m0 0h1m0 0h1m0 0h1m-31-25h2m0 0h2m0 0h2m0 0h2m0 0h2m0 0h1m0 0h2m0 0h2m0 0h2m0 0h2m0 0h2m0 0h2m0 0h2m0 0h1m0 0h2m0 0h2m0 0h1m-31 2h1m0 0h1m0 0h1m0 0h1m0 0h1m0 0h1m0 0h1m0 0h1m0 0h2m0 0h2m0 0h1m0 0h1m0 0h1m0 0h1m0 0h1m0 0h1m0 0h1m0 0h2m0 0h2m0 0h2m0 0h1m0 0h2m0 0h2m0 0h1m-31 2h1m0 0h2m0 0h1m0 0h1m0 0h1m0 0h1m0 0h1m0 0h2m0 0h2m0 0h2m0 0h2m0 0h2m0 0h1m0 0h2m0 0h2m0 0h2m0 0h2m0 0h1m0 0h1m0 0h2m-31 2h1m0 0h3m0 0h2m0 0h2m0 0h2m0 0h2m0 0h1m0 0h1m0 0h1m0 0h1m0 0h1m0 0h2m0 0h2m0 0h2m0 0h2m0 0h2m0 0h2m0 0h2m-31 2h1m0 0h2m0 0h1m0 0h2m0 0h2m0 0h2m0 0h2m0 0h1m0 0h1m0 0h1m0 0h2m0 0h2m0 0h1m0 0h1m0 0h2m0 0h2m0 0h2m0 0h2m0 0h2m-31 1h1m0 0h2m0 0h2m0 0h1m0 0h2m0 0h2m0 0h2m0 0h2m0 0h2m0 0h1m0 0h1m0 0h1m0 0h1m0 0h2m0 0h1m0 0h1m0 0h1m0 0h2m0 0h2m0 0h2m-31 2h1m0 0h2m0 0h2m0 0h3m0 0h2m0 0h2m0 0h2m0 0h2m0 0h2m0 0h2m0 0h1m0 0h1m0 0h1m0 0h1m0 0h1m0 0h2m0 0h2m0 0h1m0 0h1m-31 2h1m0 0h2m0 0h2m0 0h2m0 0h1m0 0h2m0 0h2m0 0h2m0 0h2m0 0h2m0 0h2m0 0h1m0 0h2m0 0h2m0 0h2m0 0h2m0 0h1m0 0h1m-31 2h1m0 0h1m0 0h1m0 0h1m0 0h1m0 0h1m0 0h1m0 0h1m0 0h2m0 0h2m0 0h2m0 0h2m0 0h2m0 0h2m0 0h3m0 0h2m0 0h2m0 0h2m0 0h2m-31 2h2m0 0h2m0 0h2m0 0h1m0 0h1m0 0h1m0 0h1m0 0h1m0 0h1m0 0h1m0 0h1m0 0h1m0 0h1m0 0h2m0 0h2m0 0h2m0 0h1m0 0h1m0 0h1m0 0h1m0 0h1m0 0h1m0 0h1m0 0h2m-31 2h2m0 0h2m0 0h2m0 0h1m0 0h2m0 0h2m0 0h2m0 0h2m0 0h2m0 0h1m0 0h1m0 0h1m0 0h1m0 0h1m0 0h1m0 0h1m0 0h1m0 0h1m0 0h2m0 0h3m-31 2h1m0 0h1m0 0h2m0 0h2m0 0h2m0 0h1m0 0h1m0 0h1m0 0h1m0 0h1m0 0h1m0 0h1m0 0h1m0 0h1m0 0h1m0 0h1m0 0h2m0 0h2m0 0h2m0 0h2m0 0h1m0 0h1m0 0h2m-31 2h1m0 0h2m0 0h1m0 0h1m0 0h1m0 0h2m0 0h2m0 0h2m0 0h2m0 0h2m0 0h2m0 0h2m0 0h1m0 0h1m0 0h1m0 0h2m0 0h2m0 0h2m0 0h2m0 2h1m0 0h1m0 0h2m0 0h2m0 0h2m0 0h1m0 0h1m0 0h1m0 0h1m0 0h2m0 0h1m0 0h1m0 0h3m0 0h2m0 0h2m0 0h2m0 0h2m0 0h2m0 0h1m0 0h2m0 0h1m-33-25h1m0 0h2m0 0h2m0 0h1m0 0h1m0 0h1m0 0h1m0 0h3m0 0h2m0 0h2m0 0h2m0 0h2m0 0h1m0 0h1m0 0h1m0 0h1m0 0h1m0 0h1m0 0h2m0 0h1m0 0h1m0 0h1m0 0h2m-33 2h1m0 0h2m0 0h2m0 0h2m0 0h1m0 0h1m0 0h1m0 0h2m0 0h2m0 0h2m0 0h2m0 0h2m0 0h1m0 0h1m0 0h1m0 0h1m0 0h1m0 0h1m0 0h1m0 0h2m0 0h2m0 0h2m-33 2h1m0 0h2m0 0h2m0 0h2m0 0h1m0 0h1m0 0h1m0 0h1m0 0h1m0 0h1m0 0h1m0 0h1m0 0h1m0 0h1m0 0h1m0 0h1m0 0h2m0 0h1m0 0h1m0 0h1m0 0h1m0 0h1m0 0h1m0 0h1m0 0h1m0 0h1m0 0h1m0 0h2m-33 2h1m0 0h2m0 0h1m0 0h1m0 0h1m0 0h1m0 0h1m0 0h1m0 0h1m0 0h1m0 0h1m0 0h1m0 0h1m0 0h1m0 0h1m0 0h1m0 0h2m0 0h2m0 0h1m0 0h1m0 0h1m0 0h1m0 0h1m0 0h1m0 0h1m0 0h1m0 0h1m0 0h2m0 0h1m-33 1h1m0 0h2m0 0h1m0 0h1m0 0h1m0 0h1m0 0h1m0 0h2m0 0h2m0 0h2m0 0h2m0 0h2m0 0h1m0 0h1m0 0h1m0 0h1m0 0h1m0 0h1m0 0h1m0 0h1m0 0h1m0 0h1m0 0h1m0 0h1m0 0h2m0 0h1m-33 2h1m0 0h2m0 0h2m0 0h2m0 0h2m0 0h1m0 0h1m0 0h1m0 0h1m0 0h1m0 0h1m0 0h1m0 0h1m0 0h1m0 0h1m0 0h1m0 0h1m0 0h1m0 0h1m0 0h1m0 0h1m0 0h1m0 0h2m0 0h2m0 0h3m-33 2h1m0 0h2m0 0h2m0 0h2m0 0h2m0 0h1m0 0h1m0 0h1m0 0h1m0 0h1m0 0h1m0 0h1m0 0h1m0 0h1m0 0h1m0 0h2m0 0h2m0 0h2m0 0h3m0 0h2m0 0h3m-33 2h1m0 0h2m0 0h2m0 0h2m0 0h2m0 0h1m0 0h1m0 0h1m0 0h2m0 0h2m0 0h2m0 0h2m0 0h1m0 0h2m0 0h2m0 0h2m0 0h1m0 0h1m0 0h1m0 0h1m0 0h2m-33 2h1m0 0h2m0 0h2m0 0h2m0 0h1m0 0h1m0 0h1m0 0h1m0 0h1m0 0h2m0 0h2m0 0h2m0 0h2m0 0h2m0 0h1m0 0h1m0 0h1m0 0h1m0 0h1m0 0h1m0 0h1m0 0h2m0 0h2m-33 2h1m0 0h2m0 0h2m0 0h2m0 0h1m0 0h1m0 0h1m0 0h1m0 0h1m0 0h1m0 0h1m0 0h1m0 0h1m0 0h1m0 0h1m0 0h1m0 0h1m0 0h1m0 0h1m0 0h2m0 0h2m0 0h2m0 0h2m0 0h1m0 0h1m0 0h1m-33 2h1m0 0h2m0 0h2m0 0h2m0 0h1m0 0h1m0 0h1m0 0h1m0 0h1m0 0h1m0 0h2m0 0h2m0 0h2m0 0h2m0 0h2m0 0h1m0 0h2m0 0h2m0 0h2m0 0h2m0 0h1m-33 1h1m0 0h2m0 0h2m0 0h1m0 0h2m0 0h2m0 0h2m0 0h2m0 0h1m0 0h1m0 0h1m0 0h2m0 0h2m0 0h2m0 0h2m0 0h1m0 0h1m0 0h1m0 0h1m0 0h1m0 0h2m0 0h1m-33 2h1m0 0h2m0 0h1m0 0h2m0 0h2m0 0h2m0 0h2m0 0h2m0 0h1m0 0h1m0 0h3m0 0h2m0 0h2m0 0h2m0 0h2m0 0h2m0 0h3m0 0h1m0 3h1m0 0h2m0 0h2m0 0h1m0 0h1m0 0h2m0 0h1m0 0h1m0 0h1m0 0h1m0 0h1m0 0h1m0 0h1m0 0h2m0 0h2m0 0h2m0 0h2m0 0h2m-26-25h1m0 0h2m0 0h2m0 0h2m0 0h1m0 0h1m0 0h1m0 0h1m0 0h1m0 0h2m0 0h2m0 0h2m0 0h2m0 0h1m0 0h1m0 0h1m0 0h2m0 0h1m-26 2h1m0 0h2m0 0h2m0 0h1m0 0h2m0 0h2m0 0h2m0 0h2m0 0h2m0 0h1m0 0h1m0 0h1m0 0h1m0 0h1m0 0h1m0 0h1m0 0h2m0 0h1m-26 2h1m0 0h2m0 0h1m0 0h2m0 0h2m0 0h2m0 0h2m0 0h2m0 0h2m0 0h1m0 0h2m0 0h2m0 0h2m0 0h3m-26 1h1m0 0h1m0 0h2m0 0h2m0 0h2m0 0h2m0 0h2m0 0h1m0 0h1m0 0h1m0 0h1m0 0h1m0 0h2m0 0h2m0 0h2m0 0h3m-26 2h1m0 0h1m0 0h2m0 0h2m0 0h2m0 0h2m0 0h2m0 0h1m0 0h2m0 0h2m0 0h2m0 0h2m0 0h2m0 0h3m-26 2h1m0 0h2m0 0h1m0 0h1m0 0h1m0 0h1m0 0h1m0 0h1m0 0h1m0 0h1m0 0h1m0 0h1m0 0h2m0 0h2m0 0h1m0 0h1m0 0h1m0 0h1m0 0h1m0 0h1m0 0h1m0 0h2m-26 2h1m0 0h1m0 0h1m0 0h1m0 0h1m0 0h1m0 0h1m0 0h1m0 0h1m0 0h1m0 0h1m0 0h1m0 0h1m0 0h1m0 0h1m0 0h1m0 0h2m0 0h1m0 0h1m0 0h1m0 0h1m0 0h1m0 0h1m0 0h2m-26 2h2m0 0h2m0 0h2m0 0h2m0 0h2m0 0h2m0 0h1m0 0h1m0 0h1m0 0h1m0 0h1m0 0h2m0 0h2m0 0h2m0 0h3m-26 2h1m0 0h1m0 0h2m0 0h2m0 0h2m0 0h2m0 0h1m0 0h2m0 0h2m0 0h2m0 0h2m0 0h2m0 0h2m0 0h1m0 0h2m-26 2h1m0 0h2m0 0h1m0 0h2m0 0h2m0 0h2m0 0h1m0 0h1m0 0h1m0 0h1m0 0h1m0 0h1m0 0h1m0 0h1m0 0h1m0 0h2m0 0h2m0 0h1m0 0h2m-26 2h1m0 0h2m0 0h2m0 0h1m0 0h1m0 0h1m0 0h1m0 0h1m0 0h1m0 0h1m0 0h1m0 0h1m0 0h2m0 0h2m0 0h2m0 0h1m0 0h1m0 0h1m0 0h1m0 0h2m-26 1h1m0 0h2m0 0h1m0 0h1m0 0h1m0 0h1m0 0h1m0 0h1m0 0h1m0 0h1m0 0h1m0 0h1m0 0h2m0 0h1m0 0h1m0 0h1m0 0h1m0 0h1m0 0h1m0 0h1m0 0h1m0 0h1m0 0h2m-26 2h1m0 0h2m0 0h1m0 0h1m0 0h1m0 0h1m0 0h1m0 0h2m0 0h2m0 0h2m0 0h1m0 0h1m0 0h1m0 0h1m0 0h1m0 0h1m0 0h1m0 0h1m0 0h1m0 0h1m0 0h2m0 3h1m0 0h1m0 0h1m0 0h1m0 0h1m0 0h1m0 0h1m0 0h1m0 0h1m0 0h1m0 0h2m0 0h1m0 0h1m0 0h1m0 0h2m0 0h2m0 0h2m0 0h1m0 0h1m0 0h1m0 0h1m0 0h1m-26-25h2m0 0h2m0 0h2m0 0h1m0 0h1m0 0h1m0 0h1m0 0h1m0 0h1m0 0h1m0 0h1m0 0h1m0 0h2m0 0h2m3 0h1m0 0h2m0 0h1m0 0h1m0 0h1m0 0h1.5m-29.5 2h1m0 0h1m0 0h1m0 0h1m0 0h1m0 0h1m0 0h1m0 0h1m0 0h2m0 0h2m0 0h2m0 0h2m0 0h1m0 0h1m0 0h1m0 0h1m3 0h2m0 0h2m0 0h2m-29 2h1m0 0h2m0 0h2m0 0h2m0 0h2m0 0h1m0 0h1m0 0h1m0 0h1m0 0h1m0 0h1m0 0h1m0 0h2m0 0h2m3 0h1m0 0h1m0 0h1m0 0h1m0 0h1m0 0h1m-29 2h1m0 0h2m0 0h2m0 0h2m0 0h1m0 0h1m0 0h1m0 0h1m0 0h1m0 0h1m0 0h1m0 0h1m0 0h2m0 0h1m0 0h1m0 0h1m4 0h1m0 0h1m0 0h1.5m-27.5 2h1m0 0h2m0 0h2m0 0h2m0 0h1m0 0h1m0 0h1m0 0h1m0 0h1m0 0h1m0 0h1m0 0h2m0 0h1m0 0h2m0 0h1m4 0h1m0 0h1m-26 2h1m0 0h2m0 0h1m0 0h1m0 0h1m0 0h1m0 0h1m0 0h1m0 0h1m0 0h1m0 0h1m0 0h1m0 0h1m0 0h2m0 0h1m0 0h2m0 0h1m0 0h1m-21 2h1m0 0h2m0 0h1m0 0h1m0 0h1m0 0h2m0 0h2m0 0h2m0 0h2m0 0h2m0 0h2m0 0h1m0 0h1m0 0h1m-21 2h1m0 0h1m0 0h1m0 0h1m0 0h1m0 0h1m0 0h2m0 0h2m0 0h2m0 0h2m0 0h2m0 0h2m0 0h1m0 0h1m0 0h1m0 0h2m-23 2h1m0 0h1m0 0h1m0 0h1m0 0h1m0 0h1m0 0h2m0 0h2m0 0h2m0 0h2m0 0h2m0 0h3m0 0h2m0 0h2m0 0h1m-24 1h1m0 0h2m0 0h2m0 0h2m0 0h1m0 0h1m0 0h1m0 0h1m0 0h1m0 0h1m0 0h1m0 0h2m0 0h2m0 0h1m0 0h1m0 0h1m0 0h1m0 0h1m0 0h1m-24 2h1m0 0h2m0 0h2m0 0h2m0 0h2m0 0h2m0 0h2m0 0h1m0 0h2m0 0h2m0 0h2m0 0h2m0 0h2m0 0h1m-25 2h1m0 0h1m0 0h1m0 0h1m0 0h1m0 0h1m0 0h1m0 0h1m0 0h1m0 0h1m0 0h1m0 0h1m0 0h2m0 0h1m0 0h1m0 0h1m0 0h1m0 0h1m0 0h1m0 0h1m0 0h1m0 0h1m0 0h1m0 0h1m-25 2h2m0 0h2m0 0h2m0 0h2m0 0h2m0 0h2m0 0h1m0 0h2m0 0h2m0 0h2m0 0h2m0 0h1m0 0h1m0 0h1m0 0h1m-275 23h2m0 0h3m-43.5-14h5.5m0 0h6m0 0h2m0 0h9m0 0h1m0 0h5m0 0h11m0 0h4m-31 5h7m0 0h3m0 0h5m0 0h1m0 0h11m0 0h4m0 9h3m0 0h1m0 0h6m0 0h2m0 0h6m0 0h3m0 0h6m0 0h1m0 0h4m0 0h4m0 0h3m0 0h6m-45-16h5m0 0h1m0 0h9m0 0h1m0 0h5m0 0h4m0 0h1m0 0h5m0 0h7m0 0h7m-45 7h3m0 0h3m0 0h2m0 0h8m0 0h5m0 0h4m0 0h1m0 0h5m0 0h1m0 0h5m0 0h1m0 0h7m-45 5h3m0 0h1m0 0h4m0 0h4m0 0h4m0 0h2m0 0h8m0 0h2m0 0h4m0 0h4m0 0h1m0 0h8m0 4h6m0 0h1m0 0h5m0 0h3m0 0h3m0 0h3m0 0h4m0 0h4m0 0h1m-30-16h4m0 0h2m0 0h4m0 0h3m0 0h4m0 0h3m0 0h5m0 0h2m0 0h3m-30 6h4m0 0h2m0 0h4m0 0h3m0 0h4m0 0h3m0 0h5m0 0h1m0 0h4m-30 5h6m0 0h6m0 0h1m0 0h5m0 0h2m0 0h5m0 0h1m0 0h4m0 5h2m0 0h4m0 0h4m0 0h3m0 0h1m0 0h3m0 0h4m0 0h3m0 0h1m0 0h3m0 0h3m0 0h1m-32-18h4m0 0h3m0 0h1m0 0h3m0 0h1m0 0h3m0 0h3m0 0h1m0 0h2m0 0h2m0 0h2m0 0h1m0 0h3m0 0h1m0 0h2m-32 3h2m0 0h2m0 0h2m0 0h2m0 0h2m0 0h2m0 0h2m0 0h1m0 0h2m0 0h2m0 0h1m0 0h3m0 0h1m0 0h2m0 0h2m0 0h2m0 0h2m-32 3h2m0 0h1m0 0h3m0 0h1m0 0h3m0 0h1m0 0h3m0 0h1m0 0h2m0 0h2m0 0h1m0 0h3m0 0h1m0 0h3m0 0h1m0 0h2m0 0h2m-32 4h3m0 0h4m0 0h4m0 0h4m0 0h4m0 0h3m0 0h1m0 0h3m0 0h1m0 0h3m0 0h2m-32 3h3m0 0h4m0 0h3m0 0h1m0 0h3m0 0h1m0 0h3m0 0h1m0 0h2m0 0h1m0 0h3m0 0h1m0 0h3m0 0h1m0 0h2m-32 3h2m0 0h1m0 0h3m0 0h1m0 0h3m0 0h4m0 0h3m0 0h1m0 0h3m0 0h3m0 0h1m0 0h3m0 0h1m0 0h3m0 2h2m0 0h1m0 0h2m0 0h1m0 0h3m0 0h1m0 0h2m0 0h1m0 0h2m0 0h2m0 0h2m0 0h2m0 0h1m0 0h3m-25-18h3m0 0h3m0 0h1m0 0h3m0 0h3m0 0h1m0 0h3m0 0h4m0 0h4m-25 3h3m0 0h3m0 0h1m0 0h3m0 0h3m0 0h1m0 0h3m0 0h3m0 0h1m0 0h4m-25 2h2m0 0h1m0 0h2m0 0h1m0 0h2m0 0h2m0 0h2m0 0h2m0 0h2m0 0h1m0 0h2m0 0h1m0 0h2m0 0h3m-25 4h2m0 0h1m0 0h2m0 0h1m0 0h2m0 0h2m0 0h2m0 0h1m0 0h3m0 0h3m0 0h1m0 0h2m0 0h3m-25 3h2m0 0h1m0 0h3m0 0h3m0 0h1m0 0h3m0 0h3m0 0h4m0 0h5m-25 2h2m0 0h1m0 0h3m0 0h3m0 0h1m0 0h3m0 0h3m0 0h1m0 0h3m0 0h1m0 0h4m0 4h1m0 0h3m0 0h3m0 0h2m0 0h1m0 0h2m0 0h3m0 0h2m0 0h3m0 0h2m0 0h1m0 0h2m0 0h1m0 0h2m0 0h2m0 0h1m0 0h2m0 0h3m0 0h1m0 0h2m-39-19h1m0 0h1m0 0h2m0 0h3m0 0h2m0 0h1m0 0h2m0 0h1m0 0h1m0 0h2m0 0h1m0 0h2m0 0h1m0 0h2m0 0h1m0 0h1m0 0h1m0 0h2m0 0h1m0 0h1m0 0h2m0 0h1m0 0h2m0 0h1m0 0h2m0 0h1m0 0h1m-39 2h1m0 0h1m0 0h2m0 0h3m0 0h2m0 0h1m0 0h2m0 0h2m0 0h1m0 0h2m0 0h3m0 0h2m0 0h1m0 0h2m0 0h3m0 0h2m0 0h1m0 0h2m0 0h1m0 0h2m0 0h1m0 0h2m-39 3h1m0 0h1m0 0h2m0 0h2m0 0h1m0 0h2m0 0h1m0 0h2m0 0h3m0 0h2m0 0h3m0 0h2m0 0h1m0 0h2m0 0h3m0 0h2m0 0h1m0 0h2m0 0h1m0 0h2m0 0h1m0 0h2m-39 2h1m0 0h1m0 0h2m0 0h1m0 0h1m0 0h1m0 0h2m0 0h1m0 0h2m0 0h1m0 0h2m0 0h2m0 0h1m0 0h2m0 0h3m0 0h2m0 0h1m0 0h2m0 0h1m0 0h2m0 0h1m0 0h2m0 0h3m0 0h2m-39 2h2m0 0h3m0 0h2m0 0h3m0 0h3m0 0h2m0 0h1m0 0h2m0 0h2m0 0h2m0 0h1m0 0h1m0 0h2m0 0h1m0 0h2m0 0h3m0 0h2m0 0h1m0 0h2m0 0h1m0 0h1m-39 2h1m0 0h1m0 0h1m0 0h2m0 0h1m0 0h1m0 0h2m0 0h1m0 0h2m0 0h1m0 0h2m0 0h1m0 0h1m0 0h1m0 0h2m0 0h2m0 0h1m0 0h1m0 0h2m0 0h1m0 0h2m0 0h3m0 0h2m0 0h1m0 0h2m0 0h1m0 0h1m-39 2h1m0 0h2m0 0h1m0 0h2m0 0h1m0 0h2m0 0h1m0 0h2m0 0h3m0 0h2m0 0h1m0 0h2m0 0h3m0 0h3m0 0h2m0 0h1m0 0h2m0 0h1m0 0h1m0 0h1m0 0h2m0 0h1m0 0h2m-39 3h1m0 0h1m0 0h2m0 0h1m0 0h2m0 0h3m0 0h2m0 0h1m0 0h2m0 0h1m0 0h2m0 0h2m0 0h1m0 0h2m0 0h3m0 0h2m0 0h3m0 0h2m0 0h1m0 0h2m0 0h3m-39 2h1m0 0h1m0 0h2m0 0h1m0 0h2m0 0h3m0 0h2m0 0h1m0 0h2m0 0h1m0 0h1m0 0h1m0 0h2m0 0h1m0 0h2m0 0h3m0 0h2m0 0h3m0 0h2m0 0h1m0 0h2m0 0h3m0 1h1m0 0h1m0 0h1m0 0h1m0 0h1m0 0h1m0 0h1m0 0h2m0 0h1m0 0h1m0 0h1m0 0h1m0 0h2m0 0h2m0 0h2m0 0h2m0 0h2m0 0h1m0 0h1m0 0h1m0 0h1m-27-20h2m0 0h2m0 0h2m0 0h2m0 0h2m0 0h2m0 0h2m0 0h3m0 0h1m0 0h1m0 0h2m0 0h2m0 0h1m0 0h1m0 0h1m0 0h1m-27 2h1m0 0h1m0 0h1m0 0h1m0 0h1m0 0h1m0 0h1m0 0h1m0 0h1m0 0h1m0 0h1m0 0h1m0 0h1m0 0h1m0 0h1m0 0h2m0 0h1m0 0h2m0 0h1m0 0h1m0 0h1m0 0h1m0 0h1m0 0h2m-27 2h1m0 0h1m0 0h1m0 0h1m0 0h1m0 0h1m0 0h1m0 0h1m0 0h1m0 0h2m0 0h2m0 0h2m0 0h2m0 0h1m0 0h1m0 0h1m0 0h1m0 0h1m0 0h1m0 0h1m0 0h1m0 0h2m-27 2h2m0 0h2m0 0h1m0 0h1m0 0h1m0 0h1m0 0h1m0 0h2m0 0h2m0 0h1m0 0h1m0 0h1m0 0h1m0 0h1m0 0h1m0 0h1m0 0h1m0 0h2m0 0h2m0 0h2m-27 2h2m0 0h2m0 0h1m0 0h1m0 0h1m0 0h1m0 0h1m0 0h1m0 0h1m0 0h1m0 0h2m0 0h1m0 0h1m0 0h1m0 0h1m0 0h1m0 0h1m0 0h1m0 0h2m0 0h2m0 0h2m-27 2h2m0 0h2m0 0h2m0 0h2m0 0h1m0 0h1m0 0h1m0 0h1m0 0h1m0 0h2m0 0h1m0 0h1m0 0h1m0 0h1m0 0h1m0 0h1m0 0h1m0 0h1m0 0h2m0 0h2m-27 1h1m0 0h1m0 0h1m0 0h1m0 0h2m0 0h2m0 0h1m0 0h1m0 0h1m0 0h1m0 0h1m0 0h2m0 0h1m0 0h1m0 0h1m0 0h1m0 0h1m0 0h2m0 0h2m0 0h1m0 0h1m0 0h1m-27 2h1m0 0h1m0 0h1m0 0h1m0 0h2m0 0h2m0 0h2m0 0h1m0 0h1m0 0h1m0 0h2m0 0h2m0 0h2m0 0h1m0 0h2m0 0h2m0 0h2m0 0h1m-27 2h1m0 0h1m0 0h1m0 0h1m0 0h1m0 0h1m0 0h2m0 0h2m0 0h1m0 0h1m0 0h1m0 0h1m0 0h1m0 0h1m0 0h1m0 0h1m0 0h2m0 0h2m0 0h2m0 0h1m0 0h2m-27 1h1m0 0h1m0 0h1m0 0h1m0 0h1m0 0h2m0 0h1m0 0h1m0 0h1m0 0h1m0 0h1m0 0h1m0 0h1m0 0h1m0 0h1m0 0h2m0 0h2m0 0h2m0 0h2m0 0h1m0 0h1m0 0h1m-27 2h2m0 0h2m0 0h2m0 0h1m0 0h2m0 0h1m0 0h1m0 0h1m0 0h1m0 0h2m0 0h2m0 0h1m0 0h1m0 0h1m0 0h1m0 0h1m0 0h1m0 0h1m0 0h1m0 0h1m0 0h1m0 2h1m0 0h1m0 0h1m0 0h1m0 0h1m0 0h1m0 0h1m0 0h1m0 0h1m0 0h2m0 0h2m0 0h2m0 0h1m0 0h1m0 0h1m0 0h2m0 0h2m0 0h2m0 0h2m0 0h1m-27-20h2m0 0h2m0 0h2m0 0h1m0 0h1m0 0h1m0 0h1m0 0h1m0 0h1m0 0h1m0 0h1m0 0h1m0 0h2m0 0h1m0 0h2m0 0h1m0 0h1m0 0h1m0 0h1m0 0h1m0 0h2m-27 2h1m0 0h1m0 0h2m0 0h2m0 0h2m0 0h2m0 0h2m0 0h2m0 0h2m0 0h1m0 0h1m0 0h3m0 0h2m0 0h2m0 0h2m-27 2h1m0 0h1m0 0h2m0 0h2m0 0h2m0 0h2m0 0h2m0 0h2m0 0h1m0 0h1m0 0h1m0 0h1m0 0h1m0 0h2m0 0h2m0 0h2m0 0h2m-27 2h2m0 0h2m0 0h2m0 0h2m0 0h2m0 0h2m0 0h2m0 0h1m0 0h1m0 0h1m0 0h1m0 0h1m0 0h1m0 0h1m0 0h1m0 0h1m0 0h2m0 0h2m-27 2h2m0 0h2m0 0h2m0 0h2m0 0h2m0 0h1m0 0h1m0 0h1m0 0h1m0 0h1m0 0h1m0 0h1m0 0h1m0 0h1m0 0h1m0 0h1m0 0h1m0 0h1m0 0h2m0 0h2m-27 1h2m0 0h2m0 0h2m0 0h2m0 0h2m0 0h1m0 0h1m0 0h1m0 0h1m0 0h1m0 0h1m0 0h1m0 0h2m0 0h2m0 0h2m0 0h2m0 0h1m0 0h1m-27 2h1m0 0h1m0 0h1m0 0h1m0 0h2m0 0h2m0 0h2m0 0h2m0 0h1m0 0h1m0 0h1m0 0h1m0 0h1m0 0h2m0 0h2m0 0h2m0 0h2m0 0h1m0 0h1m-27 2h1m0 0h1m0 0h1m0 0h1m0 0h2m0 0h2m0 0h1m0 0h1m0 0h1m0 0h2m0 0h2m0 0h2m0 0h2m0 0h1m0 0h1m0 0h1m0 0h1m0 0h1m0 0h1m0 0h2m-27 2h1m0 0h1m0 0h1m0 0h1m0 0h2m0 0h1m0 0h2m0 0h1m0 0h1m0 0h2m0 0h1m0 0h1m0 0h1m0 0h1m0 0h1m0 0h2m0 0h2m0 0h2m0 0h1m0 0h2m-27 2h1m0 0h1m0 0h1m0 0h1m0 0h2m0 0h1m0 0h1m0 0h2m0 0h1m0 0h1m0 0h2m0 0h1m0 0h1m0 0h1m0 0h1m0 0h1m0 0h1m0 0h1m0 0h1m0 0h1m0 0h2m0 0h1m0 0h1m-27 1h2m0 0h2m0 0h1m0 0h1m0 0h1m0 0h1m0 0h1m0 0h1m0 0h1m0 0h1m0 0h1m0 0h2m0 0h1m0 0h1m0 0h1m0 0h1m0 0h1m0 0h1m0 0h1m0 0h1m0 0h1m0 0h2m0 0h1m0 2h2m0 0h2m0 0h2m0 0h3m0 0h1m-10-19h1m0 0h2m0 0h2m0 0h2m0 0h2m0 0h1m0 0h2m0 0h2m0 0h1m0 0h1m0 0h1m0 0h1m0 0h1m0 0h2m0 0h1m0 0h1m0 0h1m0 0h1m0 0h1m0 0h1m0 0h1m0 0h1m0 0h1m0 0h2m0 0h2m0 0h3m-37 2h1m0 0h2m0 0h2m0 0h2m0 0h1m0 0h2m0 0h2m0 0h2m0 0h1m0 0h1m0 0h1m0 0h1m0 0h1m0 0h1m0 0h2m0 0h1m0 0h1m0 0h1m0 0h1m0 0h1m0 0h1m0 0h1m0 0h1m0 0h1m0 0h1m0 0h1m0 0h1m0 0h1m0 0h2m-37 1h1m0 0h2m0 0h1m0 0h1m0 0h1m0 0h2m0 0h2m0 0h2m0 0h2m0 0h2m0 0h1m0 0h1m0 0h1m0 0h1m0 0h1m0 0h2m0 0h2m0 0h2m0 0h2m0 0h2m0 0h2m0 0h1m-34 2h1m0 0h2m0 0h1m0 0h1m0 0h1m0 0h1m0 0h1m0 0h1m0 0h1m0 0h2m0 0h2m0 0h2m0 0h1m0 0h1m0 0h1m0 0h2m0 0h2m0 0h2m0 0h2m0 0h2m0 0h1m0 0h1m0 0h1m-32 2h1m0 0h2m0 0h2m0 0h2m0 0h2m0 0h1m0 0h2m0 0h2m0 0h2m0 0h2m0 0h2m0 0h1m0 0h1m0 0h1m0 0h2m0 0h2m0 0h2m0 0h1m-30 2h1m0 0h1m0 0h1m0 0h1m0 0h1m0 0h1m0 0h1m0 0h1m0 0h2m0 0h2m0 0h2m0 0h2m0 0h1m0 0h1m0 0h1m0 0h1m0 0h1m0 0h1m0 0h1.5m-23.5 2h1m0 0h1m0 0h1m0 0h1m0 0h2m0 0h2m0 0h2m0 0h2m0 0h2m0 0h3m0 0h2m0 0h2m-21 1h1m0 0h1m0 0h1m0 0h2m0 0h1m0 0h1m0 0h1m0 0h1m0 0h1m0 0h1m0 0h1m0 0h1m0 0h1m0 0h1m0 0h2m0 0h2m0 0h1m-20 2h2m0 0h2m0 0h1m0 0h1m0 0h1m0 0h2m0 0h2m0 0h2m0 0h2m0 0h2m-17 2h2m0 0h2m0 0h2m0 0h2m0 0h1m0 0h1m0 0h1m0 0h1m0 0h1m0 0h2m-15 2h2m0 0h2m0 0h2m0 0h2m0 0h1m0 0h1m0 0h1m0 0h1m25-19h1m0 0h1m0 0h1m0 0h1m0 0h1m0 0h1m0 0h1m0 0h1m-8 2h1m0 0h2m0 0h1.5m-239.5 24h5m0 0h1m0 0h4.5m14.5 0h2m0 0h6m0 0h3m-1.5 7h1.5m30.5 13h1.5m0 0h1m0 0h2m0 0h1m0 0h3m0 0h1m-40-22h1m0 0h2m0 0h2m0 0h2m0 0h2m0 0h2m0 0h2m0 0h1m0 0h3m0 0h1m0 0h2m0 0h2m0 0h2m0 0h1m0 0h3m0 0h1m0 0h2m0 0h2m0 0h2m0 0h2m0 0h1m0 0h2m-40 3h1m0 0h1m0 0h3m0 0h1m0 0h3m0 0h4m0 0h1m0 0h3m0 0h1m0 0h2m0 0h2m0 0h2m0 0h2m0 0h2m0 0h2m0 0h1m0 0h2m0 0h2m0 0h2m0 0h1m0 0h2m-40 3h2m0 0h3m0 0h1m0 0h3m0 0h4m0 0h1m0 0h3m0 0h1m0 0h2m0 0h2m0 0h2m0 0h2m0 0h2m0 0h2m0 0h1m0 0h2m0 0h2m0 0h2m0 0h3m-40 4h2m0 0h1m0 0h2m0 0h2m0 0h2m0 0h2m0 0h2m0 0h1m0 0h3m0 0h1m0 0h2m0 0h1m0 0h3m0 0h1m0 0h3m0 0h1m0 0h2m0 0h1m0 0h3m0 0h1m0 0h4m-39.5 3h1.5m0 0h1m0 0h3m0 0h1m0 0h3m0 0h1m0 0h3m0 0h4m0 0h3m0 0h1m0 0h3m0 0h4m0 0h3m0 0h1m0 0h3m0 0h1m0 0h3m-36.5 3h2.5m0 0h1m0 0h3m0 0h1m0 0h2.5m12 0h1.5m0 0h2m0 0h1m0 0h3m0 0h2m0 0h2m0 0h3m-30 3h1m18 0h1m0 0h3m0 0h2m0 0h1m0 0h4m0 3h2m0 0h1m0 0h3m0 0h3m0 0h1m0 0h2m0 0h1m0 0h2m0 0h1m0 0h3m0 0h1m0 0h2m0 0h1.5m-23.5-22h2m0 0h1m0 0h2m0 0h1m0 0h2m0 0h1m0 0h3m0 0h1m0 0h2m0 0h1m0 0h3m0 0h4m0 0h3m0 0h4m0 0h3m0 0h1m0 0h2m0 0h2m-38 3h2m0 0h1m0 0h2m0 0h1m0 0h2m0 0h1m0 0h3m0 0h1m0 0h2m0 0h1m0 0h3m0 0h1m0 0h3m0 0h3m0 0h1m0 0h3m0 0h4m0 0h4m-38 3h2m0 0h1m0 0h2m0 0h1m0 0h3m0 0h4m0 0h3m0 0h3m0 0h1m0 0h3m0 0h3m0 0h1m0 0h2m0 0h1m0 0h2m0 0h2m0 0h2m0 0h2m-38 3h2m0 0h3m0 0h4m0 0h3m0 0h1m0 0h3m0 0h3m0 0h4m0 0h3m0 0h3m0 0h1m0 0h2m0 0h1m0 0h3m0 0h2m-38 3h2m0 0h3m0 0h1m0 0h3m0 0h3m0 0h1m0 0h3m0 0h1m0 0h2m0 0h2m0 0h2m0 0h2m0 0h1m0 0h3m0 0h1m0 0h2m0 0h1m0 0h3m0 0h2m-38 3h2m0 0h3m0 0h1m0 0h3m0 0h3m0 0h1m0 0h2m0 0h2m0 0h2m0 0h2m0 0h2m0 0h2m0 0h1m0 0h3m0 0h1m0 0h2m0 0h1m0 0h3m-36 3h2m0 0h1m0 0h2m0 0h1m0 0h3m0 0h1m0 0h2m0 0h1m0 0h2m0 0h1m0 0h3m0 0h1m0 0h3m0 0h1m0 0h2m0 0h1m0 0h3m8-19h2m0 0h1m0 0h2m0 0h1m0 0h2m0 0h2m0 0h1m0 0h2m0 0h3m0 0h2m0 0h1m0 0h2m0 0h2m0 0h1m0 0h3m-27 2h2m0 0h2m0 0h1m0 0h2m0 0h1m0 0h1m0 0h1m0 0h2m0 0h1m0 0h2m0 0h1m0 0h1m0 0h1m0 0h2m0 0h1m0 0h2m0 0h3m0 0h1m-27 2h2m0 0h2m0 0h1m0 0h2m0 0h1m0 0h1m0 0h2m0 0h1m0 0h1m0 0h2m0 0h1m0 0h1m0 0h1m0 0h2m0 0h1m0 0h2m0 0h1m0 0h2m0 0h1m-27 3h1m0 0h1m0 0h2m0 0h1m0 0h2m0 0h1m0 0h2m0 0h1m0 0h2m0 0h3m0 0h2m0 0h3m0 0h3m0 0h3m-27 2h1m0 0h1m0 0h2m0 0h3m0 0h3m0 0h2m0 0h1m0 0h2m0 0h1m0 0h2m0 0h3m0 0h3m0 0h3m-27 2h2m0 0h2m0 0h1m0 0h2m0 0h3m0 0h2m0 0h1m0 0h2m0 0h1m0 0h2m0 0h1m0 0h2m0 0h1m0 0h2m0 0h3m-27 2h2m0 0h3m0 0h2m0 0h1m0 0h2m0 0h1m0 0h2m0 0h1m0 0h2m0 0h1m0 0h2m0 0h3m0 0h2m0 0h1m0 0h2m-25 3h3m0 0h2m0 0h1m0 0h2m0 0h1m0 0h2m0 0h1m0 0h1m0 0h2m0 0h1m0 0h1m0 0h2m0 0h1m0 0h1m0 0h2m0 0h2m-12 2h3m0 0h2m0 0h1m0 0h2m0 0h3m0 0h1m-2.5 2h1.5m0 0h1m0-21h1m0 0h1m0 0h2m0 0h2m0 0h2m0 0h2m0 0h2m0 0h2m0 0h2m0 0h2m0 0h2m0 0h2m0 0h1m0 0h1m0 0h1m0 0h2m0 0h2m0 0h2m0 0h2m-33 2h1m0 0h1m0 0h2m0 0h2m0 0h2m0 0h2m0 0h2m0 0h2m0 0h1m0 0h1m0 0h1m0 0h1m0 0h1m0 0h1m0 0h1m0 0h2m0 0h2m0 0h2m0 0h1m0 0h1m0 0h1m0 0h1m0 0h1m0 0h1m-33 2h1m0 0h1m0 0h2m0 0h2m0 0h2m0 0h2m0 0h2m0 0h2m0 0h1m0 0h2m0 0h2m0 0h2m0 0h2m0 0h2m0 0h2m0 0h1m0 0h2m0 0h2m0 0h1m-33 2h2m0 0h2m0 0h2m0 0h2m0 0h2m0 0h1m0 0h1m0 0h1m0 0h1m0 0h1m0 0h2m0 0h1m0 0h1m0 0h1m0 0h1m0 0h1m0 0h1m0 0h1m0 0h1m0 0h1m0 0h1m0 0h1m0 0h2m0 0h2m0 0h1m-33 1h1m0 0h1m0 0h2m0 0h1m0 0h1m0 0h1m0 0h1m0 0h1m0 0h2m0 0h1m0 0h1m0 0h1m0 0h1m0 0h1m0 0h2m0 0h2m0 0h1m0 0h1m0 0h1m0 0h1m0 0h1m0 0h1m0 0h1m0 0h1m0 0h1m0 0h1m0 0h1m0 0h2m-33 2h1m0 0h3m0 0h1m0 0h1m0 0h1m0 0h1m0 0h1m0 0h1m0 0h2m0 0h2m0 0h2m0 0h1m0 0h1m0 0h1m0 0h2m0 0h2m0 0h2m0 0h1m0 0h1m0 0h1m0 0h1m0 0h1m0 0h1m0 0h1m0 0h1m-33 2h1m0 0h1m0 0h2m0 0h2m0 0h2m0 0h2m0 0h2m0 0h2m0 0h1m0 0h2m0 0h2m0 0h2m0 0h2m0 0h2m0 0h1m0 0h1m0 0h1m0 0h2m0 0h2m0 0h1m-33 2h2m0 0h2m26 0h1m0 0h1m0 0h1m-33 2h2m0 0h1m-3 2h2m0 0h1.5m-3.5 2h1m0 0h1m0 0h1m0 0h1.5m-4.5 1h1m0 0h1m0 0h1m0 0h1m0 0h1m47 4h2m0 0h3m-24-24h1m0 0h1m0 0h1m0 0h1m0 0h1m0 0h1m0 0h2m0 0h2m0 0h1m0 0h1m0 0h1m0 0h1m0 0h1m0 0h2m0 0h2m0 0h2m0 0h1m0 0h1m0 0h1m-24 2h1m0 0h1m0 0h2m0 0h2m0 0h2m0 0h2m0 0h1m0 0h2m0 0h2m0 0h2m0 0h2m0 0h2m0 0h1m0 0h2m-24 2h1m0 0h2m0 0h1m0 0h1m0 0h1m0 0h1m0 0h1m0 0h2m0 0h2m0 0h1m0 0h1m0 0h1m0 0h2m0 0h2m0 0h2m0 0h2m0 0h1m-24 2h1m0 0h2m0 0h1m0 0h1m0 0h1m0 0h1m0 0h1m0 0h2m0 0h1m0 0h1m0 0h1m0 0h1m0 0h3m0 0h2m0 0h2m0 0h2m0 0h1m-24 2h1m0 0h2m0 0h1m0 0h2m0 0h2m0 0h2m0 0h1m0 0h1m0 0h1m0 0h1m0 0h2m0 0h1m0 0h2m0 0h2m0 0h2m0 0h1m-24 1h1m0 0h1m0 0h1m0 0h1m0 0h2m0 0h2m0 0h2m0 0h2m0 0h2m0 0h2m0 0h3m0 0h2m0 0h2m0 0h1m-24 2h1m0 0h1m0 0h1m0 0h1m0 0h1m0 0h1m0 0h1m0 0h1m0 0h1m0 0h1m0 0h1m0 0h1m0 0h1m0 0h1m0 0h1m0 0h1m0 0h2m0 0h1m0 0h1m0 0h1m0 0h1m0 0h1m0 0h1m-24 2h1m0 0h1m0 0h1m0 0h1m0 0h1m0 0h1m0 0h1m0 0h2m0 0h2m0 0h1m0 0h1m0 0h2m0 0h1m0 0h2m0 0h2m0 0h2m0 0h1m0 0h1m-24 2h1m0 0h1m0 0h2m0 0h1.5m4.5 0h1m0 0h1m0 0h2m0 0h1m0 0h1m0 0h1m0 0h1m0 0h1m0 0h1m0 0h1m0 0h2m0 0h1m-10 2h1m0 0h2m0 0h2m0 0h2m0 0h2m0 0h1m-8.5 2h1.5m0 0h2m0 0h2m0 0h2m0 0h1m-7 1h1m0 0h1m0 0h2m0 0h2m0 0h1m-5 2h2m0 0h2m0 0h1m0 2h2m0 0h2m0 0h2m0 0h2m0 0h1m-9-24h2m0 0h2m0 0h2m0 0h1m-7 2h2m0 0h2m0 0h2m-6 2h2m0 0h2m0 0h1m-5 2h1m0 0h1m0 0h2m-4 2h1m0 0h1m0 0h2m-4 1h2m0 0h2m-4 2h2m0 0h2m-4 2h2m0 0h2m-4 2h2m0 0h2m0 0h1m-5 2h1m0 0h1m0 0h2m0 0h2m-6 2h1m0 0h1m0 0h2m0 0h1m0 0h1m0 0h1m-7 2h2m0 0h2m0 0h1m0 0h1m0 0h1m-137 5h1m0 0h2m0 0h1m0 0h3m0 0h1m0 0h2m0 0h1m0 0h3m0 0h3m-15 3h2m0 0h4m0 0h3m0 0h1m0 0h2m0 0h1m0 0h2m-12 3h3m0 0h4m0 0h3m0 0h2m-10.5 3h1.5m0 0h4m0 0h3m0 0h1m0 0h1m-9 3h4m0 0h3m0 0h1m0 0h1m-7 3h1m0 0h1m0 0h3m0 0h2m0-15h2m0 0h1m0 0h2m0 0h1m0 0h3m0 0h1m-10 3h2m0 0h1m0 0h2m0 0h1m-6 3h3m0 0h1m-4 4h3m-3 2h3m-3 3h2m0 0h2m104.5-15h1.5m0 0h1m0 0h2m0 0h2m0 0h1m0 0h3m-10.5 3h2.5m0 0h2m0 0h1m0 0h2m0 0h1m0 0h2m-10 2h2m0 0h1m0 0h2m0 0h1m0 0h2m0 0h2m-10 2h1m0 0h2m0 0h1m0 0h2m0 0h1m0 0h3m-8 3h2m0 0h3m0 0h3m-7 2h1m0 0h2m0 0h1m0 0h2m0 0h1m-6 2h2m0 0h3m0 0h1m-4 3h2m0 0h1m0 0h1m-2 2h2m0 3h1m0 0h2m0 0h2m0 0h1m-6-22h2m0 0h2m-4 2h2m0 0h2m-4 3h2m0 0h1m0 0h1m0 0h1m-5 2h3m0 0h2m0 0h1m-6 2h1m0 0h2m0 0h1m0 0h2m0 0h1m-7 3h1m0 0h2m0 0h1m0 0h1m0 0h3m-8 2h2m0 0h1m0 0h2m0 0h2.5m-7.5 3h2m0 0h1m0 0h2m0 0h1m0 0h1.5m-7.5 2h3m0 0h3m0 0h1m-310-159.5v1.5m0 0v4m0 0v1m0 0v6m-6-13.5v2.5m0 0v2m3 2v7m38-18.5v1.5m0 0v1m0 0v5m0 0v1m0 0v4m0 0v6m-25-18.5v2.5m5-2.5v2.5m7-2.5v2.5m5-2.5v2.5m-24 3.5v1.5m5-5v1m6-1v5m6-5v5m5-5v5m5-5v5m-27 0v5m5-3.5v3.5m5-5v5m5-5v5m6-5v5m5-5v5m-26 0v6m6-6v6m5-6v6m6-6v6m5-6v6m5-6v6m49-18.5v1.5m0 0v4m0 0v3m0 0v2m0 0v2m0 0v6m-37-18.5v1.5m6-1.5v1.5m9-1.5v1.5m6-1.5v1.5m6-1.5v1.5m-30 0v7m10-7v7m5-7v7m6-7v7m9-7v7m6-7v7m-36 0v4m7-4v4m6-4v4m8-4v4m6-4v4m7-4v4m-32 0v6m9-6v6m6-6v6m5-6v6m9-6v6m53-18.5v4.5m0 0v1m0 0v5m0 0v5m0 0v3m-38-18.5v5.5m5-5.5v5.5m4-5.5v5.5m12-5.5v5.5m6-5.5v5.5m-25 0v5m8-5v5m7-5v5m5-5v5m10-5v5m-32 0v8m11-8v8m9-8v8m6-8v8m39-18.5v2.5m0 0v2m0 0v2m0 0v4m0 0v4m0 0v1m0 0v3m-24-18.5v4.5m7-4.5v4.5m7-4.5v4.5m-12 0v6m7-6v6m7-6v6m-13 0v5m7-5v5m8-5v5m-16 0v3m7-3v3m6-3v3m34-18.5v1.5m0 0v1m0 0v4m0 0v4m0 0v4m0 0v4m-22-18.5v2.5m5-2.5v2.5m6-2.5v2.5m5-2.5v2.5m-14 0v4m5-4v4m5-4v4m5-4v4m-18 0v4m5-4v4m6-4v4m5-4v4m-14 0v4m5-4v4m5-4v4m6-4v4m-18 0v4m5-4v4m5-4v4m5-4v4m5-4v4m37-16v3m0 0v1m0 0v3m0 0v1m0 0v4m0 0v4m-29-18.5v1.5m4-1.5v1.5m5-1.5v1.5m5-1.5v1.5m5-1.5v1.5m5-4v4m-26 0v5m5-5v5m5-5v5m4-5v5m5-5v5m5-5v5m-22 0v4m5-4v4m4-4v4m5-4v4m4-4v4m5-4v4m-24 0v4m4-4v4m5-4v4m6-4v4m5-4v4m4-4v4m4-4v4m-28 0v4m5-4v4m5-4v4m5-4v4m4-4v4m5-4v4m31-12v1m0 0v2m0 5.5v3.5m-23-15.5v2.5m5-2.5v2.5m5-2.5v2.5m4-1.5v1.5m-12 0v4m5-4v4m5-4v4m4-4v4m-16 0v5m6-5v5m5-5v5m4-5v5m5-5v2m-19 3v4m5-4v4m5-4v4m5-3v3m38-1.5v1.5m-29-12v1m3-1v1m-4 0v2m14 3.5v1.5m3-2.5v1m-16 3.5v2m4-2v2m4-3v3m4-4v4m3-4v4m5-2.5v2.5m4-1v1m7-2v2m4-2v2m4-2.5v2.5m4-1.5v1.5m109-7v2m4-1.5v1.5m4-1.5v1.5m-12 2v3m4-5v5m5-5v5m-375 0v4m0 0v2m0 0v3m0 0v5m0 0v5m0 0v2m0 0v2m0 0v3m0 0v3m-16-29v4m5-4v4m6-4v4m-12 0v5m6-5v5m5-5v5m-11 0v5m5-5v5m6-5v5m-14 0v5m5-5v5m6-5v5m6-5v5m-18 0v4m6-4v4m5-4v4m6-4v4m-19 0v6m6-6v6m6-6v6m5-6v6m58-29v6m0 0v1m0 0v7m0 0v7m0 0v5m0 0v3m-47-29v6m9-6v6m8-6v6m10-6v6m7-6v6m9-6v6m-42 0v8m9-8v8m10-8v8m10-8v8m8-8v8m-37 0v7m7-7v7m6-7v7m5-7v7m9-7v7m10-7v7m-40 0v5m7-5v5m6-5v5m10-5v5m5-5v5m6-5v5m4-5v5m8-5v5m-46 0v3m7-3v3m8-3v3m9-3v3m5-3v3m4-3v3m5-3v3m6-3v3m59-29v4m0 0v3m0 0v1m0 0v4m0 0v2m0 0v2m0 0v4m0 0v1m0 0v3m0 0v5m-49-29v7m5-7v7m7-7v7m6-7v7m9-7v7m7-7v7m8-7v7m-42 0v7m11-7v7m11-7v7m7-7v7m8-7v7m-37 0v7m4-7v7m12-7v7m10-7v7m7-7v7m8-7v7m-38 0v8m10-8v8m6-8v8m4-8v8m8-8v8m7-8v8m47-29v4m0 0v3m0 0v1m0 0v3m0 0v1m0 0v3m0 0v1m0 0v3m0 0v1m0 0v3m0 0v1m0 0v3m0 0v2m-33-29v4m4-4v4m5-4v4m5-4v4m5-4v4m5-4v4m5-4v4m-28 0v4m4-4v4m6-4v4m4-4v4m5-4v4m6-4v4m-26 0v4m5-4v4m5-4v4m5-4v4m5-4v4m5-4v4m5-4v4m-28 0v4m4-4v4m6-4v4m4-4v4m6-4v4m4-4v4m-26 0v4m5-4v4m5-4v4m5-4v4m4-4v4m5-4v4m5-4v4m-28 0v4m5-4v4m5-4v4m5-4v4m5-4v4m5-4v4m-26 0v5m6-5v5m4-5v5m5-5v5m5-5v5m5-5v5m5-5v5m30-29v4m0 0v3m0 0v1m0 0v3m0 0v1m0 0v3m0 0v1m0 0v3m0 0v1m0 0v3m0 0v4m0 0v2m-25-29v4m4-4v4m5-4v4m4-4v4m4-4v4m5-4v4m-22 0v3m5-3v3m4-3v3m5-3v3m4-3v3m5-3v3m-23 0v4m4-4v4m4-4v4m4-4v4m5-4v4m4-4v4m-20 0v4m4-4v4m4-4v4m4-4v4m4-4v4m4-4v4m-20 0v4m4-4v4m5-4v4m4-4v4m5-4v4m-18 0v4m3-4v4m5-4v4m4-4v4m5-4v4m5-4v4m-24 0v4m5-4v4m4-4v4m5-4v4m3-4v4m5-4v4m-19 0v2m4-2v2m4-2v2m5-2v2m5-2v2m35-29v3m0 0v1m0 0v2m0 0v2m0 0v1m0 0v3m0 0v3m0 0v1m0 0v2m0 0v2m0 0v1m0 0v2m0 0v3m0 0v1m0 0v2m-28-29v4m5-4v4m5-4v4m4-4v4m5-4v4m4-4v4m-22 0v4m4-4v4m4-4v4m5-4v4m4-4v4m5-4v4m-22 0v4m4-4v4m4-4v4m5-4v4m4-4v4m5-4v4m-22 0v4m4-4v4m5-4v4m5-4v4m5-4v4m4-4v4m-24 0v4m5-4v4m4-4v4m5-4v4m5-4v4m4-4v4m-23 0v3m4-3v3m5-3v3m5-3v3m4-3v3m4-3v3m-21 0v4m4-4v4m5-4v4m4-4v4m4-4v4m4-4v4m-21 0v2m4-2v2m5-2v2m4-2v2m4-2v2m5-2v2m29-29v3m0 0v2m0 0v1m0 0v1m0 0v2m0 0v1m0 0v2m0 0v2m0 0v1m0 0v1m0 0v2m0 0v1m0 0v2m0 0v2m0 0v1m0 0v2m0 0v3m-23-29v3m4-3v3m3-3v3m4-3v3m3-3v3m4-3v3m3-3v3m-20 0v3m4-3v3m3-3v3m4-3v3m3-3v3m4-3v3m-18 0v3m3-3v3m4-3v3m3-3v3m4-3v3m3-3v3m3-3v3m-20 0v3m4-3v3m3-3v3m3-3v3m3-3v3m3-3v3m4-3v3m-21 0v3m4-3v3m3-3v3m3-3v3m3-3v3m4-3v3m3-3v3m-18 0v3m3-3v3m4-3v3m3-3v3m4-3v3m3-3v3m-17 0v3m3-3v3m3-3v3m3-3v3m4-3v3m4-3v3m3-3v3m-21 0v2m3-2v2m3-2v2m4-2v2m3-2v2m3-2v2m4-2v2m-19 0v3m3-3v3m3-3v3m4-3v3m4-3v3m3-3v3m-17 0v3m4-3v3m3-3v3m3-3v3m4-3v3m3-3v3m42-29v2.5m0 2.5v2m0 0v1m0 0v2m0 0v2m0 0v2m0 0v1m0 0v1m0 0v1m0 0v2m0 0v2m0 0v1m0 0v2m0 0v2m0 0v1m0 0v2m-36-29v3m3-3v3m2-3v3m4-3v3m2-3v3m3-3v3m3-3v3m2-3v3m4-3v3m3-3v2.5m3-2.5v1.5m2-1.5v2m3-2v2.5m-34 .5v2m2-2v2m3-2v2m3-2v2m3-2v2m2-2v2m3-2v2m3-2v1m-18 1v2m3-2v2m3-2v2m3-2v2m2-2v2m3-2v2m20-2v2m-35 0v3m3-3v3m3-3v3m2-3v3m3-3v3m3-3v1.5m18-1.5v3m3-3v3m-35 0v2m3-2v2m3-2v2m3-2v2m3-2v1.5m3-.5v1m12-1.5v1.5m3-2v2m3-2v2m-33 0v2m3-2v2m3-2v2m3-2v2m3-1v1m3-2v1.5m11-1.5v2m3-2v2m3-2v2m3-2v2m-34 0v2m3-2v2m2-2v2m3-2v2m3-2v2m2-2v2m12-2v2m3-2v2m3-2v2m3-2v2m-35 0v3m2-3v3m3-3v3m3-3v3m3-3v3m14-3v3m3-3v3m2-3v3m3-3v3m-32 0v2m2-2v2m3-2v2m3-2v2m3-2v2m11-2v1.5m4-1.5v2m2-2v2m3-2v2m3-2v2m-34 0v3m3-3v3m2-3v3m3-3v3m3-3v1m14-1v3m3-3v3m3-3v3m3-3v3m-34 0v2m3-2v2m3-2v2m3-2v2m16-2v2m3-2v2m4-2v2m-33 0v3m3-3v3m3-3v3m3-3v3m3-3v3m14-3v3m2-3v3m3-3v3m3-3v3m5-28v1.5m-1 3v2.5m3-1.5v1.5m-3 0v2m3-2v2m3-1.5v1.5m-6 0v2m3-2v2m3-2v2m-5 0v3m3-3v3m2-3v2.5m-6 .5v2m2-2v2m-2 0v2m6-1v1m3-2v2m-9 0v3m3-2.5v2.5m3-3v3m3-3v3m2-3v3m-10 0v2m3-2v2m2-2v2m3-2v2m-8 0v3m3-3v3m3-3v3m2-3v3m3-3v3m-11 0v2m2-2v2m3-2v2m3-2v1.5m58-17.5v3m0 0v2m0 0v1m0 0v2m0 0v2m0 0v1m0 0v2m0 0v1m0 0v1m0 0v3m-4-17v2m-2 0v3m3-3v3m-3 0v2m3-2v2m-10 2v1m3-1.5v1.5m3-3v3m3-3v3m-22 .5v2.5m3-2.5v2.5m3-2.5v2.5m3-3v3m3-3v3m3-3v3m4-3v3m2-3v3m3-3v3m-30 2.5v1.5m3-3.5v3.5m3-4v4m3-4v4m3-4v4m3-4v4m4-4v4m3-4v4m3-4v4m3-4v4m42-29v3m0 0v1m0 0v1m0 0v3m0 0v3m0 0v1m0 0v2m0 0v2m0 0v1.5m-2-17.5v3m-3 .5v1.5m3-2v2m-6 2v1m4-3v3m-32 2v1m3-1v1m3-1v1m3-1v1m3-1v1m3-1v1m4-1v1m3-1v1m3-3v3m3-3v3m4-3v3m-33 0v3m3-3v3m4-3v3m2-3v3m4-3v3m3-3v3m3-3v3m3-3v3m4-3v3m3-3v3m3-3v3m3-3v3m-33 0v2m3-2v2m4-2v2m3-2v2m3-2v2m3-2v2m3-2v2m3-2v2m3-2v2m4-2v2m3-2v2m-32 0v3m3-3v3m3-3v3m3-3v3m4-3v3m3-3v3m3-3v3m3-3v3m4-3v3m3-3v3m3-3v2.5m-32 .5v2m3-2v2m3-2v2m3-2v2m4-2v2m3-2v2m3-2v2m3-2v2m3-2v2m3-2v2m-29 0v3m3-3v3m4-3v3m3-3v3m3-3v3m4-3v3m3-3v3m3-3v3m4-3v3m-26 0v2m3-2v2m3-2v2m4-2v2m3-2v2m3-2v2m4-2v2m3-2v2m-24 0v3m3-3v3m3-3v3m3-3v3m4-3v3m3-3v3m3-3v3m3-3v3m3-3v3m3-3v1m12-27v4m5-4v4m-7 0v4m4-4v4m5-4v4m-7 0v4m5-4v4m5-4v4m4-2v1m-14 1v4m5-4v2.5m5-2.5v1m-378 16v4m0 0v4m0 0v1m0 0v3m0 0v5m0 0v4m0 0v2m-25-23v4m5-4v4m5-4v4m5-4v4m5-4v4m-15 0v4m4-4v4m5-4v4m5-4v4m-20 2.5v1.5m5-4v4m5-4v4m4-4v4m5-4v4m4-4v4m-23 0v3.5m5-3.5v5m4-5v5m5-5v5m5-5v5m5-5v5m-19 0v4m5-4v4m5-4v4m5-4v4m-15 0v2m5-2v2m4-2v2m6-2v2m45-23v6m0 0v3m0 0v3m0 0v5m0 0v6m-33-23v9m9-9v9m8-9v9m8-9v9m-22 0v8m13-8v8m-14 0v6m11-6v6m11-6v6m48-23v6m0 0v5m0 0v1m0 0v5m0 0v6m-34-23v6m9-6v6m6-6v6m12-6v6m-28 0v6m7-6v6m10-6v6m5-6v6m5-6v6m-24 0v11m6-11v11m10-11v11m10-11v11m32-23v4m0 0v2m0 0v2m0 0v3m0 0v1m0 0v5m0 0v4m0 0v2m-23-23v6m7-6v6m8-6v6m-14 0v5m7-5v5m7-5v5m-14 0v6m7-6v6m6-6v6m-14 0v6m7-6v6m7-6v6m37-23v4m0 0v4m0 0v3m0 0v1m0 0v3m0 0v2m0 0v2m0 0v2m0 0v2m-26-23v4m5-4v4m5-4v4m5-4v4m5-4v4m-17 0v4m4-4v4m6-4v4m5-4v4m5-4v4m-20 0v4m5-4v4m4-4v4m5-4v4m5-4v4m-21 0v5m5-5v5m4-5v5m4-5v5m5-5v5m-16 0v4m4-4v4m5-4v4m4-4v4m5-4v4m-20 0v2m5-2v2m5-2v2m6-2v2m5-2v2m36-23v3m0 0v1m0 0v3m0 0v1m0 0v3m0 0v4m0 0v4m0 0v4m-29-23v4m4-4v4m5-4v4m4-4v4m4-4v4m4-4v4m5-4v4m-26 0v4m4-4v4m5-4v4m4-4v4m4-4v4m5-4v4m4-4v4m-26 0v3m4-3v3m4-3v3m5-3v3m4-3v3m5-3v3m3-3v3m-26 0v4m4-4v4m5-4v4m4-4v4m5-4v4m4-4v4m4-4v4m-25 0v4m4-4v4m4-4v4m5-4v4m4-4v4m4-4v4m4-4v4m-25 0v4m5-4v4m4-4v4m4-4v4m5-4v4m4-4v4m5-4v4m31-23v2m0 0v1m0 0v2m0 0v2m0 0v1m0 0v2m0 0v1m0 0v2m0 0v2m0 0v1m0 0v3m0 0v3m0 0v1m-25-23v3m5-3v3m4-3v3m4-3v3m5-3v3m4-3v3m-22 0v4m5-4v4m4-4v4m5-4v4m4-4v4m5-4v4m-24 0v4m5-4v4m4-4v4m5-4v4m4-4v4m5-4v4m-23 0v4m4-4v4m5-4v4m4-4v4m4-4v4m4-4v4m-20 0v4m5-4v4m4-4v4m4-4v4m4-4v4m4-4v4m-21 0v4m4-4v4m5-4v4m4-4v4m5-4v4m4-4v4m35-23v2m0 0v1m0 0v2m0 0v2m0 0v1m0 0v2m0 0v2m0 0v1m0 0v2m0 0v1m0 0v1m0 0v2m0 0v1m0 0v2m0 0v1m-29-23v2m3-2v2m3-2v2m4-2v2m3-2v2m4-2v2m3-2v2m4-2v2m3-2v2m-27 0v3m3-3v3m3-3v3m3-3v3m4-3v3m3-3v3m3-3v3m4-3v3m3-3v3m-26 0v3m3-3v3m4-3v3m3-3v3m4-3v3m3-3v3m3-3v3m4-3v3m3-3v3m-27 0v2m4-2v2m3-2v2m3-2v2m4-2v2m3-2v2m4-2v2m4-2v2m-26 0v3m4-3v3m3-3v3m3-3v3m4-3v3m3-3v3m3-3v3m4-3v3m3-3v3m-25 0v3m3-3v3m4-3v3m3-3v3m3-3v3m4-3v3m3-3v3m3-3v3m4-3v3m-28 0v3m4-3v3m3-3v3m4-3v3m3-3v3m4-3v3m3-3v3m3-3v3m-25 0v3m3-3v3m3-3v3m4-3v3m3-3v3m3-3v3m3-3v3m3-3v3m4-3v3m-26 0v1m4-1v1m3-1v1m3-1v1m4-1v1m4-1v1m3-1v1m4-1v1m3-1v1m36-23v2m0 0v1m0 0v2m0 0v2m0 0v3m0 0v2m0 0v3m0 0v2m0 0v3m0 0v2m0 0v1m-32-23v3m3-3v3m3-3v3m11-1.5v1.5m3-3v3m3-3v3m3-3v3m3-3v3m-29 0v2m2-2v2m4-2v2m2-2v2m6-1.5v1.5m3-2v2m3-2v2m3-2v2m3-2v2m2-2v2m-27 0v2m2-2v2m3-2v2m3-2v2m2-2v2m3-2v2m3-2v2m3-2v2m4-2v2m3-2v2m3-2v2m-31 0v3m3-3v3m3-3v3m3-3v3m3-3v3m3-3v3m2-3v3m3-3v3m3-3v3m3-3v3m3-3v3m3-3v3m-31 0v2m2-2v2m3-2v2m4-2v2m3-2v2m3-2v2m3-2v2m3-2v2m3-2v2m3-2v2m3-2v2m-30 0v3m3-3v3m3-3v3m3-3v3m3-3v3m3-3v3m2-3v3m3-3v3m3-3v3m3-3v3m3-3v3m-29 0v2m3-2v2m3-2v2m3-2v2m3-2v2m3-2v2m2-2v2m3-2v2m4-2v2m3-2v2m3-2v2m-31 0v3m3-3v3m3-3v3m3-3v3m3-3v3m2-3v3m3-3v3m3-3v3m3-3v3m3-3v3m3-3v3m2-3v3m-30 0v2m3-2v2m3-2v2m3-2v2m3-2v2m2-2v2m3-2v2m3-2v2m3-2v2m3-2v2m2-2v2m3-2v2m-31 0v1m3-1v1m3-1v1m3-1v1m3-1v1m2-1v1m3-1v1m3-1v1m3-1v1m3-1v1m3-1v1m34-22v1m0 0v1m0 0v2m0 0v1m0 0v1m0 0v1m0 0v2m0 0v1m0 0v1m0 0v2m0 0v1m0 0v2m0 0v2m0 0v1m0 0v3m-28-23v2m3-2v2m-4 0v3m3-3v3m18-1v1m3-2v2m3-3v3m-26 0v2m3-2v2m3-1.5v1.5m3-1v1m3-1v1m3-1v1m3-2v2m3-2v2m3-2v2m2-2v2m-27 0v3m2-3v3m3-3v3m3-3v3m2-3v3m3-3v3m3-3v3m3-3v3m3-3v3m3-3v3m-24 0v2m3-2v2m3-2v2m2-2v2m3-2v2m3-2v2m3-2v2m3-2v2m3-2v2m2-2v2m-25 0v3m3-3v3m3-3v3m3-3v3m3-3v3m3-3v3m3-3v3m3-3v3m3-3v3m-25 0v2m3-2v2m3-2v2m2-2v2m3-2v2m3-2v2m2-2v2m3-2v2m3-2v2m3-2v2m-25 0v3m2-3v3m3-3v3m3-3v3m2-3v3m3-3v3m3-3v3m3-3v3m3-3v3m3-3v3m-24 0v3m2-3v3m3-3v3m3-3v3m3-3v3m3-3v3m3-3v3m3-3v3m3-3v3m3-3v3m34-23v3m0 0v3m0 0v2m0 0v3m0 0v3m0 0v2m0 0v1m0 0v2m0 0v1.5m0 1v1.5m-31-22.5v2.5m3-3v3m4-3v3m3-3v3m3-3v3m3-3v3m4-3v3m3-3v3m2-3v3m4-3v3m-28 0v3m3-3v3m4-3v3m3-3v3m3-3v3m3-3v3m3-3v3m3-3v3m3-3v3m-25 0v2m3-2v2m3-2v2m4-2v2m3-2v2m3-2v2m3-2v2m3-2v2m3-2v2m-26 0v3m4-3v3m3-3v3m3-3v3m4-3v3m3-3v3m3-3v3m3-3v3m3-3v3m-25 0v3m3-3v3m3-3v3m3-3v3m3-3v3m4-3v3m4-3v3m3-3v3m3-3v3m-26 0v3m3-3v3m4-3v3m3-3v3m3-3v3m3-3v3m3-3v3m3-3v3m4-3v3m-25 0v2m3-2v2m4-2v2m2-2v2m4-2v2m3-2v2m3-2v2m4-2v2m3-2v2m-27 0v4m4-4v4m3-4v4m3-4v4m4-4v4m2-4v4m4-4v4m3-4v2.5m4-2.5v4m36-22v1m0 0v1m0 0v2m-31-5v3m3-3v3m4-3v3m3-3v3m3-3v3m2-3v3m4-3v3m3-3v3m3-3v3m4-3v3m-29 0v3m3-3v3m3-3v3m3-3v3m3-3v3m4-3v3m3-3v3m3-3v3m4-3v3m3-3v2.5m-28 .5v2m3-2v2m3-2v2m3-2v2m4-2v2m3-2v1m3-1v1m-21 1v3m4-3v3m3-3v3m3-3v3m3-1.5v1.5m3-1.5v1.5m3-1.5v1m-18 .5v3m3-3v3m3-3v3m-6 0v2m4-2v2m3-2v2m-6 0v3m3-3v3m3-3v2.5m-7 .5v2m4-2v2m-2 0v2m31-19.5v1.5m-362 18v5m0 0v4m0 0v2m0 0v2m0 0v4m0 0v2m0 0v2m0 0v3.5m-15-24.5v3.5m4-3.5v5m4-5v5m-5 0v1m5-1v4m1 0v4m1 0v4m62-17v7m0 0v4m0 0v7m0 0v1m0 0v8m-52-27v11m8-11v11m7-11v11m11-11v11m6-11v11m10-11v11m6-11v11m-46 0v8m6-8v8m5-8v8m8-8v8m13-8v8m10-8v8m-45 0v8m6-8v8m10-8v8m7-8v8m7-8v8m11-8v8m58-27v7m0 0v4m0 0v2m0 0v5m0 0v1m0 0v8m-41-27v7m9-7v7m6-7v7m7-7v7m7-7v7m6-7v7m-35 0v4m9-4v4m6-4v4m5-4v4m11-4v4m-31 0v7m11-7v7m10-7v7m9-7v7m-29 0v9m7-9v9m8-9v9m8-9v9m7-9v9m42-27v3m0 0v3m0 0v1m0 0v2m0 0v3m0 0v1m0 0v2m0 0v3m0 0v1m0 0v2m0 0v3m0 0v3m-26-27v7m6-7v7m6-7v7m7-7v7m-20 0v6m6-6v6m7-6v6m7-6v6m-20 0v6m7-6v6m7-6v6m7-6v6m-20 0v8m8-8v8m7-8v8m6-8v8m45-27v3m0 0v3m0 0v3m0 0v3m0 0v3m0 0v3m0 0v3m0 0v2m0 0v1m0 0v3m-37-27v3m3-3v3m4-3v3m3-3v3m4-3v3m3-3v3m4-3v3m3-3v3m4-3v3m3-3v3m4-3v3m-35 0v3m4-3v3m4-3v3m3-3v3m4-3v3m3-3v3m4-3v3m3-3v3m4-3v3m3-3v3m-33 0v3m4-3v3m3-3v3m4-3v3m3-3v3m3-3v3m4-3v3m3-3v3m4-3v3m3-3v3m4-3v3m-34 0v3m3-3v3m4-3v3m4-3v3m3-3v3m4-3v3m3-3v3m3-3v3m4-3v3m3-3v3m3-3v3m-33 0v3m3-3v3m3-3v3m4-3v3m3-3v3m4-3v3m4-3v3m3-3v3m4-3v3m3-3v3m-33 0v3m4-3v3m3-3v3m4-3v3m3-3v3m4-3v3m3-3v3m4-3v3m4-3v3m3-3v3m3-3v3m-34 0v3m4-3v3m4-3v3m4-3v3m3-3v3m4-3v3m3-3v3m4-3v3m3-3v3m4-3v3m-34 0v3m3-3v3m4-3v3m3-3v3m3-3v3m4-3v3m3-3v3m4-3v3m3-3v3m4-3v3m3-3v3m-34 0v3m3-3v3m4-3v3m3-3v3m4-3v3m3-3v3m3-3v3m4-3v3m4-3v3m3-3v3m4-3v3m38-27v2m0 0v1m0 0v1m0 0v2m0 0v2m0 0v1m0 0v1m0 0v1m0 0v1m0 0v1m0 0v2m0 0v2m0 0v1m0 0v1m0 0v2m0 0v2m0 0v2m0 0v2m-32-27v3m3-3v3m3-3v3m3-3v3m3-3v3m3-3v3m4-3v3m3-3v3m3-3v3m3-3v3m-30 0v3m3-3v3m3-3v3m3-3v3m3-3v3m4-3v3m3-3v3m3-3v3m3-3v3m4-3v3m3-3v3m-31 0v3m3-3v3m4-3v3m3-3v3m3-3v3m3-3v3m3-3v3m3-3v3m4-3v3m3-3v3m-28 0v3m3-3v3m3-3v3m4-3v3m3-3v3m4-3v3m3-3v3m3-3v3m3-3v3m4-3v3m-31 0v3m4-3v3m3-3v3m3-3v3m4-3v3m4-3v3m3-3v3m3-3v3m4-3v3m4-3v3m-31 0v3m4-3v3m3-3v3m4-3v3m3-3v3m4-3v3m4-3v3m3-3v3m3-3v3m-30 0v3m4-3v3m3-3v3m3-3v3m3-3v3m4-3v3m3-3v3m3-3v3m4-3v3m3-3v3m-29 0v2m3-2v2m3-2v2m4-2v2m3-2v2m4-2v2m3-2v2m3-2v2m3-2v2m3-2v2m-28 0v4m3-4v4m3-4v4m4-4v4m3-4v4m3-4v4m4-4v4m4-4v4m3-4v4m4-4v4m32-27v2m0 0v2m0 0v2m0 0v2m0 0v1m0 0v1m0 0v1m0 0v2m0 0v2m0 0v2m0 0v2m0 0v2m0 0v1m0 0v1m0 0v1m0 0v1m0 0v2m-29-27v2m2-2v2m2-2v2m2-2v2m3-2v2m2-2v2m2-2v2m2-2v2m2-2v2m2-2v2m2-2v2m2-2v2m3-2v2m-26 0v2m2-2v2m2-2v2m2-2v2m2-2v2m3-2v2m2-2v2m2-2v2m2-2v2m2-2v2m2-2v2m3-2v2m2-2v2m2-2v2m-29 0v2m2-2v2m2-2v2m2-2v2m3-2v2m2-2v2m2-2v2m2-2v2m2-2v2m3-2v2m2-2v2m2-2v2m3-2v2m-27 0v2m3-2v2m2-2v2m2-2v2m2-2v2m2-2v2m2-2v2m2-2v2m3-2v2m2-2v2m2-2v2m2-2v2m2-2v2m2-2v2m-28 0v2m3-2v2m2-2v2m2-2v2m2-2v2m3-2v2m2-2v2m2-2v2m2-2v2m2-2v2m2-2v2m2-2v2m2-2v2m2-2v2m-28 0v1m2-1v1m3-1v1m2-1v1m2-1v1m2-1v1m2-1v1m3-1v1m2-1v1m1-1v1m3-1v1m2-1v1m2-1v1m2-1v1m-28 0v2m2-2v2m2-2v2m3-2v2m2-2v2m2-2v2m2-2v2m2-2v2m2-2v2m2-2v2m2-2v2m2-2v2m3-2v2m2-2v2m-28 0v2m2-2v2m2-2v2m3-2v2m2-2v2m2-2v2m2-2v2m2-2v2m2-2v2m3-2v2m2-2v2m2-2v2m2-2v2m3-2v2m-29 0v2m2-2v2m2-2v2m2-2v2m3-2v2m2-2v2m2-2v2m2-2v2m2-2v2m2-2v2m3-2v2m2-2v2m2-2v2m2-2v2m-27 0v2m2-2v2m2-2v2m2-2v2m2-2v2m2-2v2m2-2v2m2-2v2m2-2v2m2-2v2m3-2v2m2-2v2m2-2v2m2-2v2m-27 0v2m2-2v2m3-2v2m2-2v2m2-2v2m2-2v2m2-2v2m3-2v2m2-2v2m2-2v2m2-2v2m2-2v2m2-2v2m-26 0v2m2-2v2m2-2v2m3-2v2m2-2v2m2-2v2m2-2v2m2-2v2m2-2v2m2-2v2m2-2v2m2-2v2m3-2v2m-27 0v2m3-2v2m2-2v2m2-2v2m2-2v2m2-2v2m2-2v2m2-2v2m2-2v2m3-2v2m2-2v2m2-2v2m2-2v2m2-2v2m-28 0v2m2-2v2m2-2v2m3-2v2m2-2v2m2-2v2m2-2v2m2-2v2m2-2v2m2-2v2m2-2v2m3-2v2m2-2v2m2-2v2m35-27v2m0 0v2m0 0v2m0 0v1m0 0v1m0 0v1m0 0v2m0 0v2m0 0v2m0 0v2m0 0v2m0 0v2m0 0v1m0 0v2m0 0v3m-32-27v2m2-2v2m3-2v2m2-2v2m1-2v2m3-2v2m2-2v2m2-2v2m2-2v2m3-2v2m2-2v2m2-2v2m3-2v2m2-2v2m-29 0v2m2-2v2m2-2v2m2-2v2m2-2v2m3-2v2m2-2v2m2-2v2m2-2v2m2-2v2m2-2v2m2-2v2m2-2v2m3-2v2m2-2v2m-30 0v2m2-2v2m2-2v2m3-2v2m2-2v2m2-2v2m2-2v2m2-2v2m2-2v2m3-2v2m2-2v2m2-2v2m2-2v2m2-2v2m2-2v2m-30 0v2m2-2v2m2-2v2m2-2v2m2-2v2m2-2v2m2-2v2m2-2v2m2-2v2m2-2v2m3-2v2m2-2v2m2-2v2m2-2v2m2-2v2m-29 0v1m3-1v1m2-1v1m2-1v1m2-1v1m2-1v1m2-1v1m2-1v1m3-1v1m2-1v1m2-1v1m2-1v1m2-1v1m2-1v1m3-1v1m-31 0v2m2-2v2m2-2v2m2-2v2m3-2v2m2-2v2m2-2v2m2-2v2m2-2v2m2-2v2m2-2v2m2-2v2m2-2v2m2-2v2m2-2v2m-27 0v2m2-2v2m2-2v2m2-2v2m2-2v2m2-2v2m2-2v2m2-2v2m2-2v2m2-2v2m2-2v2m2-2v2m3-2v2m2-2v2m-29 0v2m2-2v2m2-2v2m2-2v2m3-2v2m2-2v2m2-2v2m2-2v2m2-2v2m3-2v2m2-2v2m2-2v2m3-2v2m2-2v2m-29 0v2m2-2v2m2-2v2m2-2v2m2-2v2m2-2v2m3-2v2m2-2v2m2-2v2m2-2v2m3-2v2m2-2v2m2-2v2m2-2v2m2-2v2m-30 0v2m2-2v2m2-2v2m3-2v2m2-2v2m2-2v2m2-2v2m2-2v2m2-2v2m2-2v2m2-2v2m2-2v2m2-2v2m2-2v2m3-2v2m-30 0v2m2-2v2m2-2v2m2-2v2m2-2v2m2-2v2m2-2v2m2-2v2m2-2v2m2-2v2m2-2v2m3-2v2m2-2v2m2-2v2m2-2v2m2-2v2m-31 0v1m2-1v1m2-1v1m3-1v1m2-1v1m2-1v1m3-1v1m2-1v1m2-1v1m2-1v1m2-1v1m3-1v1m2-1v1m2-1v1m-29 0v2m2-2v2m3-2v2m2-2v2m2-2v2m2-2v2m2-2v2m2-2v2m3-2v2m2-2v2m2-2v2m2-2v2m2-2v2m2-2v2m3-2v2m-31 0v3m3-3v3m2-3v3m2-3v3m2-3v3m2-3v3m3-3v3m1-3v3m3-3v3m2-3v3m2-3v3m2-3v3m2-3v3m2-3v3m3-3v3m27-27v2m0 0v2m0 0v2m0 0v1m0 0v1m0 0v1m0 0v1m0 0v1m0 0v1m0 0v1m0 0v1m0 0v1m0 0v1m0 0v1m0 0v1m0 0v1m0 0v2m0 0v1m0 0v1m0 0v1m0 0v1m0 0v2m-25-27v2m2-2v2m2-2v2m2-2v2m2-2v2m2-2v2m3-2v2m2-2v2m2-2v2m3-2v2m2-2v2m-22 0v2m2-2v2m2-2v2m3-2v2m2-2v2m2-2v2m2-2v2m2-2v2m2-2v2m2-2v2m2-2v2m3-2v2m-24 0v2m2-2v2m3-2v2m2-2v2m2-2v2m2-2v2m2-2v2m3-2v2m2-2v2m2-2v2m2-2v2m-22 0v1m3-1v1m2-1v1m2-1v1m2-1v1m2-1v1m2-1v1m2-1v1m3-1v1m2-1v1m2-1v1m-21 0v2m2-2v2m2-2v2m2-2v2m2-2v2m3-2v2m2-2v2m2-2v2m2-2v2m2-2v2m2-2v2m-22 0v2m3-2v2m2-2v2m2-2v2m2-2v2m2-2v2m3-2v2m2-2v2m2-2v2m2-2v2m2-2v2m-22 0v2m2-2v2m2-2v2m2-2v2m2-2v2m2-2v2m2-2v2m2-2v2m3-2v2m2-2v2m2-2v2m2-2v2m-22 0v2m2-2v2m2-2v2m2-2v2m2-2v2m2-2v2m2-2v2m2-2v2m3-2v2m2-2v2m2-2v2m-21 0v2m2-2v2m2-2v2m2-2v2m2-2v2m3-2v2m2-2v2m2-2v2m2-2v2m2-2v2m2-2v2m-22 0v2m3-2v2m2-2v2m2-2v2m3-2v2m2-2v2m2-2v2m2-2v2m2-2v2m2-2v2m3-2v2m-23 0v2m2-2v2m3-2v2m2-2v2m2-2v2m2-2v2m2-2v2m2-2v2m2-2v2m3-2v2m2-2v2m-22 0v1m2-1v1m2-1v1m2-1v1m2-1v1m2-1v1m2-1v1m3-1v1m2-1v1m2-1v1m2-1v1m2-1v1m-23 0v2m3-2v2m2-2v2m2-2v2m2-2v2m2-2v2m3-2v2m2-2v2m2-2v2m2-2v2m2-2v2m-22 0v3m2-3v3m2-3v3m2-3v3m3-3v3m2-3v3m2-3v3m2-3v3m2-3v3m2-3v3m2-3v3m2-3v3m4-27v2m2-2v2m3-2v2m2-2v2m2-2v2m2-2v2m2-2v2m2-2v2m2-2v2m4-2v2m3-2v2m2-2v2m-26 0v2m2-2v2m2-2v2m2-2v2m2-2v2m2-2v2m2-2v2m3-2v2m2-2v2m4-2v2m2-2v2m2-2v2m-26 0v2m2-2v2m2-2v2m2-2v2m3-2v2m2-2v2m2-2v2m2-2v2m2-2v2m2-1v1m3-2v1.5m2-1.5v2m2-2v2m2-2v1.5m-28 .5v2m2-2v2m2-2v2m2-2v2m2-2v2m2-2v2m2-2v2m2-2v2m3-2v2m2-2v2m4-2v2m2-2v2m2-2v1.5m-27 .5v2m2-2v2m2-2v2m3-2v2m2-2v2m2-2v2m2-2v2m3-2v2m2-2v2m6-2v2m-24 0v2m2-2v2m2-2v2m2-2v2m2-2v2m2-2v2m2-2v2m3-2v2m1-2v2m3-2v2m4-2v2m-23 0v2m3-2v2m2-2v2m2-2v2m2-2v2m2-2v2m2-2v2m2-2v2m3-2v2m-18 0v2m2-2v2m2-2v2m3-2v2m2-2v2m2-2v2m2-2v2m2-2v2m2-2v2m2-2v2m-18 0v2m2-2v2m2-2v2m2-2v2m2-2v2m2-2v2m2-2v2m2-2v2m3-2v2m2-2v2m2-2v2m-22 0v1m2-1v1m2-1v1m3-1v1m2-1v1m2-1v1m2-1v1m2-1v1m3-1v1m2-1v1m2-1v1m-22 0v2m2-2v2m2-2v2m2-2v2m2-2v2m2-2v2m2-2v2m3-2v2m2-2v2m2-2v2m2-2v2m2-2v2m-23 0v2m2-2v2m2-2v2m2-2v2m2-2v2m2-2v2m3-2v2m2-2v2m2-2v2m2-2v2m2-2v2m2-2v2m-22 0v2m2-2v2m2-2v2m2-2v2m2-2v2m2-2v2m3-2v2m2-2v2m2-2v2m2-2v2m2-2v2m2-2v2m-23 0v2m2-2v2m2-2v2m2-2v2m2-2v2m3-2v2m2-2v2m2-2v2m2-2v2m3-2v2m2-2v2m2-1v1m-271 0v5m0 0v2m0 0v5m0 0v5m0 0v4m-46-21v6.5m8-6.5v7m8-7v7m10-7v7m5-7v7m-17 0v4.5m11-4.5v5m6-5v5m11-5v5m-20 0v7.5m8-7.5v6.5m61-18.5v5m0 0v6m0 0v1m0 0v4m0 0v1m0 0v4m-40-21v5m10-5v5m11-5v5m5-5v5m7-5v5m-32 0v7m10-7v7m5-7v7m4-7v7m6-7v7m7-7v7m-35 0v5m5-5v5m8-5v5m10-5v5m6-5v5m5-5v5m-33 0v4m8-4v4m6-4v4m10-4v4m8-4v4m39-21v3m0 0v2m0 0v1m0 0v3m0 0v2m0 0v2m0 0v3m0 0v3m0 0v2m-24-21v5m7-5v5m7-5v5m7-5v5m-23 0v6m6-6v6m7-6v6m8-6v6m-19 0v5m7-5v5m7-5v5m6-5v5m-20 0v5m6-5v5m6-5v5m7-5v5m37-21v3m0 0v3m0 0v2m0 0v1m0 0v3m0 0v1m0 0v2m0 0v1m0 0v1m0 0v2m0 0v2m-28-21v3m3-3v3m4-3v3m4-3v3m3-3v3m3-3v3m4-3v3m4-3v3m-25 0v3m4-3v3m4-3v3m3-3v3m4-3v3m4-3v3m3-3v3m4-3v3m-28 0v3m4-3v3m4-3v3m4-3v3m3-3v3m3-3v3m4-3v3m4-3v3m-25 0v4m4-4v4m4-4v4m4-4v4m4-4v4m4-4v4m4-4v4m3-4v4m-27 0v3m4-3v3m4-3v3m4-3v3m4-3v3m3-3v3m4-3v3m4-3v3m-27 0v3m4-3v3m3-3v3m4-3v3m4-3v3m3-3v3m4-3v3m4-3v3m-27 0v2m4-2v2m4-2v2m4-2v2m3-2v2m4-2v2m3-2v2m4-2v2m29-21v2m0 0v1m0 0v1m0 0v2m0 0v1m0 0v1m0 0v1m0 0v2m0 0v1m0 0v1m0 0v2m0 0v2m0 0v1m0 0v2m0 0v1m-22-21v3m3-3v3m4-3v3m4-3v3m3-3v3m4-3v3m-18 0v3m4-3v3m3-3v3m3-3v3m4-3v3m4-3v3m-18 0v2m3-2v2m4-2v2m4-2v2m3-2v2m3-2v2m-18 0v4m3-4v4m3-4v4m4-4v4m4-4v4m3-4v4m3-4v4m-19 0v3m3-3v3m4-3v3m3-3v3m3-3v3m4-3v3m-18 0v2m4-2v2m3-2v2m4-2v2m3-2v2m4-2v2m-17 0v4m3-4v4m4-4v4m3-4v4m4-4v4m4-4v4m43-21v1m0 0v1m0 0v1m0 0v1m0 0v1m0 0v2m0 0v2m0 0v2m0 0v1m0 0v1m0 0v1m0 0v1m0 0v1m0 0v1m0 0v1m0 0v1m0 0v1m0 0v1m-37-21v2m2-2v2m3-2v2m3-2v2m3-2v2m3-2v2m3-2v2m3-2v2m2-2v2m3-2v2m2-2v2m3-2v2m3-2v2m3-2v2m-37 0v2m3-2v2m3-2v2m2-2v2m3-2v2m2-2v2m3-2v2m3-2v2m3-2v2m2-2v2m3-2v2m3-2v2m3-2v2m3-2v2m-35 0v3m2-3v3m3-3v3m3-3v3m2-3v3m3-3v3m2-3v3m3-3v3m2-3v3m3-3v3m3-3v3m2-3v3m3-3v3m3-3v3m-35 0v2m3-2v2m2-2v2m3-2v2m3-2v2m3-2v2m2-2v2m3-2v2m3-2v2m2-2v2m3-2v2m3-2v2m3-2v2m3-2v2m-35 0v2m3-2v2m2-2v2m3-2v2m3-2v2m2-2v2m3-2v2m2-2v2m3-2v2m3-2v2m3-2v2m3-2v2m2-2v2m3-2v2m-35 0v2m3-2v2m2-2v2m3-2v2m3-2v2m3-2v2m2-2v2m4-2v2m2-2v2m3-2v2m2-2v2m3-2v2m3-2v2m3-2v2m-37 0v2m2-2v2m3-2v2m3-2v2m3-2v2m3-2v2m2-2v2m3-2v2m3-2v2m3-2v2m3-2v2m3-2v2m2-2v2m3-2v2m-36 0v3m3-3v3m3-3v3m3-3v3m2-3v3m3-3v3m3-3v3m2-3v3m3-3v3m3-3v3m2-3v3m3-3v3m2-3v3m3-3v3m-34 0v2m3-2v2m2-2v2m3-2v2m3-2v2m3-2v2m2-2v2m3-2v2m2-2v2m3-2v2m2-2v2m3-2v2m3-2v2m2-2v2m-35 0v1m3-1v1m3-1v1m3-1v1m2-1v1m3-1v1m2-1v1m3-1v1m3-1v1m3-1v1m2-1v1m3-1v1m2-1v1m3-1v1m30-21v1m0 0v2m0 0v2m0 0v2m0 0v2m0 0v1m0 0v1m0 0v1m0 0v2m0 0v2m0 0v1m0 0v1m0 0v1m0 0v2m-25-21v1m2-1v1m2-1v1m2-1v1m2-1v1m2-1v1m2-1v1m3-1v1m2-1v1m2-1v1m3-1v1m2-1v1m-24 0v2m2-2v2m2-2v2m2-2v2m2-2v2m2-2v2m2-2v2m3-2v2m1-2v2m3-2v2m2-2v2m2-2v2m-24 0v2m2-2v2m2-2v2m2-2v2m2-2v2m2-2v2m2-2v2m2-2v2m3-2v2m2-2v2m2-2v2m2-2v2m-22 0v2m2-2v2m2-2v2m2-2v2m3-2v2m2-2v2m2-2v2m2-2v2m2-2v2m2-2v2m2-2v2m2-2v2m-23 0v2m3-2v2m2-2v2m2-2v2m2-2v2m3-2v2m2-2v2m2-2v2m2-2v2m3-2v2m2-2v2m-23 0v2m2-2v2m2-2v2m2-2v2m2-2v2m2-2v2m3-2v2m2-2v2m2-2v2m2-2v2m2-2v2m2-2v2m-23 0v1m2-1v1m2-1v1m3-1v1m2-1v1m2-1v1m3-1v1m2-1v1m2-1v1m2-1v1m3-1v1m-24 0v2m2-2v2m3-2v2m2-2v2m2-2v2m2-2v2m3-2v2m2-2v2m2-2v2m3-2v2m2-2v2m2-2v2m-24 0v2m2-2v2m2-2v2m2-2v2m3-2v2m2-2v2m2-2v2m2-2v2m3-2v2m2-2v2m2-2v2m-23 0v1m2-1v1m2-1v1m3-1v1m2-1v1m2-1v1m2-1v1m2-1v1m2-1v1m2-1v1m2-1v1m3-1v1m-23 0v2m2-2v2m3-2v2m2-2v2m2-2v2m2-2v2m2-2v2m3-2v2m2-2v2m2-2v2m2-2v2m2-2v2m-24 0v2m2-2v2m2-2v2m3-2v2m1-2v2m2-2v2m3-2v2m2-2v2m2-2v2m2-2v2m2-2v2m2-2v2m29-21v1m0 0v1m0 0v1m0 0v1m0 0v1m0 0v2m0 0v2m0 0v1m0 0v1m0 0v1m0 0v1m0 0v1m0 0v2m0 0v2m0 0v1m0 0v1m0 0v1m-25-21v1m2-1v1m3-1v1m2-1v1m2-1v1m2-1v1m2-1v1m3-1v1m2-1v1m2-1v1m2-1v1m-22 0v2m2-2v2m2-2v2m2-2v2m2-2v2m2-2v2m2-2v2m3-2v2m1-2v2m3-2v2m2-2v2m2-2v2m-24 0v2m3-2v2m2-2v2m2-2v2m2-2v2m2-2v2m2-2v2m2-2v2m2-2v2m3-2v2m2-2v2m2-2v2m-23 0v2m2-2v2m2-2v2m2-2v2m2-2v2m2-2v2m3-2v2m2-2v2m2-2v2m2-2v2m2-2v2m2-2v2m-23 0v2m2-2v2m2-2v2m2-2v2m2-2v2m2-2v2m2-2v2m2-2v2m2-2v2m2-2v2m2-2v2m3-2v2m-23 0v1m2-1v1m2-1v1m2-1v1m3-1v1m2-1v1m2-1v1m2-1v1m2-1v1m2-1v1m2-1v1m2-1v1m-23 0v2m2-2v2m2-2v2m2-2v2m2-2v2m2-2v2m2-2v2m2-2v2m3-2v2m2-2v2m2-2v2m3-2v2m-25 0v2m2-2v2m3-2v2m2-2v2m2-2v2m3-2v2m2-2v2m2-2v2m2-2v2m2-2v2m2-2v2m2-2v2m-23 0v2m2-2v2m2-2v2m3-2v2m2-2v2m2-2v2m2-2v2m2-2v2m3-2v2m2-2v2m2-2v2m-23 0v2m2-2v2m3-2v2m1-2v2m3-2v2m1-2v2m3-2v2m2-2v2m2-2v2m2-2v2m2-2v2m3-2v2m-23 0v1m2-1v1m2-1v1m2-1v1m2-1v1m2-1v1m3-1v1m2-1v1m2-1v1m2-1v1m2-1v1m3-1v1m-24 0v2m3-2v2m2-2v2m2-2v2m2-2v2m2-2v2m3-2v2m2-2v2m2-2v2m2-2v2m2-2v2m40-21v1m0 0v1m0 0v1m0 0v1m-36-4v2m2-2v2m2-2v2m2-2v2m2-2v2m3-2v2m2-2v2m2-2v2m2-2v2m3-2v2m2-2v2m2-2v2m2-2v2m2-2v2m3-2v2m2-2v2m-33 0v2m2-2v2m2-2v2m2-2v2m3-2v2m2-2v2m3-2v2m2-2v2m2-2v2m3-2v2m2-2v2m2-2v2m2-2v2m2-2v2m2-2v2m2-2v2m-33 0v1m2-1v1m2-1v1m3-1v1m2-1v1m2-1v1m2-1v1m2-1v1m2-1v1m2-1v1m3-1v1m2-1v1m2-1v1m2-1v1m2-1v1m2-1v1m-32 0v2m3-2v2m2-2v2m2-2v2m2-2v2m2-2v2m2-2v2m3-2v2m2-2v2m2-2v2m2-2v2m2-2v2m2-2v2m2-2v2m2-2v2m2-2v1m-32 1v2m2-2v2m2-2v2m2-2v2m2-2v2m3-2v2m2-2v2m2-2v2m2-2v2m3-2v2m2-2v2m2-2v2m2-2v2m3-2v2m-29 0v2m2-2v2m2-2v2m2-2v2m3-2v2m2-2v2m2-2v2m2-2v2m2-2v2m2-2v2m2-2v2m3-2v1m2-1v1m-25 1v2m2-2v2m2-2v2m2-2v2m2-2v2m2-2v2m2-2v2m3-2v2m2-2v2m2-2v2m-20 0v1m2-1v1m3-1v1m2-1v1m2-1v1m2-1v1m2-1v1m3-1v1m2-1v1m-17 0v2m3-2v2m2-2v2m2-2v2m2-2v2m2-2v2m2-2v2m2-2v2m2-2v1m-17 1v2m2-2v2m2-2v2m3-2v2m2-2v2m2-2v2m2-2v2m-13 0v2m2-2v2m2-2v2m2-2v2m2-2v2m2-2v2m-10 0v1m2-1v1m2-1v1m3-1v1m30-21v1m2-1v1m2-1v1m2-1v1m-7 0v2m2-2v2m2-2v1.5m-4 .5v1.5m2-1.5v1m-238 17v6m0 0v1m-24-7v2.5m7-2.5v4.5m11-4.5v7m42-7v4m0 0v2m0 0v1m0 0v3m0 0v3m0 0v1m0 0v2m-31-16v6m7-6v4m6-4v4m7-4v6m8-6v6m-27 0v1m21-1v1.5m6-1.5v5.5m43-11.5v4m0 0v3m0 0v3m0 0v3m0 0v1m0 0v2m0 0v1m0 0v2m0 0v1m0 0v2m0 0v1m0 0v3m-37-26v4m4-4v4m4-4v4m3-4v4m4-4v4m4-4v4m3-4v4m4-4v4m4-4v4m4-4v4m-36 0v3m4-3v3m4-3v3m4-3v3m4-3v3m3-3v3m4-3v3m4-3v3m3-3v3m4-3v3m3-3v3m-36 0v3m4-3v3m3-3v3m5-3v3m4-3v3m4-3v3m4-3v3m4-3v3m3-3v3m4-3v3m-35 0v4m3-4v4m4-4v4m4-4v4m4-4v4m3-4v4m4-4v4m4-4v4m3-4v4m4-4v4m-32 0v3m4-3v3m4-3v3m3-3v3m4-3v3m3-3v3m4-3v3m4-3v3m3-3v3m4-3v3m-34 0v2.5m4-2.5v3m4-3v3m4-3v2m4-2v1.5m4-1.5v1.5m3-1.5v2.5m4-2.5v3m4-3v3m4-3v3m-30 0v2m4-2v3m16-3v1.5m3-1.5v3m5-3v3m-2 0v3m3-3v3m42-26v3m0 0v1m0 0v1m0 0v2m0 0v3m0 0v2m0 0v1m0 0v1m0 0v2m0 0v2.5m-35-18.5v4m3-4v4m3-4v4m4-4v4m3-4v4m3-4v4m4-4v4m3-4v4m4-4v4m3-4v4m3-4v4m-34 0v3m3-3v3m3-3v3m4-3v3m3-3v3m4-3v3m4-3v3m3-3v3m4-3v3m4-3v3m-31 0v3m3-3v3m3-3v3m4-3v3m3-3v3m4-3v3m3-3v3m4-3v3m3-3v3m4-3v3m-32 0v3m3-3v3m4-3v3m4-3v3m3-3v3m3-3v3m4-3v3m3-3v3m3-3v3m3-3v3m4-3v3m-34 0v3m3-3v3m4-3v3m3-3v3m4-3v3m3-3v3m4-3v3m3-3v3m4-3v3m3-3v3m-31 0v3m4-3v3m3-3v3m4-3v3m4-3v3m4-3v3m4-3v3m4-3v3m3-3v3m4-3v3m-34 0v3m3-3v3m4-3v3m3-3v3m3-3v3m4-3v3m4-3v3m3-3v3m4-3v3m3-3v1.5m-30 1.5v4m3-4v4m4-4v4m3-4v4m3-4v4m4-4v4m4-4v4m3-4v2.5m38-24.5v2m0 0v1m0 0v1m0 0v1m0 0v1m0 0v1m0 0v1m0 0v1m0 0v1m0 0v1m0 0v1m0 0v1m0 0v1m0 0v1m0 0v1m0 0v1m0 0v2m0 0v2m0 0v1m0 0v1m-24-23v3m3-3v3m2-3v3m3-3v3m2-3v3m3-3v3m3-3v3m2-3v3m3-3v3m-22 0v2m3-2v2m3-2v2m2-2v2m3-2v2m3-2v2m2-2v2m3-2v2m2-2v2m-21 0v2m2-2v2m3-2v2m2-2v2m3-2v2m3-2v2m2-2v2m3-2v2m3-2v2m3-2v2m-24 0v3m3-3v3m3-3v3m3-3v3m2-3v3m3-3v3m2-3v3m3-3v3m3-3v3m-23 0v2m3-2v2m3-2v2m3-2v2m3-2v2m3-2v2m2-2v2m3-2v2m3-2v2m-22 0v2m2-2v2m3-2v2m3-2v2m2-2v2m3-2v2m3-2v2m3-2v2m3-2v2m-22 0v2m3-2v2m2-2v2m3-2v2m3-2v2m3-2v2m3-2v2m3-2v2m2-2v2m-22 0v3m3-3v3m3-3v3m3-3v3m3-3v3m3-3v3m2-3v3m3-3v3m3-3v3m-15 0v1m3-1v1.5m2-1.5v2m3-2v2m3-2v2m2-2v2m-3 0v1m3-1v1.5m3-1.5v2m34-23v2m0 0v2m0 0v2m0 0v2m0 0v1m0 0v1m0 0v1m0 0v2m0 0v2m0 0v2m-32-17v2m3-2v2m2-2v2m2-2v2m2-2v2m2-2v2m2-2v2m2-2v2m2-2v2m2-2v2m2-2v2m2-2v2m3-2v2m2-2v2m2-2v2m-29 0v2m2-2v2m2-2v2m2-2v2m2-2v2m2-2v2m2-2v2m2-2v2m2-2v2m2-2v2m3-2v2m2-2v2m2-2v2m2-2v2m2-2v2m-30 0v2m3-2v2m2-2v2m2-2v2m2-2v2m2-2v2m3-2v2m2-2v2m2-2v2m2-2v2m2-2v2m2-2v2m3-2v2m2-2v2m2-2v2m-30 0v2m2-2v2m2-2v2m2-2v2m2-2v2m2-2v2m2-2v2m3-2v2m2-2v2m2-2v2m2-2v2m2-2v2m2-2v2m3-2v2m2-2v2m-30 0v1m2-1v1m2-1v1m2-1v1m3-1v1m2-1v1m2-1v1m3-1v1m2-1v1m2-1v1m2-1v1m2-1v1m2-1v1m2-1v1m-29 0v2m3-2v2m1-2v2m2-2v2m2-2v2m3-2v2m2-2v2m2-2v2m2-2v2m3-2v2m2-2v2m2-2v2m2-2v2m2-2v2m2-2v2m-30 0v2m3-2v2m2-2v2m2-2v2m2-2v2m2-2v2m2-2v2m3-2v2m2-2v2m2-2v2m2-2v2m3-2v2m2-2v2m2-2v2m2-2v2m-30 0v2m2-2v2m2-2v1.5m4-1.5v1m2-1v1.5m3-1.5v1.5m2-1.5v1.5m2-1.5v1m2-1v1m2-1v1m2-1v1m5-1v2m2-2v2m-30 0v2m0 0v2m0 0v2m-1 0v1m2-1v1m-1 0v1.5m2-1.5v1.5m53-23.5v2m0 0v2m0 0v2m0 0v2m0 0v2m0 0v1m0 0v2m0 0v2m0 0v2m0 0v2m0 0v2m0 0v1m0 0v1m0 0v1m0 0v2m-23-26v2m2-2v2m2-2v2m3-2v2m2-2v2m2-2v2m2-2v2m3-2v2m2-2v2m2-2v2m2-2v2m-21 0v2m2-2v2m2-2v2m2-2v2m3-2v2m2-2v2m2-2v2m2-2v2m2-2v2m3-2v2m-21 0v2m3-2v2m2-2v2m2-2v2m2-2v2m3-2v2m2-2v2m2-2v2m2-2v2m2-2v2m-20 0v2m2-2v2m2-2v2m2-2v2m3-2v2m2-2v2m2-2v2m3-2v2m2-2v2m2-2v2m2-2v2m-22 0v2m3-2v2m2-2v2m2-2v2m3-2v2m2-2v2m1-2v2m3-2v2m2-2v2m2-2v2m-20 0v1m2-1v1m3-1v1m2-1v1m2-1v1m2-1v1m2-1v1m2-1v1m3-1v1m2-1v1m2-1v1m-21 0v2m2-2v2m2-2v2m2-2v2m2-2v2m2-2v2m2-2v2m2-2v2m3-2v2m2-2v2m2-2v2m-22 0v2m2-2v2m2-2v2m2-2v2m2-2v2m2-2v2m2-2v2m2-2v2m3-2v2m2-2v2m2-2v2m-20 0v2m2-2v2m2-2v2m3-2v1.5m2-1.5v2m1-2v2m3-2v2m1-2v2m2-2v2m2-2v2m3-2v2m-22 0v1.5m11-1.5v1m2-1v2m3-2v2m2-2v2m2-2v2m2-2v2m-8 0v1.5m2-1.5v2m2-2v2m2-2v2m2-2v2m-6 0v1m2-1v1m2-1v1m2-1v1m-5 0v1m3-1v2m2-2v2m-4 0v1m2-1v2m5-26v2m2-2v2m2-2v2m3-2v1m-7 1v2m2-2v2m3-2v1m-5 1v2m2-2v2m2-2v1m-4 1v2m3-2v1.5m-4 .5v2m3-2v2m-2 0v1m2-1v1m-2 0v2m2-2v2m-2 0v2m2-2v2m-2 0v2m3-1v1m-3 0v2m2-2v2m-3 0v2m3-2v2m2-2v2m-4 0v2m3-2v2m2-1.5v1.5m-5 0v3m2-3v3m2-3v3m2-2.5v2.5m-121 0v2m0 0v3m0 0v3m0 0v3m0 0v1m0 0v2m0 0v3m0 0v2m-17-19v2m3-2v2m4-2v2m3-2v2m4-2v2m-13 0v2m3-2v3m4-3v3m3-3v3m3-3v3m-10 0v2m4-2v3m4-3v3m3-3v3m-7 0v3m4-3v3m3-3v3m-7 0v3m4-3v3m4-3v3m-8 0v1.5m4-1.5v3m3-3v3m0 0v2m5-19v2m3-2v2m4-2v2m3-2v1m-11 1v3m3-3v3m4-3v1m-6 2v3m0 0v4m0 1v1m-1 3v2m117-19v2m0 0v2m0 0v1m0 0v2m0 0v2m0 0v2m0 0v1m0 0v2m0 0v2m0 0v3m0 0v2m0 0v3m-9-24v2m3-2v2m2-2v2m-4 0v3m2-3v3m3-3v3m-5 0v2m3-2v2m3-2v2m-5 0v2m3-2v2m-5 0v1.5m3-1.5v3m3-3v3m-3 0v2m3-2v2m-3 0v2m2-2v2m3-2v2m-3 0v3m3-3v3m-1 0v2m4-21v2m0 0v2m0 0v3m2-3v3m-1 0v2m2-2v2m-2 0v2m3-2v2m-5 0v3m3-3v3m-1 0v2m2-2v2m-3 0v3m3-3v3m-2 0v2m3-2v2m-3 0v3m3-3v3m-1 0v1m-4-1v1m2-1v1" fill="none" stroke="#000" stroke-width="1" shape-rendering="crispEdges"/><path d="M289.5 271.5l-.5 3.5l-1.5 4l-.5 3.5l0 4M287 286.5l-1 3.5l-.5 3.5l-1.5 3.5l-.5 4l1 4.5l1 4l1.5 4l1.5 4l.5 4l1 4l2 3.5l1.5 3.5l2 3.5M295.5 336l1.5 4.5l2.5 2l2 3l3 2l3 1.5l2 3l2 3.5l1.5 3l1.5 4l2 3l2 3M318.5 368.5l3 3l3 2.5l2 4M289.5 271.5l3.5 1l3 1l3 1.5l3 1M302 276l3.5-.5l3-.5l3.5-1.5l3-1l3-.5l3.5-.5l3-.5l3.5 .5l4 .5l3.5 1l3 1.5l3.5 1l3.5 1l3.5 0l3.5 2.5l3.5 2l3.5 2M359.5 283l4 .5l3.5 1.5l3.5 0l3.5 .5l3.5 0l3.5-1l3.5-.5l4 .5M388.5 284.5l2.5 1.5l3 1.5l2.5 2l2.5 2M399 291.5l3.5 1.5l4 .5l3.5 1.5l3 0l3.5 0l3 1l3.5 .5l3 0l3.5 .5l3.5 .5l3 0l3.5 .5l2.5 0M289 341.5l3-3l3.5-2.5M295.5 336l3-1.5l3.5-1l2.5-2.5l3-1.5l3-2.5l3-2l2.5-2.5l3.5-2l3-1.5l3.5 1l3.5 0l3 0l3.5 0l3.5 0l3.5 0l3.5-.5l3.5-.5l3.5 .5l3.5 .5l3.5 .5l3.5 0M364 320.5l3.5-1l3-1l3.5-.5l3-1l3-1l3.5-1.5l3.5 0l3.5 0l3.5 .5l3.5 .5l3.5 .5l3.5 .5l3.5 0l3.5 .5l3.5 .5M415 317.5l3.5 0l3.5 .5l3.5 .5l3.5 .5l3.5-.5l3.5-.5l4 0l2 0M359 336l3.5 0l3-.5l3-1l3.5-.5l3-.5l3-.5l3.5 0l3 0l3.5-.5l3-1l3-.5l3.5-.5l3 0l3.5-.5l3-.5l3-1l3.5-1M413.5 327.5l3 .5l3.5 .5l3.5 .5l3.5 .5l3.5 .5l3 .5l3.5 .5l3.5 .5l1.5 0M327.5 362.5l3.5 0l3.5 1l3.5 0l3.5-1l3 0l3.5-.5l3.5-.5l3.5-.5l3.5-.5l4 0l3.5-.5M366 360l3.5 .5l3.5 0l3.5-1l3.5-1l3.5 0l3.5-.5l3.5 .5l4 0l3.5 1.5l3.5 1M401.5 361l3.5 0l3.5 0l3.5 0l3.5 0l3.5 0l3.5-.5l3.5-1l3 0l3.5 .5l3.5 0M436 360l3.5 0l2.5 0M318.5 368.5l4.5 0l2.5 .5M325.5 369l1.5 .5l4 .5l3.5 1.5l3.5 0l3.5-.5l3 .5l4 0l3.5 0l3.5 0l3.5 1l4 0M363 372.5l2 3.5l3 3l3 2.5M371 381.5l3-.5l3-1l3.5 .5l3 .5l3.5-.5l3.5 .5l3.5 .5l3.5 0l3.5-.5M401 381l2 4M403 385l3.5 2.5l4.5 1l4 1.5M415 390l3 0l3.5-.5l3.5 .5l3.5 1l3.5 1l3.5 .5l4 0l2.5 .5M415 390l4.5-2l4.5-.5l4-2l4.5-1.5l1.5-1l3.5-1l3.5 0l1 0M401 381l.5-3.5l0-3l-.5-3.5l0-3.5l.5-3.5l0-3M401.5 361l2-2.5l3-2l3-2l2.5-2l3-2l2.5-2.5l-1-3l.5-3.5l-1-3l0-4l-1.5-3.5l-1-3.5M413.5 327.5l0-3l.5-3.5l1-3.5M415 317.5l-2-2.5l-2-2.5l-3-2l-2-2.5l-2-2.5l-1.5-3.5l-.5-3.5l-1-4l-2-3M326.5 378l-.5-3.5l.5-3l-1-2.5M325.5 369l0-1l2-5.5M327.5 362.5l3-3l4-1l3.5-2.5l3-3l2.5-1.5l3-1.5l2.5-2.5l3-1l3.5-4l1.5-3.5l2-3M359 336l0-5.5l1.5-3.5l1.5-3.5l2-3M364 320.5l-.5-3.5M363.5 317l-1-4l-1.5-3.5l-1-4l3-4.5l0-4l-1-3.5l-1.5-3.5l-.5-3.5l-.5-3.5M359.5 283l3.5-4.5l2.5-3.5l3-3l-2.5-3l0-4l-2.5-3.5M287 286.5l3.5-1l3.5 .5l3.5 0l3.5 0l3.5 .5l3.5 0l3.5-1l3 0M314.5 285.5l3 2l2.5 2l3 2l2.5 2l3 2l2.5 2l2.5 2.5l2.5 2.5l3 2l3.5 1.5l3 1.5l3 1.5l3.5 1.5l3 1l3 2l2.5 2l3 1.5M388.5 284.5l3-1l3 0l3.5-.5l3-.5l3-1.5l3.5-1l3-.5l3.5-.5l3 0l3.5-.5l3 0l3.5-.5l3.5 0l3-.5l3.5 0l3 0l2 0M436 372l-.5-4l0-4l.5-4M326.5 378l3.5 0l3.5 0l4 .5l3.5 0l3.5-.5l3.5 0l3.5-1l3.5 0l3 0l3.5-.5l3.5 .5M363 372.5l0-4l1.5-4.5l1.5-4M371 381.5l0 6.5M302 276l.5 2.5l3 1.5l3.5 1.5l3 2l2.5 2M442 359.5l-2.5 .5l-3.5 0M436 372l3 1l3 1M440 267l2 0" fill="none" stroke="#e00008" stroke-width="1.1" stroke-linejoin="round"/><path d="M515.5 355.5l-2.5 2.5l-3 1.5l-3 2l-3 2M505.5 379.5l2.5-2.5l2.5-2l2.5-2M523.5 290.5l4 1l3.5 1.5l4 .5M535 293.5l1-3.5l1-4l1.5-3.5l.5-3.5M591.5 421l-3 .5l-3.5 .5l-2.5 1.5l-3.5 1.5M591.5 421l-3 .5l-3.5 0l-3 0l-3.5 0M520 397.5l-3.5 .5l-3.5-.5l-3.5-1l-3-.5M512.5 394l-3.5-2l-3-2l-3-2M503 388l-2.5 4l-3 4M553.5 388.5l5 0l4-2.5M530 380.5l-1-3.5l.5-3.5l0-3l.5-3.5M574.5 412l1.5 3l.5 3.5l1 3.5l1.5 3M574.5 304.5l1 1M579.5 314l.5 1M552 292l3 2l3 2.5l3 2.5l3 2.5M528 342.5l-3-2.5l-2.5-3l-3.5-1.5M505 336l2.5-3l2-3l1-3.5M586.5 409l-4.5-1M578.5 421.5l1-3.5l1-3.5l1-3.5l.5-3M592.5 328.5l-1 3.5l-1 3l-1.5 3.5l0 3M592.5 328.5l.5 3.5l.5 3.5l2 3l1 3M581 331l4 0l3.5-2.5l4 0M592.5 328.5l-5.5-3M581 331l3-3l3-2.5M589 341.5l-2.5-2.5l-1.5-2.5l-2-2.5l-2-3M480 332.5l-1.5-3l-1.5-3.5l-2-3l-2.5-3M466.5 334l1.5-3.5l2-3l2-3.5l.5-4M472.5 320l1-4l1-4l.5-4M497 346l1.5-3.5l2-3l2-3l1.5-3M497.5 396l-3-1.5l-2.5-2.5l-2.5-2l-2.5-2M487 388l1 3l1 3l2.5 3M501.5 374.5l4-1l3.5-.5l4 0M472 377.5l-3-2l-3-2l-3-2l-3-2M472 377.5l-.5 4.5l-2 4.5M487 388l-2.5-3.5l-2-4M553.5 388.5l.5-4.5l2.5-4M556.5 380l-3-2.5l-3-2.5l-3.5-1l-3.5-2M540.5 394l3.5-1.5l3-1l3.5-1l3-2M540.5 394l-3.5 .5l-3 0l-3.5 0l-3.5 0M545 363.5l-4 1l-3.5 .5l-4 .5l-3.5 1.5M519 381l-2 3l-2 3l-1 4l-1.5 3M525.5 388l-3 1.5l-3.5 1.5l-3.5 1.5l-3 1.5M575.5 400l-3.5-1.5l-3.5-1.5l-3.5-1.5l-3.5-1.5M587.5 318l1-4l3-3M581 331l-4 3l-4 2.5M564 301.5l-3 1.5l-1.5 3.5M574.5 304.5l-3.5-1l-3.5-1.5l-3.5-.5M565.5 304.5l.5 3l0 3.5l.5 3M560 332.5l3 1l3 2l4 .5l3 .5M563 347.5l2.5-2.5l2.5-3l3-2l2-3.5M560 340l-3.5 .5l-3 1l-3.5 1M563 347.5l-3.5-1l-3-1.5l-3-1.5l-3.5-1M525 304l2 5.5M555.5 318l-4-2l-4-2M566.5 314l-2-2.5l-3-2l-2-3M523.5 321l-1.5 3l1 3.5M552 292l-3-1.5M543 285.5l-1.5-1M550 342.5l-4 0l-4-1.5l-4-1M538 340l-2.5 2.5l-3 1.5l-2 2.5M538 340l3 2.5l2 3l3 2M566 377l1-4l1-4M566 377l-1.5 3l-1.5 2.5l-.5 3.5M556.5 380l3.5-.5l2.5-2l3.5-.5M575 362.5l.5 3.5l.5 3.5l2 3M626 303.5l-1.5 4l-1 4l-.5 4.5M615 311l3.5 3l4.5 2M608 318.5l.5-3.5l1-3.5l-.5-4l.5-4M608 318.5l2-2.5l3-2l2-3M608 318.5l-2-3l-2-3.5l-1.5-4l-2.5-3M616.5 331l1.5 1.5M618.5 332.5l.5 .5l2 2.5l2.5 2M613.5 333.5l-4.5-.5l-4-1.5M613.5 333.5l-3-2l-2-3M496.5 300l-1.5-3.5l-1-4l-1-3.5l-2-3M503 297l-3.5 1.5l-3 1.5M525 304l0-3.5l-1-3.5l-.5-3l0-3.5M512 298.5l2.5-2.5l3-1.5l3-2l3-2M501.5 374.5l-3.5 2.5l-4 2.5M491.5 373l-2.5 2.5l-3 2.5l-3.5 2.5M470.5 406l-2.5-3.5l-1-3.5l-2-3.5M470.5 406l-3.5-1.5l-3-2.5l-4-.5M525.5 388l3 1.5l3 1.5l3 1.5M580.5 395l-2 4l-2 4M580.5 395l-2.5 2.5l-2.5 2.5M581.5 326l-3.5 0l-4 0l-3.5 0M555.5 318l2 3l2.5 3l2 3M575 362.5l-2.5-2l-2.5-2.5l-3-1.5l-3-2M564 354.5l1 4l1.5 3.5l.5 3.5l1 3.5M535.5 304l-3 1.5l-3 1.5l-2.5 2.5M537.5 312.5l3 1.5l3.5-.5l3.5 .5M535.5 304l1.5 2M544.5 311l3 3M539 329.5l3 2.5l2.5 3l3 1.5l3.5 2M575.5 388.5l-3-2.5l-2-3l-2.5-3l-2-3M575.5 388.5l-3.5-.5l-3-.5l-3.5-1l-3-.5M578 372.5l-4 1.5l-4 1.5l-4 1.5M592.5 377.5l.5-3.5l.5-3.5l.5-3M584.5 369l0 3l-.5 3.5l-.5 3.5l.5 3.5M584.5 347.5l3 3l3 3M605 331.5l2 4l1.5 4l2 4M592.5 328.5l4-1l4.5-.5l4-1M605 331.5l0-5.5M605 326l1-4l2-3.5M619.5 304l-3 3l-1.5 4M609.5 303.5l3-1.5l1.5-1.5M618 299l3.5-1.5M613.5 317l5-1l4.5 0M608 318.5l5.5-1.5M626.5 318.5l-1 4l1.5 3.5M510 291.5l3-1l3.5 0l3.5 0l3.5 0M510 291.5l2.5-3l1.5-3.5l2.5-2.5l3-3M510 291.5l0 4l2 3M505.5 277.5l.5 3.5l1.5 3.5l2 3.5l.5 3.5M510 291.5l-3.5 2.5l-3.5 3M516.5 315l-2 4l-2 3.5l-2 4M516.5 315l3.5-2l3.5-1l3.5-2.5M570.5 309l.5 1.5M571.5 314l.5 3l2 3.5M570.5 309l1 1M577 314l3 1M574 320.5l-2.5-2l-2-3l-3-1.5M563 320.5l3.5-.5l4 0l3.5 .5M555.5 318l-1.5-4.5l-2-4M551.5 304.5l-2 3l-.5 3.5l-1.5 3M552 309.5l-4.5 4.5M552 309.5l4-1l3.5-2M528 322.5l0-4.5l0-4l-1-4.5M523.5 321l2-3.5l0-4.5l1.5-3.5M531.5 332.5l2.5 2l2 3l2 2.5M531.5 332.5l-1.5-3.5l0-3.5l-2-3M531.5 332.5l-4-3l-4.5-2M639 292l1.5 2M639 292l3-.5l3-1.5l3.5 0M649.5 294l2 4.5l1 4.5M640.5 294l2 3.5l2 4l1 4M637 307l4-1l4.5-.5M637 307l-3.5 2.5l-2 3l-2 3.5l-3 2.5M637 307l.5-3.5l1-3l1.5-3.5l.5-3M662 300l-1.5 3M659.5 304.5l-1.5 1.5l-2 3M662 300l2.5-2.5l2.5-2l3-1.5l2.5-2.5M662 300l-3 1l-3.5 1l-3 1M575.5 388.5l-1 4l-1.5 3.5M576.5 350l.5-3l1.5-3l.5-3.5l1.5-3M576.5 350l-1-3l-1.5-3.5l-.5-3.5l-.5-3.5M563 347.5l3 1l3.5 1.5l3.5 0l3.5 0M578 362l-.5-4l-1.5-4l.5-4M576.5 350l-.5 4l-2 3.5M586 360l2-3.5l2.5-3M576.5 350l2.5 2.5l2.5 2.5l2.5 2.5l2 2.5M586 360l3 2l2.5 2.5l2.5 3M593.5 354l0 3.5l0 3l-.5 3.5l1 3.5M600 371l-3-2.5l-3-1M600 371l3.5-2l3.5-1.5M598 344.5l4.5 .5l4-.5l4 1M598 344.5l-1.5-3M616.5 331l-1.5-3.5l-.5-3.5M608 318.5l0 3.5l-.5 3l1 3.5M504 308l3-2.5l2-4l3-3M512 298.5l2 3l1 3.5l1 3M516 308l.5 3.5l0 3.5M516 308l3.5 .5l4 0l3.5 1M504 308l4-.5l4 .5l4 0M574 320.5l3.5-1l3.5-1.5M574 320.5l4 2l3.5 3.5M581 318l6.5 0M581 318l2.5 4.5l3.5 3M645 295.5l4.5-1.5M647 300l-3-3.5l-3.5-2.5M645 295.5l3.5-5.5M645.5 305.5l2.5 2.5l2.5 3l3 2M561.5 394l3-2l4-.5M600 361l1-3l-1-3.5M611 357l-3.5 1.5l-4 1l-3.5 1.5M611 357l-1.5 3.5l-1 3.5l-1.5 3.5M611 357l2.5-3l2.5-3l2.5-2.5M610.5 345.5l4 2l4 1M611 357l-.5-3.5l0-4l0-4M624.5 321.5l-1.5-5.5M508.5 311.5l1 4l.5 3.5l.5 3.5l0 4M504 308l-3 2.5l-3 2l-3 2M644.5 313.5l-2.5-2.5l-2.5-2l-2.5-2M644.5 313.5l4.5 0l4.5-.5M645 311l4.5 .5l4 1.5M600 354.5l4 0l4 .5M600 354.5l-3.5-4.5M600 354.5l-.5-3.5l-1-3l-.5-3.5M592.5 345.5l-1.5 4l-.5 4M596.5 350l-3.5 1l-2.5 2.5" fill="none" stroke="#e00008" stroke-width="0.9" stroke-linejoin="round"/><path d="M442 298l1 0l3 .5l3.5 .5l3 0l3.5 .5l3.5 0l3 0l3.5 .5l3.5 0l3 .5M472.5 300.5l3.5-.5l3.5-.5l3.5 .5l3 .5l3.5-.5l3.5 0l3.5 0M496.5 300l4 0l3.5 0l4-1.5l4 0M512 298.5l3.5 1.5l3 1l3 1.5l3.5 1.5M525 304l1 1.5M526 305.5l1.5 1l3.5 2l3.5 2l3 2M537.5 312.5l2 2M539.5 314.5l4 0l4-.5M547.5 314l3-.5l3.5-.5l3 1l1 0M558 314l2.5 0l3 0l3 0M566.5 314l3.5 1l3.5 .5l3-1l3.5 .5M580 315l3.5-1.5l4-1.5l4-1M591.5 311l3-1.5l2.5-2.5l3-2l4.5-1.5l5 0M609.5 303.5l3 .5l3.5 .5l3.5-.5M619.5 304l3.5-.5l3 0M626 303.5l3.5 2l3.5 .5l4 1M637 307l4 1.5l4 2.5M645 311l4 0l3.5-1.5l3.5-.5M442 318l1.5 0l3.5 0l3.5 0l3.5 0l3.5 .5l3.5 1M461 319.5l4 .5l4 0l3.5 0l5.5-3M478 317l3.5-.5l3.5-.5l3.5 0l3-.5l3.5-1M495 314.5l3.5-.5l3.5 0l3.5 .5l3.5 0l3.5 .5l4 0M516.5 315l3.5-.5l3.5 .5l3.5 0l3.5-1l3.5-1l3.5-.5M566.5 314l3.5 0l3.5 .5l3 0l3.5 .5M580 315l3.5 2l4 1l3.5 0l.5 0M591.5 318l3-.5l3 0l3.5 .5l3.5 .5l3.5 0l3.5 .5l2.5 0M614 319l1.5 0l3.5 0l1.5 0M620.5 319l2 0l4-.5M626.5 318.5l4.5 .5l4 2M442 331.5l2 .5l3.5 .5l3 .5l3.5 .5M454 333.5l4 .5l4 .5l4.5-.5M466.5 334l3 0l3.5-.5l3.5-1.5l3.5 .5M480 332.5l4 0l3.5 0M487.5 332.5l3.5 .5l3.5-.5l3-.5l3.5 1l3 .5M504 333.5l4 0l3.5 1l4 1.5l3.5-.5M519 335.5l4-1l4.5-1l4-1M531.5 332.5l4-1l3.5-2M539 329.5l4.5-1l4.5-1M548 327.5l3.5 0l3.5-.5l3.5 0l3.5 0M562 327l4.5-1l4 0M570.5 326l3.5-.5l3 0l3.5 .5l1 0M581.5 326l2.5 0l3-.5l5-3M592 322.5l3.5 .5l1 .5M596.5 323.5l2 1l3 1l3.5 .5M605 326l3.5 2.5M608.5 328.5l4 1l4 1.5M442 360l1 0l3.5 0l3.5 .5l3-.5l3.5-.5l3.5-.5l2-.5M462 358.5l1.5 0l3.5-.5M467 358l3.5 0l4 0l3.5 0l4 0l3.5 .5l3.5 0M489 358.5l3.5 2l4 1l4 1l3.5 1M504 363.5l3.5-1l3-1l3-1l3.5 .5l3-.5M520 360.5l3.5-1l3.5-1l3.5-1l3-.5l3.5-1l3.5-1.5l3-1.5M543.5 353l3.5 0l3.5 0l3.5 .5l3.5 .5l3.5 .5l3 0M564 354.5l3.5 1.5l3 1l3.5 .5M574 357.5l3-1l3.5-1l3-1l2-.5M585.5 354l1.5 0l3.5-.5l3 .5M593.5 354l3.5-1l3 1.5M600 354.5l2 1.5M602 356l2 3M604 359l.5 .5l1 4l1.5 4M442 393l1 0l4 .5l3.5 .5M450.5 394l3.5 1.5l3 3l3 3M460 401.5l3.5-.5l4 0l3.5 0l4-.5l3.5-1l3.5-.5M482 399l4.5-1.5l5-.5l3 .5l3-1.5l4.5-1l4.5 1M506.5 396l6-2l4 1l3.5 2.5M520 397.5l4-.5l3-2.5M527 394.5l3.5-1.5l4-.5M534.5 392.5l6 1.5l3.5 0l3.5 0l3.5-.5l3.5-.5l3.5 .5l3.5 .5M561.5 394l4 1l3.5 .5l4 .5M573 396l3.5-1.5l4 .5M442 382l2.5 0l3.5-1l3-1M451 380l3.5-.5l3.5 0l3.5-1l3.5-1l3.5 0M468.5 377.5l3.5 0M472 377.5l3.5 1.5l4 0l3 1.5M482.5 380.5l4-1l3.5 .5l4-.5M494 379.5l3.5 0l4 0l4 0M505.5 379.5l3.5-.5l3.5 1.5l3 .5l3.5 0M519 381l4 .5l3.5-1l3.5 0M530 380.5l3-2l3.5-2M536.5 376.5l3.5-2.5l3.5-2M543.5 372l3.5 .5l3.5-.5l3-1.5l3.5 0l3.5 0M560.5 370.5l3.5 0l3.5 0l3.5 1l3.5 1l3.5 0M578 372.5l3.5-2l3-1.5M584.5 369l5-1l4.5-.5M590.5 427.5l.5-3.5l.5-3l-.5-4.5l-2.5-3.5l-2-4l-1.5-2.5l-.5-3.5M584.5 403l-2-4l-2-4M580.5 395l.5-3.5l.5-3l1.5-3l1-3M584 382.5l2-3l2.5-3l1-1.5M589.5 375l1.5-1l1.5-3.5l1.5-3M594 367.5l2.5-3.5l3.5-3M600 361l3-1.5l1-.5M604 359l1.5-1.5l2.5-2.5M608 355l.5-5l2-4.5M610.5 345.5l0-2M610.5 343.5l0-3.5l1.5-3l1.5-3.5l3-2.5M616.5 331l3-2l3.5-1.5l4-1.5M627 326l3-1l2.5-2l2.5-2M635 321l3.5-3l4-1.5M642.5 316.5l4-.5l3.5-1.5l3.5-1.5l2.5-4M656 309l2-5l4-4l3-5l3.5-2l4-1.5l2.5-3l2-3l2-3.5M590.5 427.5l-3.5-1.5l-4 0l-4-1l-.5-3.5l-1-3.5l-1.5-3l-1.5-3M574.5 412l.5-4.5l1.5-4.5l-1-3l-2.5-4M573 396l-1.5-3l-3-1.5M568.5 391.5l-1-3.5l-1-3.5l0-4l-.5-3.5M566 377l-2.5-3l-3-3.5M560.5 370.5l-3-2.5l-1-3.5l-2.5-3.5M554 361l3.5-1.5l3.5-2l3-3M564 354.5l-.5-3.5l-.5-3.5l-1-4l-2-3.5M560 340l-1-4l1-3.5M560 332.5l2-5.5M562 327l1-6.5M563 320.5l2.5-3l1-3.5M566.5 314l4-5M570.5 309l-2-3l-3-1.5M565.5 304.5l-1.5-3l-.5-3.5l-1.5-3.5l-1.5-3.5l-1-3l-1-3.5M558.5 284.5l2.5-5M534.5 392.5l2-3l3-2l2.5-2.5l2.5-2.5l2.5-2M547 380.5l-1-4.5l-2.5-4M543.5 372l0-4.5l1.5-4l0-3.5l-1-3.5l-.5-3.5M543.5 353l2.5-5.5l3-2l1-3l1-4M551 338.5l0-4l-2-3.5l-1-3.5M548 327.5l-2-3l-3-3l-1.5-3.5l-2-3.5M520 397.5l-.5-3l0-3.5l0-3.5l-.5-3l0-3.5M519 381l1-3.5l.5-3.5l-.5-3.5l-.5-3l.5-3.5l0-3.5M520 360.5l1-3l.5-3.5l1.5-3l1-3M524 348l-.5-3l-1.5-3l-1.5-3.5l-1.5-3M519 335.5l1.5-4l2.5-4M523 327.5l3-2l2-3M528 322.5l2-3l2.5-2l2.5-2.5l2.5-2.5M452.5 415l2.5-3l1.5-3.5l1-4l2.5-3M460 401.5l2-3.5l3-2.5M465 395.5l2-3l1-3l1.5-3M469.5 386.5l-1-4.5l0-4.5M468.5 377.5l0-3l0-3.5l0-3l-.5-3.5l-1-3l0-3.5M467 358l-.5-4l1-3.5l.5-4l0-4M468 342.5l0-4.5l-1.5-4M468 342.5l3-2.5l3-2.5l3-2l3-3M480 332.5l4-.5l3.5 .5M487.5 332.5l1-4l2-3.5l2-3l1.5-4l1-3.5M495 314.5l.5-3.5l.5-4l-.5-3.5l1-3.5M496.5 300l.5-5l0-5M497 290l3-2.5l1-4l2-3.5l2.5-2.5M442 277.5l1.5-.5l3.5 0l3.5 .5l3.5 .5l4 0l3.5-.5l3.5-.5l3.5-.5l3.5 0M472 276.5l3 2l3.5 1l3.5 1l3 1.5l3 2.5l3 1.5M491 286l3 2.5l3 1.5M497 290l4.5 0l4 .5l4.5 1l2.5 2l2.5 2.5l2 2.5l2.5 2l2.5 1.5l3 2M525 304l1 0M526 304l2.5-.5l3.5 0l3.5 .5M535.5 304l0 4.5l2 4M539.5 314.5l3-1.5l3-2l3.5-.5l3-1M552 309.5l3.5-.5l3 .5M558.5 309.5l1 0l3.5 1l3.5-.5l4-1M570.5 309l4-4.5M487.5 332.5l-1.5-3.5l-1.5-3.5l-2-2.5l-3-3l-1.5-3M478 317l-2-4.5l-1-4.5l-1-4l-1.5-3.5M472.5 300.5l0-3.5l-.5-3.5l-.5-3l0-3.5l.5-3.5l.5-3.5l-.5-3.5M472 276.5l-.5-3.5l-1-4M470.5 269l-1-3.5l-.5-4M460 369.5l2-2.5l2.5-2.5l1-3.5l1.5-3M467 358l3.5-1.5l3.5-2l4-1M478 353.5l4-1.5l3-3l3.5-2.5M488.5 346.5l4-1.5l4.5 1M497 346l3.5-1.5l3-1.5l3-1.5l3.5-1l3-1.5l3-1.5l3-2M472 377.5l3-1.5l3.5-.5l3.5-.5l3-1l3.5-.5l3-.5M491.5 373l3.5-2l3.5-2l2.5-3.5l3-2M519 335.5l3.5 1l3 .5l3 1l.5 0M529 338l2.5 1l3.5 1l3 0M538 340l3.5-.5l3-.5l3-.5l3.5 0M551 338.5l4.5 1.5l4.5 0M560 340l3.5-1l3-.5l3.5-1.5l3-.5M573 336.5l4 1l3.5 0M580.5 337.5l4.5 1.5l4 2.5M589 341.5l3.5 0l4 0M596.5 341.5l2-2.5M598.5 339l4 1l3.5 2.5l4.5 1M610.5 343.5l4 2.5l4 2.5M564 354.5l3-1l3.5-.5l3-1l3-2l4-1.5l4-1M584.5 347.5l4 0l4-2M592.5 345.5l4-4M598.5 339l2-3l2-2l2.5-2.5l3.5-3M608.5 328.5l3-2.5l3-2M614.5 324l3-2.5l3-2.5M620.5 319l2.5-3M623 316l-1.5-5M621.5 311l-.5-3.5l-1.5-3.5M619.5 304l0-3.5l2-3M547 380.5l4.5-.5l5 0M556.5 380l1.5-3l1-3.5l1.5-3M560.5 370.5l3.5-1l4-.5M568 369l3.5-3l3.5-3.5l3-.5M578 362l4-.5l4-1.5M586 360l3.5-3.5l4-2.5M593.5 354l3.5 0l3 .5M600 354.5l2.5-2.5l2.5-2.5l3-1.5l2.5-2.5M584.5 369l.5-4.5l1-4.5M586 360l0-4l-.5-2M585.5 354l-1-2l0-4.5M584.5 347.5l1.5-3.5l3-2.5M589 341.5l-4-2l-4.5-2M580.5 337.5l0-3l.5-3.5l.5-5M581.5 326l-.5-4l0-4l-1-3M551 338.5l3-2l3.5-1.5l2.5-2.5M560 332.5l3.5-2.5l3.5-2l3.5-2M570.5 326l2.5-2l1-3.5l2.5-3.5l3.5-2M580.5 337.5l3-2l3-2.5l3-2l3-2.5l-.5-6M592 322.5l-.5-3.5l0-1M591.5 318l1-3.5l-1-3.5M592 322.5l3.5 1l1 0M596.5 323.5l2 .5l3 1.5l3.5 .5M605 326l4.5-1.5l5-.5M614.5 324l3-1.5l4 .5l3-1.5M624.5 321.5l3.5 0l3.5-.5l3.5 0M614.5 324l4 0l4 1l4.5 1M635 321l0-3.5l.5-3.5l.5-3.5l1-3.5M637 307l.5-3.5l1.5-4l-.5-3.5l.5-4M642.5 316.5l2-3l.5-2.5M645 311l.5-5.5l1.5-5.5M647 300l2.5-6l-1-4M656 309l-2.5-2.5l-1-3.5l-5.5-3M647 300l-2-4.5l-4.5-1.5M548 327.5l2-3.5l3-3l2.5-3M555.5 318l2-3.5l.5-.5M558 314l0-3.5l.5-1M558.5 309.5l1-3M559.5 306.5l6-2M565.5 304.5l4.5 0l4.5 0M516.5 315l3.5 3l3.5 3l4.5 1.5M528 322.5l5 2.5M533 325l4 1l1.5 .5M538.5 326.5l2 0l4 .5l3.5 .5M548 327.5l4.5 .5l3.5 2.5l4 2M524 348l2-3l2-2.5M528 342.5l1-3.5l0-1M529 338l1-2.5l1.5-3M531.5 332.5l1-4l.5-3.5M533 325l1.5-3l1-3l.5-3.5l1.5-3M554 361l-3-1.5l-2.5-2l-2.5-2l-2.5-2.5M543.5 353l-3-2l-3-2l-3.5-.5l-3.5-2M530.5 346.5l-2.5-4M520 397.5l2.5-2.5l1-4l2-3M525.5 388l1.5-4l3-3.5M530 380.5l3.5-1.5l3-2.5M536.5 376.5l0-.5l3.5-2l3.5-2M543.5 372l2-3l3-2.5l3.5-2l2-3.5M566 377l3.5 1l3.5 1.5l3.5 2l4 0l3.5 1M592.5 377.5l-3-2.5M589.5 375l-2.5-3l-2.5-3M584.5 369l-2-2.5l-1.5-3l-3-1.5M578 362l-4-4.5M574.5 412l4-2l3.5-2l2.5-5M482 399l-1.5-3l-1-3l-1-3.5l-1.5-3l-1-2M476 384.5l-.5-1l-2-3l-1.5-3M467.5 413l-2-3l-2-2.5l-1.5-3l-2-3M535.5 304l-.5-3.5l0-3.5l0-3.5M527 309.5l-.5-3l-.5-1M526 305.5l0-1.5M526 304l0-1l0-3l-.5-3.5l-1-3l-1-3M621.5 311l4-1l4 0l3.5-2l4-1M482 399l-2.5 2l-3 1.5l-3 2l-3 1.5l-1.5 3.5l-1.5 3.5M467.5 413l.5 3.5l0 3.5l-1 3.5l0 3M482 399l2.5-3.5l.5-4l2-3.5l2-3l2-3l3-2.5M494 379.5l-1.5-3.5l-1-3M491.5 373l-1-3.5l-1-3.5l.5-4l-1-3.5M489 358.5l0-4l0-4l-.5-4M488.5 346.5l-1-3.5l.5-3.5l0-3.5l-.5-3.5M520 360.5l-2-2.5l-2.5-2.5l3.5-2l2-3.5l3-2M520 360.5l3.5 2l3 2l3.5 2.5l3 1.5l4 .5l3 1.5l3.5 1.5M519 381l3.5 3l3 4M525.5 388l1 3l.5 3.5M519 381l-2.5-2.5l-1.5-3l-2-2.5l-2-3l-1.5-2.5l-3-1.5l-2.5-2.5M505.5 379.5l-2-2.5l-2-2.5l2-3.5l0-4l.5-3.5M503 388l-3-3l-3-2.5l-3-3M506.5 396l-2.5-3.5l-1-4.5M503 388l2-4l.5-4.5M547 380.5l2.5 2.5l1.5 3.5l2.5 2l3 1.5l2.5 2l2.5 2M556.5 380l2 3.5l4 2.5l3 2.5l3 3M568.5 391.5l3.5-.5l3.5-2.5M575.5 388.5l3 3l2 3.5M575.5 388.5l2.5-2l3-2l3-2M578 372.5l2.5 3l2 3.5l1.5 3.5M568 369l3.5 .5l3 1.5l3.5 1.5M602 356l6-1M608 355l3-2.5l4-2l3.5-2M602 356l-2 5M600 361l.5 3.5l0 3l-.5 3.5l-2 2.5l-3.5 1l-2 3M611 357l-3-2M596.5 350l-3 4M598 344.5l-5.5 1M598 344.5l4-1l4.5 0l4 0M596.5 350l1.5-5.5M598 344.5l.5-5.5M623.5 337.5l-1 4l-2 3.5l-.5 .5M619.5 346.5l-1 2M623.5 337.5l2-3.5l.5-4l1-4M613.5 317l.5 2M614 319l0 1.5l.5 3.5M613.5 317l1.5-6M615 311l-3-3.5l-2.5-4M615 311l3 1l3.5-1M623 316l3.5 2.5M626.5 318.5l-2 3M624.5 321.5l2.5 4.5M626 303.5l-2 4l-2.5 3.5M551.5 304.5l.5 5M551.5 304.5l4 1l4 1M559.5 306.5l3.5 1l4 .5l3.5 1M551.5 304.5l0-3l0-3.5l0-3l.5-3l2.5-2l1.5-3.5l2.5-2M561 279.5l-3.5 .5l-4-.5l-3.5 0l-3.5 0l-3.5 0l-4-.5M539 279l-3 0l-3.5-.5l-3 0l-3.5 1l-3.5 .5l-3-.5M519.5 279.5l-3.5 0l-3.5 0l-3.5-1l-3.5-1M541.5 284.5l-2.5-5.5M535 293.5l2-3l2-3l2.5-3M535 293.5l-4 3.5M531 297l2.5 3.5l2 3.5M531 297l-2-3l-3-1.5l-2.5-2M523.5 290.5l-1.5-3.5l-2-3.5l-.5-4M525 304l-3 1.5l-3.5 .5l-2.5 2l-3.5 2l-4 1.5M508.5 311.5l-3.5 1l-3.5-.5l-3.5 1l-3 1.5M504 308l4.5 3.5M508.5 311.5l4 2.5l4 1M504 308l-2-3l-3.5-2l-2-3M503 297l-3.5-3l-2.5-4M503 297l4.5 1l4.5 .5M510.5 326.5l4.5 0l4 .5l4 .5M523 327.5l3.5-1l3-1l3.5-.5M510.5 326.5l-3 .5l-3.5 1l-3 1l-3.5 .5l-3.5 .5l-3 1l-3.5 1.5M510.5 326.5l3 3l2 3.5l3.5 2.5M505 336l-1-2.5M505 336l-3 3l-2.5 3l-2.5 4M505 336l3.5 0l3.5 0l3.5 .5l3.5-1M547.5 314l0 3.5l-.5 3l.5 3.5l.5 3.5M555.5 318l3.5-1.5l4-1l3.5-1.5M555.5 318l3.5 1l4 1.5M563 320.5l4 2.5l3.5 3M570.5 326l1 3.5l.5 4l1 3M538 340l1.5 3.5l1 3l1 3.5l2 3M538 340l1-3.5l-1-3.5l1-3.5M539 329.5l-.5-3M538.5 326.5l-.5-3.5l0-3.5l.5-3.5l-1-3.5M530.5 346.5l-2 3l-1.5 3.5l-2 2.5l-2.5 2.5l-2.5 2.5M505.5 277.5l-3-1l-3.5-.5l-3.5-1.5l-3-1l-3.5-.5l-3.5-.5M485.5 272.5l-3.5-.5l-4-1l-4-.5l-3.5-1.5M485.5 272.5l2 3l1 3.5l1 3.5l1.5 3.5M497 290l-3 1.5l-3 .5l-3.5 1l-3 2l-2.5 1.5l-3 2l-3 1l-3.5 1M478 353.5l-2.5-3l-1.5-3.5l-3.5-2l-2.5-2.5M478 353.5l4 1l3.5 2l3.5 2M467 358l-3.5 .5l-1.5 0M462 358.5l-2 0l-3.5 0l-3.5 0l-3.5 0l-3.5 0l-3 1l-1 0M449 342l4-.5l3.5 .5l4 0l4 0l3.5 .5M449 342l1.5-3l1.5-3l2-2.5M442 374l.5 .5l2.5 2l3 1.5l3 2M446 387l2.5-4l2.5-3M446 387l2.5 3l2 4M442.5 402l3.5-.5l3.5 .5l3.5 .5l3.5-.5l3.5-.5M452.5 415l4-.5l3.5-.5l4-.5l3.5-.5M452.5 415l3 2.5l3 2.5l2.5 2.5l2.5 2.5l3.5 1.5M465 395.5l3.5 .5l3.5 .5l3.5 1l3 1l3.5 .5M469.5 386.5l3.5-1l3-1M476 384.5l.5-.5l3-2l3-1.5M446.5 294.5l3.5 1l3 1l3 1.5l3.5 .5l3.5 0l3 .5l3.5 .5l3 1M442 267l1 0l3.5 0l3.5 .5l3.5 .5l3.5 0l3 0l3.5 .5l3.5 .5l3.5 0M461 319.5l-1 3.5l-2 3.5l-2 3.5l-2 3.5" fill="none" stroke="#f00008" stroke-width="1.25" stroke-linejoin="round"/><path d="M505.6 277.6 511.3 274 518.5 270.4 524.2 268.6 526.3 265.8 531.3 266.1 533.5 262.2 542 262.9 547.1 263.3 549.9 268.6 557.1 269 558.5 275.8 560.6 279.4 556.3 277.6 548.5 278.3 539.2 279.4 534.9 276.5 531.7 275.8 536.3 272.6 530.6 274 525.6 276.9 517.7 278.9 514.2 276.2ZM540.6 314.1 544.9 312.3 547.8 308.7 547.4 304.4 545.6 299.4 546 296.5 547.8 292.2 552.1 290.1 556.3 285.5 558.1 284.4 558.1 283.3 552.8 282.4 547.1 283.5 541.3 285 537.8 289.4 534.9 293.3 538.5 291.2 542.4 288 538.5 294.4 537 298.7 535.6 303 536.3 307.3 537.4 311.6 538.5 314.1ZM574.6 304.4 573.5 299.4 571.4 296.7 568.5 297.6 564.2 299.8 564.2 298 567.8 295.1 568.5 291.5 567.8 288.7 562.8 285.8 558.1 284.4 558.1 283.3 564.2 282.9 563.5 281.2 570.6 281.5 577.8 282.2 580.7 282.9 586.4 283.7 591.4 288 593.5 291.5 591.4 293.7 585.7 293 582.8 288.3 579.9 288.3 582.8 293 579.9 297.2 579.6 302.3ZM567.4 313.6 569.9 311.2 574.2 311.6 579.2 309.4 584.9 306.9 590.7 307.3 595.7 305.5 600 305.5 593.8 309.6 588.5 311.7 579.9 315.1 572.8 315.1ZM598.9 302.5 593.5 302.3 596.4 299.9 606.4 297.6 613.5 298 617.1 295.8 619.3 298 619.3 300.5 610 302.6Z" fill="#0000f0" stroke="#0000d0" stroke-width="1.6" stroke-linejoin="round"/><path d="M428.2 208.5 430.6 203.5 434.4 198.5 438.1 196 441.8 197.3 439.4 201 435.6 204.7 431.9 209.2ZM445.6 232.1 448.1 227.1 450.5 224.1 454.3 224.6 453 229.6 454.3 234.6 456.8 239.6 459.3 243.3 461.7 248.3 465.5 250.7 464.2 252.5 460.5 250.7 458 245.8 454.3 242 451.8 238.3 449.3 234.6ZM458 228.4 461.7 225.9 465.5 223.4 468 225.9 470.4 230.8 472.9 237.1 476.2 242 478.7 245.8 477.2 250.7 474.2 249.5 472.9 244.5 469.2 239.6 464.2 237.1 460.5 233.3ZM485.4 259.5 487.9 255.7 490.3 257 492.8 260.7 490.3 263.2 486.6 263.2ZM326.5 174 331.8 174.6 336.4 175.9 343.6 175.9 354 175.3 356 172.7 363.2 170.7 369.7 167.4 373.7 164.2 378.9 162.2 388.1 162.2 388.7 163.9 382.8 164.4 377.6 165.5 372.4 168.1 365.8 170.1 359.3 169.4 351.4 166.1 350.1 165.5 346.2 167.4 342.9 166.1 338.3 163.1 339.6 165.5 343.6 168.1 339.6 171.4 334.4 173.3 329.8 173.3ZM371.7 191.6 375 193 378.9 189.7 384.1 187.1 389.4 186.7 398.5 186.4 409.7 188.4 398.5 187.7 390.7 188.4 385.4 189.3 380.9 191 376.3 193.2 373.7 193.6ZM530 253 533 250 536 252 536 257 532 258Z" fill="#0000f0" stroke="#000030" stroke-width="1"/><path d="M483.5 274l2-.5l2-1l3 0l2.5 1l2.5 .5l-2 1.5l-1 2.5l-2 2.5l-.5 3l1 2.5l2 2l3 0l1.5 2.5l2.5 1l2 1.5l2 1.5l2 .5l2 1l2 1.5l1.5 1l0 3l1 2.5l1.5 2l2 2l1 3l2 2l-2.5 2l-1.5 3l-2.5 2l-.5 2l-.5 2.5l-1 2l2.5 1.5l0 3.5l2.5 1.5l1.5 2l1 0M518 335l1.5 .5l1.5 2.5l.5 2.5l1.5 2.5l1 2l2.5 2.5M526.5 347.5l-.5 2l-2 1.5l-.5 2l-1 2l-1 3l-1.5 2.5l-2.5 2l-1 2.5l-.5 2.5l-1.5 1.5l-1 2l-1 2l-.5 2.5l2.5 2.5l-.5 2.5l-.5 2l-1.5 2l-1.5 2l-1 3.5l1.5 2l1 2l2 1.5l1.5 1.5l2.5 0l2 .5l2 2l1.5 1.5l2.5 3M367 283.5l-.5-3l-2.5-2l1-2.5l1.5-2l2-2l2.5 0l2-2l2 0l2.5 0l2-.5l2.5 0l2 .5l2 1l2.5 .5l2 0l2-.5l2.5-.5l2 0l2-.5l2.5-.5l2-1l2 0l2.5-.5l2-.5l2-.5l2.5 .5l2 0l2.5 .5l2 0l2.5 0l2 .5l2.5 1l2 1.5l2.5-.5l2.5 .5l2.5 .5l2.5 1l.5 3l3 1.5l.5 2.5l1.5 1.5l.5 2.5l-.5 2.5l0 2l0 2l0 2M445.5 292l0 .5l1 2l3 .5l2 2l2 1.5l1.5 2l1.5 2.5l2.5 .5l2.5 0l2 .5l2 .5l2 1M467.5 305.5l2.5 1.5l2.5 .5l2.5 .5l2 2l0 3l1 4l.5 1.5M478.5 318.5l.5 2.5l1.5 1.5l.5 2.5l2.5 1l2.5 1.5l0 3l1.5 2M487.5 332.5l2.5 0l2.5-1.5l2.5-.5l2.5 1l2 1.5l2 1l1.5 1.5l2 .5l2.5-1l2 0l2.5 0l2.5-.5l3 1.5l.5-1M518 335l1.5-.5M374.5 293.5l1-2.5l-1.5-3l-.5-2.5l2.5-.5l2.5 0l2.5-.5l2.5-.5l2.5 .5l2.5 0l2.5 0l2-1l2-1M395 282.5l.5 0l2-.5l2.5-1.5l2-.5l3 .5l2.5-.5l2-1l2.5-1l1.5-1.5l2-1.5l1-2.5l2.5-1.5l1.5-2M592 322.5l-2 0l-2-1l-1 4l-1.5 1.5l-2 1.5l-2 1.5l-1.5 1.5l-1 2l-2.5 1.5l-2 2l-2-1l-2-1l-2.5 .5l-3-.5l-3-.5l-2-2l-2.5 1.5l-2.5 1l-2 1.5l-2 2l-3 0l-2.5 2l-2.5 0l-2.5 0l-2.5 0l-2 1.5l-2 1.5l-1 2.5l-2.5 .5l-4 1M564 354.5l-2.5 .5l-2 1.5l-1.5 1.5l-1.5 2l-2.5 1l-2.5 1.5l-2.5 2l-2 1.5l-2.5-1l-2.5-.5l-2.5 0l-2.5-1.5l-3.5-1.5l0-2.5l0-2.5l1.5-2l.5-2.5l-1.5-2l-2.5-.5l-1-2.5M404 331l1.5 2.5l.5 3l2.5 .5l3-.5l2.5 1l2 .5l3 .5l2 2l2.5 0l2.5 0l2 0l2.5-.5l2-1l2.5 1l2.5 0l2.5 .5l3 0l3 .5l3 1l2-1.5l2.5-1l2.5-.5l2-1.5l2 1.5l2 0l2 1l2 1.5l2 1l1 2l1.5 2.5l1.5 1.5l1.5 2l2.5 1l2 2l2 1.5l2.5 1l2 2l2.5-1l2 2l2 0l2.5 0l2 1l2 0l2.5 1.5l2.5 .5l2 1.5l2 3.5l2 1.5l2 1l2.5 .5M438.5 364.5l2 0l2 0l2.5 0l2 .5l2-.5l2 1.5l2.5 0l2 0l2 1l2.5 1l2.5 0l2 1l2 1.5l2.5 0l2.5 0l2.5-.5l2.5-.5l2.5 .5l2.5-.5l2 1.5l3 .5l3-1l2 1.5l1 2.5l1 2.5l.5 2.5l1.5 2l2 1l1.5 2l2.5 1.5l1.5 2l2.5 1.5l3 .5M404 321l0-2.5l-1.5-2l-2-1.5l-.5-2l1-2.5l1-2.5l2-2.5l1.5 1.5l2.5 0l2 .5l2 1l2 1l2.5 0l2 1l2 1.5l2.5 .5l2.5 1l2 1.5l2.5 0l2.5 1l2.5-.5l2 1l2 .5l1.5 0M440.5 317l1 .5l2 .5M410.5 331.5l.5-2.5l2.5-1.5l1-2.5l1-2l2-.5l2-.5l2.5 0l2-.5l2 0l2.5-1l2.5 0l2-1.5l2.5 0l3-.5l2-1.5M440.5 317l.5 0l2.5 1M443.5 318l2.5 .5l2 1.5l2.5 1l2.5-.5l2.5 .5l2.5-1.5l3 0l3-.5l1.5-2l2.5-1.5l3-1l3 1l2 2l2.5 1M478.5 318.5M407.5 324l-2.5 1.5l-3 1l-2.5 2l-3 .5l-1.5 1.5l-3 0l-2 .5l-2 1.5l-2.5 1l-2 1.5l-2.5 1l-3 3M378 339l-2 1l-1 2l-1.5 2l-2.5 1M371 345l-1.5 2l-2.5 .5l-1.5 2.5l-1 2l-2 1.5l-2 1l-2-.5l-2.5-.5l-2 1l-2.5-.5l-2.5 0l-3-.5l-2.5 1l-.5 2.5l2 3l-.5 2.5l2 2.5l.5 2.5l-1 2.5l-1.5 1.5l.5 3.5l-.5 3M344.5 378l-.5 2l-.5 1M379 302.5l-1 2l-1.5 2l.5 3l2 1.5l1.5 1.5l1 2.5l-1 2l1 2.5l1 3.5l-2 1.5l-1.5 1.5l-1.5 2l1 3l-2 2l-.5 3l2 3M399 345l-2 1.5l-2 1l-2.5 1l-2 .5l-2-1.5l-2.5-.5l-2.5 0l-2.5-1l-2 .5l-2 0l-2.5-.5l-3.5-1M388.5 374.5l-2 2l-3 .5l-2.5 1l-2-1l-2-2l-2.5 .5l-2.5-.5l-2.5 0l-3 0l-2.5-.5l-2-1l-3 0l-2.5 1.5l-2.5 1l-2.5 1l-2 1.5l-2.5-1l-2.5 .5M373 298.5l-2 2.5l-2.5 .5l-2.5-1l-3 .5l-2 2l-1.5 1.5l-2.5 1.5l-2 .5l-2.5-1l-2.5 .5l-2 1l-2.5 .5l-2.5-1.5l-2.5 .5l-3 0l-2-1.5l-2-2l-2-1l-1.5-2l-2-1l-1-3l1.5-3l1-3l0-3l-.5-2l-1-2.5l-.5-2.5l-2 0l-2-1.5l-2.5 0l-2 0l-2.5 .5l-1 2.5l-2.5 0M323 261.5l-2 1l-1.5 2l-1.5 2l-2.5 1l-2 1.5l-2.5-.5l-2 0l-2-.5l-1 2.5l-2 2.5l.5 2l2 1.5l2.5 1.5l2 2l2 1.5M313 281.5l.5 1l-2.5 1l-2.5-.5l-2 1.5l-2.5 0l-2 .5l-4.5 1l-2.5-.5l-2.5-.5l-3 .5l-2.5 .5M287 286l-2-4l-2-1.5l-2 1.5l-2.5-.5M284 297l0-3l.5-3l2.5-2l0-3M289 317.5l-1.5 2l1.5 2l1.5 2.5l1 2.5l.5 3l0 2.5l2 2l1.5 2l0 2.5l-2.5 1.5M311 346.5l-2 1l-2 0l-2.5 0l-2 0l-1.5-2.5l-1.5-2l-2.5-1.5l-4-1.5M400.5 342l2 .5l2.5 0l2 1.5l1 2l-1 2.5l1.5 2.5l-1.5 2l-1.5 2l-1.5 2.5l-2 1l-.5 2.5l-1 2.5l.5 2.5l-1 2.5l-1 2l-.5 2l-.5 2.5l.5 2l2 1.5l0 2.5l1.5 1.5l.5 2.5l2.5 2l2.5 1l1.5 2.5l2 1l2.5 1l.5 3l2 2l1 2.5l2 .5l2 1.5l2 .5l1.5 1.5l2 .5l1.5-2.5l2-2.5l2-.5l2.5-.5l2.5 1l2-.5M439 399l1.5 1.5l2 2l1.5 1.5l1.5 2.5l1.5 3l1 2.5l3 1l1.5 2l1 3l1.5 2.5l.5 2.5l2 1.5l2.5-.5l2 1.5l2.5-.5l2.5 1l2.5 .5M411 357.5l2 1l1.5 2l1 1.5l0 2.5l-.5 2l1.5 2l1 2.5l0 2l1 2.5l1 2l-.5 2.5l.5 2l2 2l1 1.5l1.5 1.5l2.5 .5l2.5 .5l1.5 2l2 1l1.5 1.5l.5 2.5l1 2l2.5 1l1 1M439 399l.5 .5M414 351l1 2.5l2.5 1l2.5 1l2.5 1.5l2 2l2.5 .5l2 .5l2.5-1l2-.5l2.5-.5l2-.5l2-1l2-1l2.5 0l2.5 0l2-.5l2 1l2.5 .5l2 1l2 .5l2.5 0l2 0l2.5 .5l2 1.5l2 1l2 .5l2 0l2.5 .5l2-.5l2-1.5l2.5-.5l3-1M442 372.5l2 0l2.5 .5l2 .5l2 1l2 0l2.5 1l3 0l2.5 1l2 1.5l1.5 1l1.5 2l.5 2.5l1.5 1.5l2 1.5l1.5 2l1.5 2.5l1.5 2l2 1.5l.5 2.5l1 1.5l1.5 1.5l1.5 3l2 2M438.5 379.5l1.5 1.5l1.5 2l2.5 .5l2 1l2.5 .5l2.5 1l2.5 .5l2 1l2 1.5l1.5 2l2 2l2.5 1l1.5 1.5l2.5 .5l2.5 0l2 2l2 1.5l.5 2.5l1.5 3l1.5 2M534 315l-2 1l-2.5 .5l-2.5 0l-2 2l-1.5 2.5l-1 2l-2.5 .5l-1.5 2l-1 2l-1 2l1 3.5M555.5 320l-2 .5l-2-1.5l-2.5 1.5l-1.5 1.5l-2.5 .5l-2 .5l-2 2l-1.5 2l-.5 2.5l0 3l-.5 3l-2 1.5l-1 2.5l-1 2M442 333l2.5-.5l2-.5l2.5 .5l2.5 .5l2.5 0l2 0l2.5 0l2 1l2.5 .5l2-.5l2.5-1l2-.5l2.5 .5M472 333l2.5-.5l3-1l2.5 1l2.5 1l2.5-1l2.5 0M473.5 283l-.5-2l-.5-2l-.5-2.5l0-2.5l-1.5-2l0-3l-1.5-2l1-3l-1-2.5M474.5 288l2.5 1l1.5 2.5l3 0l2 .5l2.5 .5l2 1.5l2 1l2 1l2.5-1l.5-3l2.5-1M456 272l1.5 2.5l1 2l0 3l2 2l1 2.5l.5 2.5l1.5 2.5l-.5 3l.5 2.5l.5 2l1 2.5l.5 2l1.5 2l.5 2.5M560 348l-3 0l-1.5 2.5l-2.5 1l-2.5 1l-2 .5l-2.5 0l-2.5 0l-3-1l-2.5-1l-3-1.5l-1.5-3M339.5 318.5l-2 1l-2.5-.5l-2 .5l-2 1.5l-2 0l-2.5-.5l-2-.5l-2-1l-2 1.5l-2 .5l-1 2.5l-1.5 1.5M362 341.5l0-2l.5-2l1-2.5l0-2l-3-3l-2.5 1.5l-2.5 1.5M370.5 318.5l-.5-2l0-2l0-2.5l-1.5-2l-2.5-1l-1.5-1.5l-1 2l-1 2l0 3M349 295l0-2l.5-2l0-2.5l-2.5-.5l-2.5 .5l-2.5-1.5l-2.5 0l-2.5-1l-2-2l-2.5 0l-3.5 0M358.5 283l-2-1l-1.5-2l-1.5-2l-2.5-.5l-2-1l-2.5-.5l-2.5-1.5l-2-1.5l-1.5-1.5l-1.5-2l-2.5-.5l-2-1l-3.5-1M359.5 263l2.5 0l2.5-1l2.5-.5l2 .5l2.5 0l2.5 0l2.5 2.5l3.5 0l2.5 0l2 .5l2.5 0l2.5 0l2.5 1l2 .5l2.5 1l2 .5l2.5 0l2.5 .5M384.5 303l2-1.5l2-1l2-.5l1.5-3l-.5-2.5l.5-3l-1-2.5l1.5-2.5l2-2l.5-2M395 282.5l.5-.5M413.5 301.5l2-.5l2 .5l2.5 0l2 .5l2 .5l2.5-1l2-1l1.5-2l1-1.5l2-1.5l2-1l2-1.5l2.5-.5l2.5-.5l3.5 0M445.5 292l.5 0M420.5 306l2-.5l2.5 0l2 0l2 0l2 0l2.5 0l2 0l2 0l2.5 0l2 0l2 .5l2 1l2.5-1l2-.5l2 .5l2.5-.5l2.5-.5l2 0l2.5 1l2 0M431 325l2.5-.5l2.5 0l2.5 0l2 0l2.5 0l2.5 0l2 .5l2 1l2.5-.5l2-1l2 .5l2.5 .5l2.5-.5l2 1.5l2 1l1 1.5l2 1.5l2 1l2 1.5M424 348l2.5 .5l2.5 0l2.5-.5l2-1.5l2.5 0l2.5 0l2.5 .5l2 0l2.5 0l2.5 1l2.5 1l2 .5l2 1.5l2.5 .5l2 1l2.5 1l2 1l2.5-1l2-.5l2.5 .5l2.5 .5l2.5-.5" fill="none" stroke="#0000e8" stroke-width="1.1" stroke-linejoin="round"/><path d="M483.5 274l2-1l2-.5l2.5 2l3-1l2.5 .5l-.5 3l-2.5 1l-2 2.5l1 2.5l-.5 3l2 2l1.5 1.5l3 1l2.5 1l2 1.5l1.5 1.5l1.5 2l2.5 .5l2.5 .5l1.5 1l1.5 2.5l-.5 3l1.5 2l2 2l2.5 2l.5 3l-2.5 2l-1.5 3l-2.5 2l-1.5 2l0 2l-.5 2.5l2 2l2.5 1.5l.5 3l1.5 1.5l2.5 1l1.5 2l2 2.5l0 2.5l1 2.5l2.5 2.5l-1 2l-1.5 1.5l-2 1.5l.5 2.5l0 3.5l-2.5 2l-2 2l-1.5 2.5l-.5 2.5l-.5 2l-1.5 1.5l-1.5 2l.5 2.5l-.5 3l1.5 2l-.5 2l-1.5 2l-1.5 2l-1 3.5l2 1.5l.5 2.5l2 1.5l2 .5l2 1.5l2 0l2.5 1l1 2.5l2.5 3M592 322.5l-1.5-1.5l-2.5 .5l-1 4l-2.5 .5l-1.5 2l-1.5 2l0 2.5l-2.5 1l-2.5 1.5l-2 2l-2.5 0l-1.5-2l-2.5-1l-3 1l-2.5-1l-2.5-1.5l-3 0l-2 2.5l-1.5 2.5l-2.5 1l-3 .5l-2.5 1.5l-2.5 1l-2.5-.5l-2.5-.5l-2.5 1l-1.5 2l-1.5 2l-2 1l-4 1" fill="none" stroke="#0000e8" stroke-width="1.8" stroke-linejoin="round"/></svg>
<div class="a dith" style="left:693px;top:150px;width:16px;height:348px;"></div>
<div class="a " style="left:693px;top:150px;width:16px;height:15px;background:#c0c0c0;border:1px solid;border-color:#ffffff #000000 #000000 #ffffff;box-shadow:inset 1px 1px #c0c0c0,inset -1px -1px #808080;"></div>
<svg class="a" style="left:0;top:0" width="764" height="605"><polygon points="697.5,159.5 704.5,159.5 701,155.5" fill="#000000"/></svg>
<div class="a " style="left:693px;top:475px;width:16px;height:8px;background:#c0c0c0;border:1px solid;border-color:#ffffff #000000 #000000 #ffffff;box-shadow:inset 1px 1px #c0c0c0,inset -1px -1px #808080;"></div>
<div class="a " style="left:693px;top:483px;width:16px;height:15px;background:#c0c0c0;border:1px solid;border-color:#ffffff #000000 #000000 #ffffff;box-shadow:inset 1px 1px #c0c0c0,inset -1px -1px #808080;"></div>
<svg class="a" style="left:0;top:0" width="764" height="605"><polygon points="697.5,488.5 704.5,488.5 701,492.5" fill="#000000"/></svg>
<div class="a dith" style="left:239px;top:499px;width:454px;height:16px;"></div>
<div class="a " style="left:239px;top:499px;width:16px;height:16px;background:#c0c0c0;border:1px solid;border-color:#ffffff #000000 #000000 #ffffff;box-shadow:inset 1px 1px #c0c0c0,inset -1px -1px #808080;"></div>
<svg class="a" style="left:0;top:0" width="764" height="605"><polygon points="248.5,503.5 248.5,510.5 244.5,507" fill="#000000"/></svg>
<div class="a " style="left:677px;top:499px;width:16px;height:16px;background:#c0c0c0;border:1px solid;border-color:#ffffff #000000 #000000 #ffffff;box-shadow:inset 1px 1px #c0c0c0,inset -1px -1px #808080;"></div>
<svg class="a" style="left:0;top:0" width="764" height="605"><polygon points="683.5,503.5 683.5,510.5 687.5,507" fill="#000000"/></svg>
<div class="a " style="left:466px;top:499px;width:8px;height:16px;background:#c0c0c0;border:1px solid;border-color:#ffffff #000000 #000000 #ffffff;box-shadow:inset 1px 1px #c0c0c0,inset -1px -1px #808080;"></div>
<div class="a " style="left:693px;top:499px;width:16px;height:16px;background:#c0c0c0;"></div>
<div class="a " style="left:228px;top:142px;width:66px;height:16px;background:#ffffe1;border:1px solid #000;"></div>
<span class="t" style="left:231px;top:144.64px;font-size:12px;line-height:13.79px;color:#000;transform:scaleX(0.8746)">Zoom Extent</span>
<div class="a " style="left:36px;top:516px;width:198px;height:1px;background:#ffffff;"></div>
<div class="a " style="left:32px;top:525px;width:682px;height:1px;background:#ffffff;"></div>
<div class="a " style="left:32px;top:528px;width:221px;height:23px;background:#c0c0c0;border:1px solid;border-color:#808080 #ffffff #ffffff #808080;"></div>
<div class="a " style="left:254px;top:528px;width:220px;height:23px;background:#c0c0c0;border:1px solid;border-color:#808080 #ffffff #ffffff #808080;"></div>
<div class="a " style="left:476px;top:528px;width:220px;height:23px;background:#c0c0c0;border:1px solid;border-color:#808080 #ffffff #ffffff #808080;"></div>
<span class="t" style="left:36.6px;top:534.14px;font-size:12px;line-height:13.79px;color:#000;transform:scaleX(0.8869)">Scale: 1 in. = 12.95 Decimal Degrees</span>
<span class="t" style="left:257px;top:534.14px;font-size:12px;line-height:13.79px;color:#000;transform:scaleX(0.9180)">X:-100.92 Y:40.95</span>
<span class="t" style="left:480.3px;top:534.14px;font-size:12px;line-height:13.79px;color:#000;transform:scaleX(0.8886)">Units: Decimal Degrees</span>
<svg class="a" style="left:700px;top:538px" width="13" height="13"><path d="M12 1 L1 12 M12 5 L5 12 M12 9 L9 12" stroke="#808080" stroke-width="1.6" fill="none"/><path d="M12 0 L0 12 M12 4 L4 12 M12 8 L8 12" stroke="#fff" stroke-width="1" fill="none"/></svg>
<div class="a " style="left:4px;top:585px;width:544px;height:17px;background:#c0c0c0;border:1px solid;border-color:#808080 #ffffff #ffffff #808080;"></div>
<div class="a " style="left:550px;top:585px;width:94px;height:17px;background:#c0c0c0;border:1px solid;border-color:#808080 #ffffff #ffffff #808080;"></div>
<div class="a " style="left:646px;top:585px;width:96px;height:17px;background:#c0c0c0;border:1px solid;border-color:#808080 #ffffff #ffffff #808080;"></div>
<span class="t" style="left:8px;top:587.14px;font-size:12px;line-height:13.79px;color:#000;transform:scaleX(0.8648)">Ready</span>
<span class="t" style="left:555.5px;top:587.14px;font-size:12px;line-height:13.79px;color:#000;transform:scaleX(0.9891)">4/3/98</span>
<span class="t" style="left:651.5px;top:587.14px;font-size:12px;line-height:13.79px;color:#000;transform:scaleX(0.8950)">1:29 PM</span>
<svg class="a" style="left:747px;top:588px" width="13" height="13"><path d="M12 1 L1 12 M12 5 L5 12 M12 9 L9 12" stroke="#808080" stroke-width="1.6" fill="none"/><path d="M12 0 L0 12 M12 4 L4 12 M12 8 L8 12" stroke="#fff" stroke-width="1" fill="none"/></svg>
</body></html>
